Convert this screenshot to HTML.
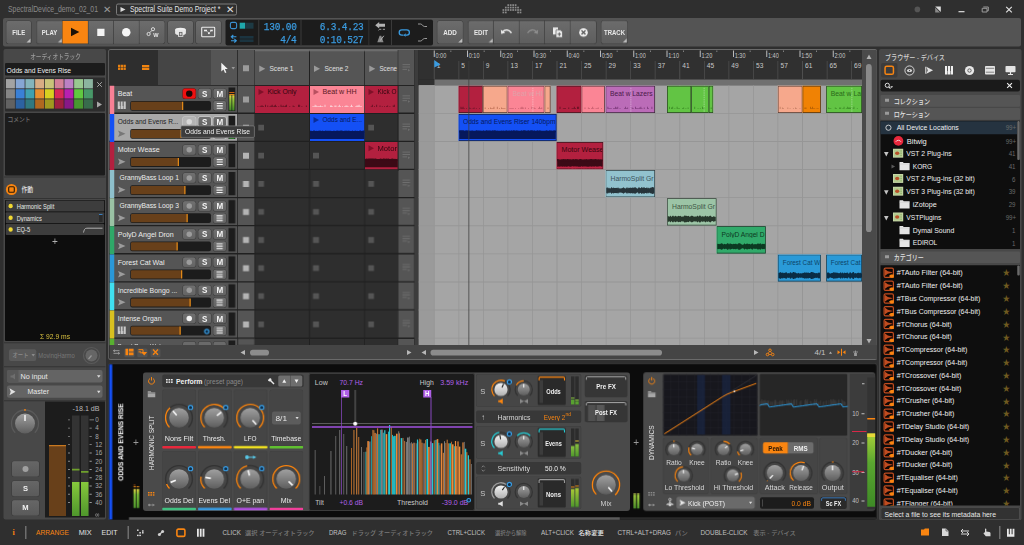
<!DOCTYPE html>
<html lang="ja"><head><meta charset="utf-8"><title>Bitwig Studio</title>
<style>
html,body{margin:0;padding:0;background:#2f2f2f;overflow:hidden;}
body{width:1024px;height:545px;position:relative;overflow:hidden;font-family:"Liberation Sans","Noto Sans CJK JP",sans-serif;}
#r{position:absolute;left:0;top:0;width:4096px;height:2180px;transform:scale(0.25);transform-origin:0 0;overflow:hidden;}
#r div,#r svg,#r span.t{position:absolute;}
span.t{white-space:nowrap;display:block;}
svg{overflow:visible;}
</style></head>
<body>
<div id="r">
<div style="left:0px;top:0px;width:4096px;height:72px;background:#2f2f2f;"></div>
<span class="t" style="top:11.8px;font-size:34px;line-height:50px;color:#8a8a8a;left:32px;transform-origin:0 50%;transform:scaleX(0.807);">SpectralDevice_demo_02_01</span>
<span class="t" style="top:10.2px;font-size:38px;line-height:54px;color:#9a9a9a;left:410px;transform-origin:0 50%;transform:scaleX(1.000);">✕</span>
<div style="left:464px;top:14px;width:484px;height:48px;background:transparent;border-radius:8px;border:4px solid #7c7c7c;box-sizing:border-box;"></div>
<svg style="left:482px;top:28px;width:20px;height:20px;" viewBox="0 0 5 5"><path d="M0 0L5 2.5L0 5Z" fill="#ddd"/></svg>
<span class="t" style="top:11.8px;font-size:34px;line-height:50px;color:#e6e6e6;left:520px;transform-origin:0 50%;transform:scaleX(0.805);">Spectral Suite Demo Project *</span>
<span class="t" style="top:10.2px;font-size:38px;line-height:54px;color:#e0e0e0;left:902px;transform-origin:0 50%;transform:scaleX(1.000);">✕</span>
<svg style="left:2010px;top:17.2px;width:80px;height:40px;" viewBox="0 0 20 10"><rect x="4.90" y="0.00" width="1.7" height="1.7" fill="#8c8c8c"/><rect x="7.35" y="0.00" width="1.7" height="1.7" fill="#8c8c8c"/><rect x="9.80" y="0.00" width="1.7" height="1.7" fill="#8c8c8c"/><rect x="12.25" y="0.00" width="1.7" height="1.7" fill="#8c8c8c"/><rect x="2.45" y="2.45" width="1.7" height="1.7" fill="#8c8c8c"/><rect x="4.90" y="2.45" width="1.7" height="1.7" fill="#8c8c8c"/><rect x="7.35" y="2.45" width="1.7" height="1.7" fill="#8c8c8c"/><rect x="9.80" y="2.45" width="1.7" height="1.7" fill="#8c8c8c"/><rect x="12.25" y="2.45" width="1.7" height="1.7" fill="#8c8c8c"/><rect x="14.70" y="2.45" width="1.7" height="1.7" fill="#8c8c8c"/><rect x="0.00" y="4.90" width="1.7" height="1.7" fill="#8c8c8c"/><rect x="2.45" y="4.90" width="1.7" height="1.7" fill="#8c8c8c"/><rect x="4.90" y="4.90" width="1.7" height="1.7" fill="#8c8c8c"/><rect x="7.35" y="4.90" width="1.7" height="1.7" fill="#8c8c8c"/><rect x="9.80" y="4.90" width="1.7" height="1.7" fill="#8c8c8c"/><rect x="12.25" y="4.90" width="1.7" height="1.7" fill="#8c8c8c"/><rect x="14.70" y="4.90" width="1.7" height="1.7" fill="#8c8c8c"/><rect x="17.15" y="4.90" width="1.7" height="1.7" fill="#8c8c8c"/><rect x="0.00" y="7.35" width="1.7" height="1.7" fill="#8c8c8c"/><rect x="2.45" y="7.35" width="1.7" height="1.7" fill="#8c8c8c"/><rect x="14.70" y="7.35" width="1.7" height="1.7" fill="#8c8c8c"/><rect x="17.15" y="7.35" width="1.7" height="1.7" fill="#8c8c8c"/></svg>
<svg style="left:3648px;top:12px;width:440px;height:48px;" viewBox="0 0 110 12"><circle cx="5.400" cy="6.400" r="2.800" fill="#555"/>
    <path d="M23.200 3.400H28.800V9Z" fill="#dcdcdc"/><path d="M23.200 4.600V9.400H28Z" fill="#8a8a8a"/>
    <rect x="46.500" y="8" width="6" height="1.300" fill="#d0d0d0"/>
    <path d="M71.300 4H76.300V7.800H75M70.200 5.300H75V9H70.200Z" fill="none" stroke="#9a9a9a" stroke-width="1"/>
    <path d="M94.200 3.800L99.800 9.400M99.800 3.800L94.200 9.400" stroke="#e0e0e0" stroke-width="1.200"/></svg>
<div style="left:12px;top:72px;width:4072px;height:114px;background:#545454;border-radius:8px;"></div>
<div style="left:26px;top:84px;width:98px;height:90px;background:linear-gradient(#6c6c6c,#5e5e5e);border-radius:8px;box-shadow:0 0 0 2.4px #3c3c3c;"></div>
<span class="t" style="top:107.2px;font-size:28px;line-height:44px;color:#e8e8e8;font-weight:700;left:-725.2px;width:1600px;text-align:center;transform-origin:50% 50%;transform:scaleX(0.857);">FILE</span>
<svg style="left:106px;top:154px;width:16px;height:16px;" viewBox="0 0 4 4"><path d="M4 0V4H0Z" fill="#bdbdbd"/></svg>
<div style="left:148px;top:84px;width:102px;height:90px;background:linear-gradient(#6c6c6c,#5e5e5e);border-radius:8px 0 0 8px;box-shadow:0 0 0 2.4px #3c3c3c;"></div>
<span class="t" style="top:107.2px;font-size:28px;line-height:44px;color:#e8e8e8;font-weight:700;left:-602px;width:1600px;text-align:center;transform-origin:50% 50%;transform:scaleX(0.860);">PLAY</span>
<svg style="left:232px;top:154px;width:16px;height:16px;" viewBox="0 0 4 4"><path d="M4 0V4H0Z" fill="#bdbdbd"/></svg>
<div style="left:250px;top:84px;width:102px;height:90px;background:#f98511;border-radius:0;box-shadow:0 0 0 2.4px #3c3c3c;"></div>
<svg style="left:282px;top:110px;width:36px;height:36px;" viewBox="0 0 9 9"><path d="M0.5 0.3L8.8 4.5L0.5 8.7Z" fill="#1a1208"/></svg>
<div style="left:354.4px;top:84px;width:98.4px;height:90px;background:linear-gradient(#6c6c6c,#5e5e5e);border-radius:0;box-shadow:0 0 0 2.4px #3c3c3c;"></div>
<div style="left:389.2px;top:114.8px;width:28.8px;height:28.8px;background:#f4f4f4;"></div>
<div style="left:455.2px;top:84px;width:100.8px;height:90px;background:linear-gradient(#6c6c6c,#5e5e5e);border-radius:0;box-shadow:0 0 0 2.4px #3c3c3c;"></div>
<div style="left:488px;top:111.6px;width:34.4px;height:34.4px;background:#f6f6f6;border-radius:20px;"></div>
<div style="left:558.4px;top:84px;width:99.6px;height:90px;background:linear-gradient(#6c6c6c,#5e5e5e);border-radius:0 8px 8px 0;box-shadow:0 0 0 2.4px #3c3c3c;"></div>
<svg style="left:584px;top:104px;width:56px;height:48px;" viewBox="0 0 14 12"><circle cx="2.6" cy="8" r="1.6" fill="none" stroke="#e4e4e4" stroke-width="0.9"/><circle cx="7" cy="3.2" r="1.6" fill="none" stroke="#e4e4e4" stroke-width="0.9"/><path d="M3.7 6.8L5.9 4.4" stroke="#e4e4e4" stroke-width="0.9"/><text x="7.2" y="11.3" font-family="Liberation Sans,sans-serif" font-size="5.6" font-weight="700" fill="#e8e8e8">W</text></svg>
<div style="left:672px;top:84px;width:100px;height:90px;background:linear-gradient(#6c6c6c,#5e5e5e);border-radius:8px;box-shadow:0 0 0 2.4px #3c3c3c;"></div>
<svg style="left:694px;top:106px;width:56px;height:44px;" viewBox="0 0 14 11"><ellipse cx="7" cy="3.2" rx="5.4" ry="2" fill="#f0f0f0"/><path d="M1.6 3.2v3.6c0 1.1 2.4 2 5.4 2s5.4-.9 5.4-2V3.200z" fill="#e6e6e6"/><rect x="5" y="5.2" width="4.4" height="4.6" fill="#5c5c5c" stroke="#f0f0f0" stroke-width="0.8"/><path d="M7.2 6.3v2.4M6 7.500h2.400" stroke="#f0f0f0" stroke-width="0.8"/></svg>
<div style="left:784px;top:84px;width:100px;height:90px;background:linear-gradient(#6c6c6c,#5e5e5e);border-radius:8px;box-shadow:0 0 0 2.4px #3c3c3c;"></div>
<svg style="left:804px;top:106px;width:60px;height:44px;" viewBox="0 0 15 11"><rect x="0.7" y="0.7" width="13" height="9.6" fill="none" stroke="#ececec" stroke-width="1.1" rx="0.8"/><rect x="3" y="3.2" width="3" height="1.6" fill="#ececec"/><rect x="9.2" y="3.2" width="2.6" height="1.6" fill="#ececec"/><rect x="7" y="5.8" width="1.8" height="1.800" fill="#ececec"/><path d="M6 4.8l1.400 1.400M9.800 4.8L8.600 6" stroke="#ececec" stroke-width="0.7"/></svg>
<div style="left:902px;top:78px;width:830px;height:104px;background:#1c1c1c;border-radius:8px;"></div>
<div style="left:1033.2px;top:80px;width:3.6px;height:100px;background:#3a3a3a;"></div>
<div style="left:1202.4px;top:80px;width:3.6px;height:100px;background:#3a3a3a;"></div>
<div style="left:1473.6px;top:80px;width:3.6px;height:100px;background:#3a3a3a;"></div>
<div style="left:1564.4px;top:80px;width:3.6px;height:100px;background:#3a3a3a;"></div>
<svg style="left:920px;top:88px;width:104px;height:88px;" viewBox="0 0 26 22"><rect x="0.400" y="0.400" width="6.200" height="6.200" rx="1.600" fill="none" stroke="#3a8fd0" stroke-width="1.100"/>
    <rect x="9.700" y="0.7" width="5.300" height="6" fill="#1fa8ac"/><rect x="15" y="0.7" width="8.500" height="6" fill="#1d3a44"/>
    <path d="M6.400 14.800H1.500M3.300 13l-2 1.800l2 1.800M1 18.700h4.900M4.300 16.900l2 1.800l-2 1.800" fill="none" stroke="#3a9be0" stroke-width="1.100"/>
    <rect x="9.700" y="14" width="13.800" height="2.600" fill="#1b3440"/><rect x="9.700" y="17.400" width="13.800" height="2.600" fill="#1b3440"/></svg>
<span class="t" style="top:77.2px;font-size:44px;line-height:60px;color:#3a9be0;right:2910px;transform-origin:100% 50%;transform:scaleX(0.860);font-family:'Liberation Mono',monospace;letter-spacing:-1px;-webkit-text-stroke:1px #3a9be0;">130.00</span>
<span class="t" style="top:128.4px;font-size:44px;line-height:60px;color:#3a9be0;right:2910px;transform-origin:100% 50%;transform:scaleX(0.860);font-family:'Liberation Mono',monospace;letter-spacing:-1px;-webkit-text-stroke:1px #3a9be0;">4/4</span>
<span class="t" style="top:77.2px;font-size:44px;line-height:60px;color:#3a9be0;right:2642px;transform-origin:100% 50%;transform:scaleX(0.860);font-family:'Liberation Mono',monospace;letter-spacing:-1px;-webkit-text-stroke:1px #3a9be0;">6.3.4.23</span>
<span class="t" style="top:128.4px;font-size:44px;line-height:60px;color:#3a9be0;right:2642px;transform-origin:100% 50%;transform:scaleX(0.860);font-family:'Liberation Mono',monospace;letter-spacing:-1px;-webkit-text-stroke:1px #3a9be0;">0:10.527</span>
<svg style="left:1492px;top:86px;width:64px;height:88px;" viewBox="0 0 16 22"><path d="M2.200 3.700L6.200 0.500V2.200H12V5.200H6.200V6.900Z" fill="#b4b4b4"/><path d="M6.500 7.800H8.300M9.800 7.800H12M6.500 7.800L5.600 8.900" stroke="#a0a0a0" stroke-width="1" fill="none"/>
    <path d="M4.300 20.700L6.600 14.300H8.200L10.500 20.700Z" fill="#8a8a8a"/><path d="M7.400 19L10.800 14.300" stroke="#bdbdbd" stroke-width="0.9"/></svg>
<svg style="left:1593.6px;top:116.8px;width:46.4px;height:30px;" viewBox="0 0 11.6 7.5"><path d="M5 5.900H3.300A2.600 2.600 0 0 1 3.300 0.700H8.300A2.600 2.600 0 0 1 8.300 5.900H7" fill="none" stroke="#3a9be0" stroke-width="1.300"/><path d="M7.200 4L4.800 5.900L7.200 7.500Z" fill="#3a9be0"/></svg>
<svg style="left:1670.4px;top:86px;width:36px;height:88px;" viewBox="0 0 9 22"><path d="M0.500 2.500H3C5 2.500 5 5 7 5H9.500" fill="none" stroke="#aaa" stroke-width="0.9"/><path d="M0.500 19.500H3C5 19.500 5 17 7 17H9.500" fill="none" stroke="#aaa" stroke-width="0.9"/></svg>
<div style="left:1750px;top:84px;width:101.2px;height:90px;background:linear-gradient(#6c6c6c,#5e5e5e);border-radius:8px;box-shadow:0 0 0 2.4px #3c3c3c;"></div>
<span class="t" style="top:107.2px;font-size:28px;line-height:44px;color:#e8e8e8;font-weight:700;left:1000px;width:1600px;text-align:center;transform-origin:50% 50%;transform:scaleX(0.897);">ADD</span>
<svg style="left:1833.2px;top:154px;width:16px;height:16px;" viewBox="0 0 4 4"><path d="M4 0V4H0Z" fill="#bdbdbd"/></svg>
<div style="left:1873.6px;top:84px;width:100px;height:90px;background:linear-gradient(#6c6c6c,#5e5e5e);border-radius:8px 0 0 8px;box-shadow:0 0 0 2.4px #3c3c3c;"></div>
<span class="t" style="top:107.2px;font-size:28px;line-height:44px;color:#e8e8e8;font-weight:700;left:1124px;width:1600px;text-align:center;transform-origin:50% 50%;transform:scaleX(0.878);">EDIT</span>
<svg style="left:1955.2px;top:154px;width:16px;height:16px;" viewBox="0 0 4 4"><path d="M4 0V4H0Z" fill="#bdbdbd"/></svg>
<div style="left:1975.2px;top:84px;width:101.2px;height:90px;background:linear-gradient(#6c6c6c,#5e5e5e);border-radius:0;box-shadow:0 0 0 2.4px #3c3c3c;"></div>
<svg style="left:2000px;top:110px;width:52px;height:36px;" viewBox="0 0 13 9"><path d="M2.500 4.500C5 1.500 9 1.800 11.500 5.500" fill="none" stroke="#ececec" stroke-width="1.400"/><path d="M0.800 2.200L1.300 6.600L5.300 5.200Z" fill="#ececec"/></svg>
<div style="left:2078px;top:84px;width:100.4px;height:90px;background:linear-gradient(#6c6c6c,#5e5e5e);border-radius:0;box-shadow:0 0 0 2.4px #3c3c3c;"></div>
<svg style="left:2104px;top:110px;width:52px;height:36px;" viewBox="0 0 13 9"><path d="M10.500 4.500C8 1.500 4 1.800 1.500 5.500" fill="none" stroke="#8e8e8e" stroke-width="1.300"/><path d="M12.200 2.200L11.700 6.600L7.700 5.200Z" fill="#8e8e8e"/></svg>
<div style="left:2180px;top:84px;width:100.8px;height:90px;background:linear-gradient(#6c6c6c,#5e5e5e);border-radius:0;box-shadow:0 0 0 2.4px #3c3c3c;"></div>
<svg style="left:2210px;top:108px;width:44px;height:44px;" viewBox="0 0 11 11"><path d="M0.500 0.500H5.500V7.500H0.500Z" fill="#ececec"/><path d="M3.500 3H8L10 5V10.500H3.500Z" fill="#ececec" stroke="#5e5e5e" stroke-width="0.700"/><path d="M6.800 5.500V9M5 7.200H8.600" stroke="#5e5e5e" stroke-width="1"/></svg>
<div style="left:2282.4px;top:84px;width:101.6px;height:90px;background:linear-gradient(#6c6c6c,#5e5e5e);border-radius:0 8px 8px 0;box-shadow:0 0 0 2.4px #3c3c3c;"></div>
<svg style="left:2314px;top:110px;width:40px;height:40px;" viewBox="0 0 10 10"><circle cx="5" cy="5" r="4.300" fill="#f0f0f0"/><path d="M3 3L7 7M7 3L3 7" stroke="#5e5e5e" stroke-width="1.400"/></svg>
<div style="left:2406px;top:84px;width:103.2px;height:90px;background:linear-gradient(#6c6c6c,#5e5e5e);border-radius:8px;box-shadow:0 0 0 2.4px #3c3c3c;"></div>
<span class="t" style="top:107.2px;font-size:28px;line-height:44px;color:#e8e8e8;font-weight:700;left:1657.6px;width:1600px;text-align:center;transform-origin:50% 50%;transform:scaleX(0.857);">TRACK</span>
<svg style="left:2491.2px;top:154px;width:16px;height:16px;" viewBox="0 0 4 4"><path d="M4 0V4H0Z" fill="#bdbdbd"/></svg>
<div style="left:14px;top:196px;width:410px;height:1882px;background:#484848;border-radius:8px;"></div>
<span class="t" style="top:204px;font-size:28px;line-height:44px;color:#9a9a9a;font-weight:500;left:-578px;width:1600px;text-align:center;transform-origin:50% 50%;transform:scaleX(0.810);">オーディオトラック</span>
<div style="left:20px;top:252px;width:400px;height:50px;background:#1c1c1c;border-radius:4px;"></div>
<span class="t" style="top:256.4px;font-size:32px;line-height:48px;color:#efefef;left:26px;transform-origin:0 50%;transform:scaleX(0.834);">Odds and Evens Rise</span>
<div style="left:20px;top:310px;width:400px;height:136px;background:#2c2c2c;border-radius:4px;"></div>
<svg style="left:20px;top:310px;width:400px;height:136px;" viewBox="0 0 100 34"><rect x="0.90" y="1.60" width="9" height="9.3" fill="#a3a3a3"/><rect x="10.65" y="1.60" width="9" height="9.3" fill="#86a6d4"/><rect x="20.40" y="1.60" width="9" height="9.3" fill="#84b4bc"/><rect x="30.15" y="1.60" width="9" height="9.3" fill="#d8ac84"/><rect x="39.90" y="1.60" width="9" height="9.3" fill="#c9c47a"/><rect x="49.65" y="1.60" width="9" height="9.3" fill="#d48098"/><rect x="59.40" y="1.60" width="9" height="9.3" fill="#bc80c4"/><rect x="69.15" y="1.60" width="9" height="9.3" fill="#98c890"/><rect x="78.90" y="1.60" width="9" height="9.3" fill="#8cb4a0"/><rect x="0.90" y="11.70" width="9" height="9.3" fill="#858585"/><rect x="10.65" y="11.70" width="9" height="9.3" fill="#3a80d6"/><rect x="20.40" y="11.70" width="9" height="9.3" fill="#40a0b0"/><rect x="30.15" y="11.70" width="9" height="9.3" fill="#e89030"/><rect x="39.90" y="11.70" width="9" height="9.3" fill="#d8d020"/><rect x="49.65" y="11.70" width="9" height="9.3" fill="#d82858"/><rect x="59.40" y="11.70" width="9" height="9.3" fill="#b820b0"/><rect x="69.15" y="11.70" width="9" height="9.3" fill="#60c840"/><rect x="78.90" y="11.70" width="9" height="9.3" fill="#489868"/><rect x="0.90" y="21.80" width="9" height="9.3" fill="#626262"/><rect x="10.65" y="21.80" width="9" height="9.3" fill="#2c62a2"/><rect x="20.40" y="21.80" width="9" height="9.3" fill="#307880"/><rect x="30.15" y="21.80" width="9" height="9.3" fill="#b06820"/><rect x="39.90" y="21.80" width="9" height="9.3" fill="#a09820"/><rect x="49.65" y="21.80" width="9" height="9.3" fill="#a02040"/><rect x="59.40" y="21.80" width="9" height="9.3" fill="#881888"/><rect x="69.15" y="21.80" width="9" height="9.3" fill="#489830"/><rect x="78.90" y="21.80" width="9" height="9.3" fill="#386c4c"/></svg>
<svg style="left:386px;top:326px;width:24px;height:24px;" viewBox="0 0 6 6"><path d="M0.700 0.700L5.300 5.300M5.300 0.700L0.700 5.300" stroke="#a8a8a8" stroke-width="1"/></svg>
<svg style="left:388px;top:406px;width:20px;height:24px;" viewBox="0 0 5 6"><path d="M0 0L5 3L0 6Z" fill="#a8a8a8"/></svg>
<div style="left:20px;top:452px;width:400px;height:250px;background:#1c1c1c;border-radius:4px;"></div>
<span class="t" style="top:457.8px;font-size:26px;line-height:42px;color:#6e6e6e;font-weight:500;left:30px;transform-origin:0 50%;transform:scaleX(0.885);">コメント</span>
<div style="left:16px;top:706px;width:406px;height:4px;background:#333;"></div>
<svg style="left:22px;top:734px;width:48px;height:48px;" viewBox="0 0 12 12"><circle cx="6" cy="6" r="5.600" fill="#f98511"/><rect x="3.200" y="3.200" width="5.600" height="5.600" rx="1" fill="none" stroke="#2a1a06" stroke-width="1.100"/></svg>
<span class="t" style="top:737.2px;font-size:28px;line-height:44px;color:#e0e0e0;font-weight:500;left:86px;transform-origin:0 50%;transform:scaleX(0.839);">作動</span>
<div style="left:16px;top:792px;width:406px;height:4px;background:#333;"></div>
<div style="left:20px;top:800px;width:400px;height:564px;background:#0d0d0d;border-radius:4px;"></div>
<div style="left:23.2px;top:802px;width:393.6px;height:43.6px;background:#3d3d3d;border-radius:4px;"></div>
<div style="left:33.6px;top:815.2px;width:17.6px;height:17.6px;background:#f0d832;border-radius:8.8px;"></div>
<span class="t" style="top:802.2px;font-size:30px;line-height:46px;color:#e6e6e6;left:67.2px;transform-origin:0 50%;transform:scaleX(0.769);">Harmonic Split</span>
<div style="left:23.2px;top:849px;width:393.6px;height:43.6px;background:#3d3d3d;border-radius:4px;"></div>
<div style="left:33.6px;top:862.2px;width:17.6px;height:17.6px;background:#f0d832;border-radius:8.8px;"></div>
<span class="t" style="top:849.2px;font-size:30px;line-height:46px;color:#e6e6e6;left:67.2px;transform-origin:0 50%;transform:scaleX(0.759);">Dynamics</span>
<div style="left:23.2px;top:896px;width:393.6px;height:43.6px;background:#3d3d3d;border-radius:4px;"></div>
<div style="left:33.6px;top:909.2px;width:17.6px;height:17.6px;background:#f0d832;border-radius:8.8px;"></div>
<span class="t" style="top:896.2px;font-size:30px;line-height:46px;color:#e6e6e6;left:67.2px;transform-origin:0 50%;transform:scaleX(0.771);">EQ-5</span>
<div style="left:396px;top:856px;width:14px;height:32px;background:#2a2a2a;"></div>
<div style="left:396px;top:856px;width:14px;height:4px;background:#3a7fc0;"></div>
<svg style="left:332px;top:908px;width:80px;height:24px;" viewBox="0 0 20 6"><path d="M0.500 5.500C1.500 1.500 2 1.200 5 1.200H19.500" fill="none" stroke="#b0b0b0" stroke-width="1"/></svg>
<span class="t" style="top:937.2px;font-size:40px;line-height:56px;color:#b0b0b0;left:-580px;width:1600px;text-align:center;transform-origin:50% 50%;transform:scaleX(1.000);">+</span>
<span class="t" style="top:1324.2px;font-size:30px;line-height:46px;color:#d8c040;left:-580px;width:1600px;text-align:center;transform-origin:50% 50%;transform:scaleX(0.898);">Σ 92.9 ms</span>
<div style="left:16px;top:1369.2px;width:406px;height:4px;background:#333;"></div>
<div style="left:36px;top:1397.2px;width:109.2px;height:46.8px;background:#5a5a5a;border-radius:8px;"></div>
<span class="t" style="top:1400.8px;font-size:24px;line-height:40px;color:#8a8a8a;font-weight:500;left:50px;transform-origin:0 50%;transform:scaleX(0.889);">オート</span>
<svg style="left:126px;top:1416px;width:14px;height:10px;" viewBox="0 0 3.5 2.5"><path d="M0 0H3.500L1.750 2.500Z" fill="#8a8a8a"/></svg>
<span class="t" style="top:1398.8px;font-size:28px;line-height:44px;color:#777;left:153.2px;transform-origin:0 50%;transform:scaleX(0.838);">MovingHarmo</span>
<svg style="left:330px;top:1386px;width:72px;height:72px;" viewBox="0 0 18 18"><circle cx="9" cy="9" r="8" fill="none" stroke="#5a5a5a" stroke-width="1.200"/><circle cx="9" cy="9" r="6" fill="#666"/><path d="M9 9L6 12.500" stroke="#999" stroke-width="1.200"/></svg>
<div style="left:16px;top:1465.2px;width:406px;height:4px;background:#333;"></div>
<div style="left:28px;top:1480px;width:382px;height:50.4px;background:#646464;border-radius:8px;"></div>
<div style="left:28px;top:1480px;width:46px;height:50.4px;background:#585858;border-radius:8px 0 0 8px;"></div>
<svg style="left:42px;top:1494px;width:20px;height:24px;" viewBox="0 0 5 6"><path d="M0 2H1.800L4.500 0V6L1.800 4H0Z" fill="#6e6e6e"/></svg>
<span class="t" style="top:1482px;font-size:32px;line-height:48px;color:#e8e8e8;left:82px;transform-origin:0 50%;transform:scaleX(0.906);">No input</span>
<svg style="left:388px;top:1501.2px;width:14px;height:10px;" viewBox="0 0 3.5 2.5"><path d="M0 0H3.500L1.750 2.500Z" fill="#ddd"/></svg>
<div style="left:28px;top:1542.4px;width:382px;height:48.8px;background:#646464;border-radius:8px;"></div>
<svg style="left:38px;top:1552.8px;width:24px;height:28px;" viewBox="0 0 6 7"><path d="M0 0L6 3.500L0 7L1.200 3.500Z" fill="#e0e0e0"/></svg>
<span class="t" style="top:1541.6px;font-size:32px;line-height:48px;color:#e8e8e8;left:110px;transform-origin:0 50%;transform:scaleX(0.879);">Master</span>
<svg style="left:388px;top:1563.2px;width:14px;height:10px;" viewBox="0 0 3.5 2.5"><path d="M0 0H3.500L1.750 2.500Z" fill="#ddd"/></svg>
<div style="left:16px;top:1601.2px;width:406px;height:4px;background:#333;"></div>
<div style="left:180px;top:1606px;width:240px;height:464px;background:#1c1c1c;"></div>
<svg style="left:40px;top:1634px;width:120px;height:120px;" viewBox="0 0 30 30"><path d="M5.200 24.300A13.500 13.500 0 1 1 24.800 24.300" fill="none" stroke="#5a5a5a" stroke-width="1.300"/>
    <defs><linearGradient id="kg" x1="0" y1="0" x2="0" y2="1"><stop offset="0" stop-color="#a0a0a0"/><stop offset="1" stop-color="#5e5e5e"/></linearGradient></defs>
    <circle cx="15" cy="15" r="10" fill="url(#kg)"/><path d="M15 12.500V6.500" stroke="#f4f4f4" stroke-width="1.500"/><circle cx="15" cy="1.400" r="0.900" fill="#f98511"/></svg>
<span class="t" style="top:1611px;font-size:30px;line-height:46px;color:#b8b8b8;right:3698px;transform-origin:100% 50%;transform:scaleX(0.952);">-18.1 dB</span>
<div style="left:196px;top:1780px;width:68px;height:284px;background:#68401a;"></div>
<div style="left:196px;top:1780px;width:68px;height:4.8px;background:#c87820;"></div>
<div style="left:288px;top:1662px;width:30px;height:402px;background:#333;"></div>
<div style="left:324px;top:1662px;width:30px;height:402px;background:#333;"></div>
<div style="left:288px;top:1928px;width:30px;height:136px;background:linear-gradient(#86c83c,#4f962c);"></div>
<div style="left:324px;top:1928px;width:30px;height:136px;background:linear-gradient(#86c83c,#4f962c);"></div>
<div style="left:288px;top:1875.2px;width:30px;height:7.2px;background:#6fa02c;"></div>
<div style="left:324px;top:1884px;width:30px;height:7.2px;background:#6fa02c;"></div>
<div style="left:272px;top:1677.6px;width:8px;height:3.6px;background:#888;"></div>
<div style="left:358px;top:1677.6px;width:18px;height:3.6px;background:#999;"></div>
<span class="t" style="top:1657.2px;font-size:28px;line-height:44px;color:#a8a8a8;left:381.2px;transform-origin:0 50%;transform:scaleX(0.900);">0</span>
<div style="left:272px;top:1710.68px;width:8px;height:3.6px;background:#888;"></div>
<div style="left:358px;top:1710.68px;width:9.2px;height:3.6px;background:#999;"></div>
<span class="t" style="top:1690.28px;font-size:28px;line-height:44px;color:#a8a8a8;left:381.2px;transform-origin:0 50%;transform:scaleX(0.900);">4</span>
<div style="left:272px;top:1743.76px;width:8px;height:3.6px;background:#888;"></div>
<div style="left:358px;top:1743.76px;width:9.2px;height:3.6px;background:#999;"></div>
<span class="t" style="top:1723.36px;font-size:28px;line-height:44px;color:#a8a8a8;left:381.2px;transform-origin:0 50%;transform:scaleX(0.900);">8</span>
<div style="left:272px;top:1776.84px;width:8px;height:3.6px;background:#888;"></div>
<div style="left:358px;top:1776.84px;width:9.2px;height:3.6px;background:#999;"></div>
<span class="t" style="top:1756.44px;font-size:28px;line-height:44px;color:#a8a8a8;left:381.2px;transform-origin:0 50%;transform:scaleX(0.900);">12</span>
<div style="left:272px;top:1809.92px;width:8px;height:3.6px;background:#888;"></div>
<div style="left:358px;top:1809.92px;width:9.2px;height:3.6px;background:#999;"></div>
<span class="t" style="top:1789.52px;font-size:28px;line-height:44px;color:#a8a8a8;left:381.2px;transform-origin:0 50%;transform:scaleX(0.900);">16</span>
<div style="left:272px;top:1843px;width:8px;height:3.6px;background:#888;"></div>
<div style="left:358px;top:1843px;width:9.2px;height:3.6px;background:#999;"></div>
<span class="t" style="top:1822.6px;font-size:28px;line-height:44px;color:#a8a8a8;left:381.2px;transform-origin:0 50%;transform:scaleX(0.900);">20</span>
<div style="left:272px;top:1876.08px;width:8px;height:3.6px;background:#888;"></div>
<div style="left:358px;top:1876.08px;width:9.2px;height:3.6px;background:#999;"></div>
<span class="t" style="top:1855.68px;font-size:28px;line-height:44px;color:#a8a8a8;left:381.2px;transform-origin:0 50%;transform:scaleX(0.900);">24</span>
<div style="left:272px;top:1909.16px;width:8px;height:3.6px;background:#888;"></div>
<div style="left:358px;top:1909.16px;width:9.2px;height:3.6px;background:#999;"></div>
<span class="t" style="top:1888.76px;font-size:28px;line-height:44px;color:#a8a8a8;left:381.2px;transform-origin:0 50%;transform:scaleX(0.900);">28</span>
<div style="left:272px;top:1942.24px;width:8px;height:3.6px;background:#888;"></div>
<div style="left:358px;top:1942.24px;width:9.2px;height:3.6px;background:#999;"></div>
<span class="t" style="top:1921.84px;font-size:28px;line-height:44px;color:#a8a8a8;left:381.2px;transform-origin:0 50%;transform:scaleX(0.900);">32</span>
<div style="left:272px;top:1975.32px;width:8px;height:3.6px;background:#888;"></div>
<div style="left:358px;top:1975.32px;width:9.2px;height:3.6px;background:#999;"></div>
<span class="t" style="top:1954.92px;font-size:28px;line-height:44px;color:#a8a8a8;left:381.2px;transform-origin:0 50%;transform:scaleX(0.900);">36</span>
<div style="left:272px;top:2008.4px;width:8px;height:3.6px;background:#888;"></div>
<div style="left:358px;top:2008.4px;width:9.2px;height:3.6px;background:#999;"></div>
<span class="t" style="top:1988px;font-size:28px;line-height:44px;color:#a8a8a8;left:381.2px;transform-origin:0 50%;transform:scaleX(0.900);">40</span>
<span class="t" style="top:2036.4px;font-size:28px;line-height:44px;color:#a8a8a8;left:380px;transform-origin:0 50%;transform:scaleX(0.900);">∞</span>
<div style="left:48px;top:1845.2px;width:108px;height:60.8px;background:linear-gradient(#666,#5a5a5a);border-radius:8px;box-shadow:0 0 0 2.4px #3c3c3c;"></div>
<div style="left:48px;top:1924px;width:108px;height:60.8px;background:linear-gradient(#666,#5a5a5a);border-radius:8px;box-shadow:0 0 0 2.4px #3c3c3c;"></div>
<div style="left:48px;top:2001.2px;width:108px;height:60.8px;background:linear-gradient(#666,#5a5a5a);border-radius:8px;box-shadow:0 0 0 2.4px #3c3c3c;"></div>
<div style="left:90px;top:1864px;width:24px;height:24px;background:#a0a0a0;border-radius:12px;"></div>
<span class="t" style="top:1927.6px;font-size:32px;line-height:48px;color:#f0f0f0;font-weight:700;left:-698px;width:1600px;text-align:center;transform-origin:50% 50%;transform:scaleX(0.950);">S</span>
<span class="t" style="top:2004.4px;font-size:32px;line-height:48px;color:#f0f0f0;font-weight:700;left:-698px;width:1600px;text-align:center;transform-origin:50% 50%;transform:scaleX(0.950);">M</span>
<div style="left:432.8px;top:196px;width:3076px;height:1244px;background:#6a6a6a;border-radius:10px;"></div>
<div style="left:437.2px;top:200px;width:3068px;height:1236px;background:#202020;border-radius:6px;"></div>
<div style="left:438px;top:200px;width:194px;height:140px;background:#2e2e2e;"></div>
<div style="left:632px;top:200px;width:212px;height:140px;background:#454545;"></div>
<div style="left:844px;top:200px;width:105.2px;height:140px;background:#555;"></div>
<div style="left:952px;top:200px;width:66px;height:140px;background:#555;"></div>
<svg style="left:472px;top:259.2px;width:32px;height:20.8px;" viewBox="0 0 8 5.2"><rect x="0.00" y="0.00" width="2.3" height="2.4" fill="#e88010"/><rect x="0.00" y="2.80" width="2.3" height="2.4" fill="#e88010"/><rect x="2.75" y="0.00" width="2.3" height="2.4" fill="#e88010"/><rect x="2.75" y="2.80" width="2.3" height="2.4" fill="#e88010"/><rect x="5.50" y="0.00" width="2.3" height="2.4" fill="#e88010"/><rect x="5.50" y="2.80" width="2.3" height="2.4" fill="#e88010"/></svg>
<div style="left:567.6px;top:260px;width:29.6px;height:8.8px;background:#f08410;"></div>
<div style="left:567.6px;top:271.2px;width:29.6px;height:8.8px;background:#f08410;"></div>
<svg style="left:884px;top:250px;width:32px;height:44px;" viewBox="0 0 8 11"><path d="M0.300 0.300V9L2.500 7L4 10.500L5.400 9.900L3.900 6.500H6.800Z" fill="#f2f2f2"/></svg>
<svg style="left:926px;top:268px;width:14px;height:10px;" viewBox="0 0 3.5 2.5"><path d="M0 0H3.500L1.750 2.500Z" fill="#999"/></svg>
<div style="left:972px;top:260.8px;width:24px;height:24px;background:#9a9a9a;"></div>
<div style="left:438px;top:343.2px;width:511.2px;height:107.2px;background:#555;"></div>
<div style="left:439.2px;top:343.2px;width:18px;height:112.4px;background:#f78095;"></div>
<div style="left:952px;top:343.2px;width:66px;height:107.2px;background:#555;"></div>
<span class="t" style="top:348.8px;font-size:32px;line-height:48px;color:#ececec;left:471.2px;transform-origin:0 50%;transform:scaleX(0.881);">Beat</span>
<div style="left:732px;top:355.2px;width:49.6px;height:38.8px;background:#f01010;border-radius:8px;box-shadow:0 0 0 2.4px #801010;"></div>
<div style="left:744px;top:361.8px;width:25.6px;height:25.6px;background:#1c0606;border-radius:12.8px;"></div>
<div style="left:794px;top:355.2px;width:50px;height:38.8px;background:linear-gradient(#707070,#646464);border-radius:8px;box-shadow:0 0 0 2.4px #3e3e3e;"></div>
<span class="t" style="top:349.4px;font-size:34px;line-height:50px;color:#f4f4f4;font-weight:700;left:19px;width:1600px;text-align:center;transform-origin:50% 50%;transform:scaleX(0.950);">S</span>
<div style="left:853.6px;top:355.2px;width:50px;height:38.8px;background:linear-gradient(#707070,#646464);border-radius:8px;box-shadow:0 0 0 2.4px #3e3e3e;"></div>
<span class="t" style="top:349.4px;font-size:34px;line-height:50px;color:#f4f4f4;font-weight:700;left:78.6px;width:1600px;text-align:center;transform-origin:50% 50%;transform:scaleX(0.950);">M</span>
<div style="left:853.6px;top:404.4px;width:50px;height:37.6px;background:linear-gradient(#707070,#646464);border-radius:8px;box-shadow:0 0 0 2.4px #3e3e3e;"></div>
<div style="left:866px;top:411.6px;width:25.2px;height:4.4px;background:#f4f4f4;"></div>
<div style="left:866px;top:421.2px;width:25.2px;height:4.4px;background:#f4f4f4;"></div>
<div style="left:866px;top:430.8px;width:25.2px;height:4.4px;background:#f4f4f4;"></div>
<div style="left:914px;top:350.4px;width:26.8px;height:93.6px;background:#1c1c1c;"></div>
<div style="left:917.2px;top:381.2px;width:9.2px;height:60.8px;background:linear-gradient(#ecd440,#9cc83c 25%,#3e8a26);"></div>
<div style="left:928.8px;top:381.2px;width:9.2px;height:60.8px;background:linear-gradient(#ecd440,#9cc83c 25%,#3e8a26);"></div>
<div style="left:917.2px;top:368.4px;width:20.8px;height:4px;background:#c86010;"></div>
<div style="left:917.2px;top:376px;width:20.8px;height:4px;background:#e08818;"></div>
<div style="left:521px;top:403.6px;width:323px;height:39.2px;background:#1c1c1c;border-radius:8px;"></div>
<div style="left:524px;top:406.8px;width:208px;height:32.8px;background:#68401a;border-radius:4px;"></div>
<div style="left:728px;top:406.8px;width:4.8px;height:32.8px;background:#e08818;"></div>
<svg style="left:471.2px;top:406.4px;width:32px;height:29.6px;" viewBox="0 0 8 7.4"><path d="M0 0H2.100V4.400H2.300V7.400H0ZM3 0H5V4.400H5.200V7.400H2.800V4.400H3ZM5.900 0H8V7.400H5.700V4.400H5.900Z" fill="#c8c8c8"/><path d="M2.100 0H3V4.400H2.100ZM5 0H5.900V4.400H5Z" fill="#7a7a7a"/></svg>
<div style="left:972px;top:386.4px;width:24px;height:24px;background:#9c9c9c;"></div>
<div style="left:438px;top:455.6px;width:511.2px;height:107.2px;background:#a8a8a8;"></div>
<div style="left:439.2px;top:455.6px;width:18px;height:112.4px;background:#1450f5;"></div>
<div style="left:952px;top:455.6px;width:66px;height:107.2px;background:#555;"></div>
<span class="t" style="top:461.2px;font-size:32px;line-height:48px;color:#222;left:471.2px;transform-origin:0 50%;transform:scaleX(0.822);">Odds and Evens R...</span>
<div style="left:732px;top:467.6px;width:49.6px;height:38.8px;background:#b4b4b4;border-radius:8px;box-shadow:0 0 0 3.2px #c8c8c8;"></div>
<div style="left:746px;top:476px;width:22px;height:22px;background:#d8d8d8;border-radius:12px;"></div>
<div style="left:794px;top:467.6px;width:50px;height:38.8px;background:linear-gradient(#707070,#646464);border-radius:8px;box-shadow:0 0 0 3.2px #c8c8c8;"></div>
<span class="t" style="top:461.8px;font-size:34px;line-height:50px;color:#f4f4f4;font-weight:700;left:19px;width:1600px;text-align:center;transform-origin:50% 50%;transform:scaleX(0.950);">S</span>
<div style="left:853.6px;top:467.6px;width:50px;height:38.8px;background:linear-gradient(#707070,#646464);border-radius:8px;box-shadow:0 0 0 3.2px #c8c8c8;"></div>
<span class="t" style="top:461.8px;font-size:34px;line-height:50px;color:#f4f4f4;font-weight:700;left:78.6px;width:1600px;text-align:center;transform-origin:50% 50%;transform:scaleX(0.950);">M</span>
<div style="left:853.6px;top:516.8px;width:50px;height:37.6px;background:linear-gradient(#707070,#646464);border-radius:8px;box-shadow:0 0 0 3.2px #c8c8c8;"></div>
<div style="left:866px;top:524px;width:25.2px;height:4.4px;background:#f4f4f4;"></div>
<div style="left:866px;top:533.6px;width:25.2px;height:4.4px;background:#f4f4f4;"></div>
<div style="left:866px;top:543.2px;width:25.2px;height:4.4px;background:#f4f4f4;"></div>
<div style="left:914px;top:462.8px;width:26.8px;height:93.6px;background:#1c1c1c;"></div>
<div style="left:917.2px;top:549.6px;width:20.8px;height:6.8px;background:#2c7a2c;"></div>
<div style="left:521px;top:516px;width:323px;height:39.2px;background:#1c1c1c;border-radius:8px;"></div>
<div style="left:524px;top:519.2px;width:202.4px;height:32.8px;background:#68401a;border-radius:4px;"></div>
<div style="left:722.4px;top:519.2px;width:4.8px;height:32.8px;background:#e08818;"></div>
<svg style="left:472px;top:521.6px;width:30px;height:26px;" viewBox="0 0 7.5 6.5"><path d="M0 0L7.500 3.250L0 6.500L1.500 3.250Z" fill="#777" /></svg>
<div style="left:972px;top:498.8px;width:24px;height:24px;background:#b4b4b4;"></div>
<div style="left:438px;top:568px;width:511.2px;height:107.2px;background:#555;"></div>
<div style="left:439.2px;top:568px;width:18px;height:112.4px;background:#b3203f;"></div>
<div style="left:952px;top:568px;width:66px;height:107.2px;background:#555;"></div>
<span class="t" style="top:573.6px;font-size:32px;line-height:48px;color:#ececec;left:471.2px;transform-origin:0 50%;transform:scaleX(0.886);">Motor Wease</span>
<div style="left:732px;top:580px;width:49.6px;height:38.8px;background:linear-gradient(#707070,#646464);border-radius:8px;box-shadow:0 0 0 2.4px #3e3e3e;"></div>
<div style="left:746px;top:588.4px;width:22px;height:22px;background:#9c9c9c;border-radius:12px;"></div>
<div style="left:794px;top:580px;width:50px;height:38.8px;background:linear-gradient(#707070,#646464);border-radius:8px;box-shadow:0 0 0 2.4px #3e3e3e;"></div>
<span class="t" style="top:574.2px;font-size:34px;line-height:50px;color:#f4f4f4;font-weight:700;left:19px;width:1600px;text-align:center;transform-origin:50% 50%;transform:scaleX(0.950);">S</span>
<div style="left:853.6px;top:580px;width:50px;height:38.8px;background:linear-gradient(#707070,#646464);border-radius:8px;box-shadow:0 0 0 2.4px #3e3e3e;"></div>
<span class="t" style="top:574.2px;font-size:34px;line-height:50px;color:#f4f4f4;font-weight:700;left:78.6px;width:1600px;text-align:center;transform-origin:50% 50%;transform:scaleX(0.950);">M</span>
<div style="left:853.6px;top:629.2px;width:50px;height:37.6px;background:linear-gradient(#707070,#646464);border-radius:8px;box-shadow:0 0 0 2.4px #3e3e3e;"></div>
<div style="left:866px;top:636.4px;width:25.2px;height:4.4px;background:#f4f4f4;"></div>
<div style="left:866px;top:646px;width:25.2px;height:4.4px;background:#f4f4f4;"></div>
<div style="left:866px;top:655.6px;width:25.2px;height:4.4px;background:#f4f4f4;"></div>
<div style="left:914px;top:575.2px;width:26.8px;height:93.6px;background:#1c1c1c;"></div>
<div style="left:521px;top:628.4px;width:323px;height:39.2px;background:#1c1c1c;border-radius:8px;"></div>
<div style="left:524px;top:631.6px;width:190.8px;height:32.8px;background:#68401a;border-radius:4px;"></div>
<div style="left:710.8px;top:631.6px;width:4.8px;height:32.8px;background:#e08818;"></div>
<svg style="left:472px;top:634px;width:30px;height:26px;" viewBox="0 0 7.5 6.5"><path d="M0 0L7.500 3.250L0 6.500L1.500 3.250Z" fill="#9c9c9c" /></svg>
<div style="left:972px;top:611.2px;width:24px;height:24px;background:#b4b4b4;"></div>
<div style="left:438px;top:680.4px;width:511.2px;height:107.2px;background:#555;"></div>
<div style="left:439.2px;top:680.4px;width:18px;height:112.4px;background:#8ec0cc;"></div>
<div style="left:952px;top:680.4px;width:66px;height:107.2px;background:#555;"></div>
<span class="t" style="top:686px;font-size:32px;line-height:48px;color:#ececec;left:478.4px;transform-origin:0 50%;transform:scaleX(0.840);">GrannyBass Loop 1</span>
<div style="left:732px;top:692.4px;width:49.6px;height:38.8px;background:linear-gradient(#707070,#646464);border-radius:8px;box-shadow:0 0 0 2.4px #3e3e3e;"></div>
<div style="left:746px;top:700.8px;width:22px;height:22px;background:#9c9c9c;border-radius:12px;"></div>
<div style="left:794px;top:692.4px;width:50px;height:38.8px;background:linear-gradient(#707070,#646464);border-radius:8px;box-shadow:0 0 0 2.4px #3e3e3e;"></div>
<span class="t" style="top:686.6px;font-size:34px;line-height:50px;color:#f4f4f4;font-weight:700;left:19px;width:1600px;text-align:center;transform-origin:50% 50%;transform:scaleX(0.950);">S</span>
<div style="left:853.6px;top:692.4px;width:50px;height:38.8px;background:linear-gradient(#707070,#646464);border-radius:8px;box-shadow:0 0 0 2.4px #3e3e3e;"></div>
<span class="t" style="top:686.6px;font-size:34px;line-height:50px;color:#f4f4f4;font-weight:700;left:78.6px;width:1600px;text-align:center;transform-origin:50% 50%;transform:scaleX(0.950);">M</span>
<div style="left:853.6px;top:741.6px;width:50px;height:37.6px;background:linear-gradient(#707070,#646464);border-radius:8px;box-shadow:0 0 0 2.4px #3e3e3e;"></div>
<div style="left:866px;top:748.8px;width:25.2px;height:4.4px;background:#f4f4f4;"></div>
<div style="left:866px;top:758.4px;width:25.2px;height:4.4px;background:#f4f4f4;"></div>
<div style="left:866px;top:768px;width:25.2px;height:4.4px;background:#f4f4f4;"></div>
<div style="left:914px;top:687.6px;width:26.8px;height:93.6px;background:#1c1c1c;"></div>
<div style="left:521px;top:740.8px;width:323px;height:39.2px;background:#1c1c1c;border-radius:8px;"></div>
<div style="left:524px;top:744px;width:217px;height:32.8px;background:#68401a;border-radius:4px;"></div>
<div style="left:737px;top:744px;width:4.8px;height:32.8px;background:#e08818;"></div>
<svg style="left:472px;top:746.4px;width:30px;height:26px;" viewBox="0 0 7.5 6.5"><path d="M0 0L7.500 3.250L0 6.500L1.500 3.250Z" fill="#9c9c9c" /></svg>
<div style="left:972px;top:723.6px;width:24px;height:24px;background:#b4b4b4;"></div>
<div style="left:438px;top:792.8px;width:511.2px;height:107.2px;background:#555;"></div>
<div style="left:439.2px;top:792.8px;width:18px;height:112.4px;background:#9ac2a4;"></div>
<div style="left:952px;top:792.8px;width:66px;height:107.2px;background:#555;"></div>
<span class="t" style="top:798.4px;font-size:32px;line-height:48px;color:#ececec;left:478.4px;transform-origin:0 50%;transform:scaleX(0.840);">GrannyBass Loop 3</span>
<div style="left:732px;top:804.8px;width:49.6px;height:38.8px;background:linear-gradient(#707070,#646464);border-radius:8px;box-shadow:0 0 0 2.4px #3e3e3e;"></div>
<div style="left:746px;top:813.2px;width:22px;height:22px;background:#9c9c9c;border-radius:12px;"></div>
<div style="left:794px;top:804.8px;width:50px;height:38.8px;background:linear-gradient(#707070,#646464);border-radius:8px;box-shadow:0 0 0 2.4px #3e3e3e;"></div>
<span class="t" style="top:799px;font-size:34px;line-height:50px;color:#f4f4f4;font-weight:700;left:19px;width:1600px;text-align:center;transform-origin:50% 50%;transform:scaleX(0.950);">S</span>
<div style="left:853.6px;top:804.8px;width:50px;height:38.8px;background:linear-gradient(#707070,#646464);border-radius:8px;box-shadow:0 0 0 2.4px #3e3e3e;"></div>
<span class="t" style="top:799px;font-size:34px;line-height:50px;color:#f4f4f4;font-weight:700;left:78.6px;width:1600px;text-align:center;transform-origin:50% 50%;transform:scaleX(0.950);">M</span>
<div style="left:853.6px;top:854px;width:50px;height:37.6px;background:linear-gradient(#707070,#646464);border-radius:8px;box-shadow:0 0 0 2.4px #3e3e3e;"></div>
<div style="left:866px;top:861.2px;width:25.2px;height:4.4px;background:#f4f4f4;"></div>
<div style="left:866px;top:870.8px;width:25.2px;height:4.4px;background:#f4f4f4;"></div>
<div style="left:866px;top:880.4px;width:25.2px;height:4.4px;background:#f4f4f4;"></div>
<div style="left:914px;top:800px;width:26.8px;height:93.6px;background:#1c1c1c;"></div>
<div style="left:521px;top:853.2px;width:323px;height:39.2px;background:#1c1c1c;border-radius:8px;"></div>
<div style="left:524px;top:856.4px;width:226px;height:32.8px;background:#68401a;border-radius:4px;"></div>
<div style="left:746px;top:856.4px;width:4.8px;height:32.8px;background:#e08818;"></div>
<svg style="left:472px;top:858.8px;width:30px;height:26px;" viewBox="0 0 7.5 6.5"><path d="M0 0L7.500 3.250L0 6.500L1.500 3.250Z" fill="#9c9c9c" /></svg>
<div style="left:972px;top:836px;width:24px;height:24px;background:#b4b4b4;"></div>
<div style="left:438px;top:905.2px;width:511.2px;height:107.2px;background:#555;"></div>
<div style="left:439.2px;top:905.2px;width:18px;height:112.4px;background:#2fa868;"></div>
<div style="left:952px;top:905.2px;width:66px;height:107.2px;background:#555;"></div>
<span class="t" style="top:910.8px;font-size:32px;line-height:48px;color:#ececec;left:471.2px;transform-origin:0 50%;transform:scaleX(0.887);">PolyD Angel Dron</span>
<div style="left:732px;top:917.2px;width:49.6px;height:38.8px;background:linear-gradient(#707070,#646464);border-radius:8px;box-shadow:0 0 0 2.4px #3e3e3e;"></div>
<div style="left:746px;top:925.6px;width:22px;height:22px;background:#9c9c9c;border-radius:12px;"></div>
<div style="left:794px;top:917.2px;width:50px;height:38.8px;background:linear-gradient(#707070,#646464);border-radius:8px;box-shadow:0 0 0 2.4px #3e3e3e;"></div>
<span class="t" style="top:911.4px;font-size:34px;line-height:50px;color:#f4f4f4;font-weight:700;left:19px;width:1600px;text-align:center;transform-origin:50% 50%;transform:scaleX(0.950);">S</span>
<div style="left:853.6px;top:917.2px;width:50px;height:38.8px;background:linear-gradient(#707070,#646464);border-radius:8px;box-shadow:0 0 0 2.4px #3e3e3e;"></div>
<span class="t" style="top:911.4px;font-size:34px;line-height:50px;color:#f4f4f4;font-weight:700;left:78.6px;width:1600px;text-align:center;transform-origin:50% 50%;transform:scaleX(0.950);">M</span>
<div style="left:853.6px;top:966.4px;width:50px;height:37.6px;background:linear-gradient(#707070,#646464);border-radius:8px;box-shadow:0 0 0 2.4px #3e3e3e;"></div>
<div style="left:866px;top:973.6px;width:25.2px;height:4.4px;background:#f4f4f4;"></div>
<div style="left:866px;top:983.2px;width:25.2px;height:4.4px;background:#f4f4f4;"></div>
<div style="left:866px;top:992.8px;width:25.2px;height:4.4px;background:#f4f4f4;"></div>
<div style="left:914px;top:912.4px;width:26.8px;height:93.6px;background:#1c1c1c;"></div>
<div style="left:521px;top:965.6px;width:323px;height:39.2px;background:#1c1c1c;border-radius:8px;"></div>
<div style="left:524px;top:968.8px;width:186px;height:32.8px;background:#68401a;border-radius:4px;"></div>
<div style="left:706px;top:968.8px;width:4.8px;height:32.8px;background:#e08818;"></div>
<svg style="left:472px;top:971.2px;width:30px;height:26px;" viewBox="0 0 7.5 6.5"><path d="M0 0L7.500 3.250L0 6.500L1.500 3.250Z" fill="#9c9c9c" /></svg>
<div style="left:972px;top:948.4px;width:24px;height:24px;background:#b4b4b4;"></div>
<div style="left:438px;top:1017.6px;width:511.2px;height:107.2px;background:#555;"></div>
<div style="left:439.2px;top:1017.6px;width:18px;height:112.4px;background:#2a98d8;"></div>
<div style="left:952px;top:1017.6px;width:66px;height:107.2px;background:#555;"></div>
<span class="t" style="top:1023.2px;font-size:32px;line-height:48px;color:#ececec;left:471.2px;transform-origin:0 50%;transform:scaleX(0.881);">Forest Cat Wal</span>
<div style="left:732px;top:1029.6px;width:49.6px;height:38.8px;background:linear-gradient(#707070,#646464);border-radius:8px;box-shadow:0 0 0 2.4px #3e3e3e;"></div>
<div style="left:746px;top:1038px;width:22px;height:22px;background:#9c9c9c;border-radius:12px;"></div>
<div style="left:794px;top:1029.6px;width:50px;height:38.8px;background:linear-gradient(#707070,#646464);border-radius:8px;box-shadow:0 0 0 2.4px #3e3e3e;"></div>
<span class="t" style="top:1023.8px;font-size:34px;line-height:50px;color:#f4f4f4;font-weight:700;left:19px;width:1600px;text-align:center;transform-origin:50% 50%;transform:scaleX(0.950);">S</span>
<div style="left:853.6px;top:1029.6px;width:50px;height:38.8px;background:linear-gradient(#707070,#646464);border-radius:8px;box-shadow:0 0 0 2.4px #3e3e3e;"></div>
<span class="t" style="top:1023.8px;font-size:34px;line-height:50px;color:#f4f4f4;font-weight:700;left:78.6px;width:1600px;text-align:center;transform-origin:50% 50%;transform:scaleX(0.950);">M</span>
<div style="left:853.6px;top:1078.8px;width:50px;height:37.6px;background:linear-gradient(#707070,#646464);border-radius:8px;box-shadow:0 0 0 2.4px #3e3e3e;"></div>
<div style="left:866px;top:1086px;width:25.2px;height:4.4px;background:#f4f4f4;"></div>
<div style="left:866px;top:1095.6px;width:25.2px;height:4.4px;background:#f4f4f4;"></div>
<div style="left:866px;top:1105.2px;width:25.2px;height:4.4px;background:#f4f4f4;"></div>
<div style="left:914px;top:1024.8px;width:26.8px;height:93.6px;background:#1c1c1c;"></div>
<div style="left:521px;top:1078px;width:323px;height:39.2px;background:#1c1c1c;border-radius:8px;"></div>
<div style="left:524px;top:1081.2px;width:204px;height:32.8px;background:#68401a;border-radius:4px;"></div>
<div style="left:724px;top:1081.2px;width:4.8px;height:32.8px;background:#e08818;"></div>
<svg style="left:472px;top:1083.6px;width:30px;height:26px;" viewBox="0 0 7.5 6.5"><path d="M0 0L7.500 3.250L0 6.500L1.500 3.250Z" fill="#9c9c9c" /></svg>
<div style="left:972px;top:1060.8px;width:24px;height:24px;background:#b4b4b4;"></div>
<div style="left:438px;top:1130px;width:511.2px;height:107.2px;background:#555;"></div>
<div style="left:439.2px;top:1130px;width:18px;height:112.4px;background:#40e0f0;"></div>
<div style="left:952px;top:1130px;width:66px;height:107.2px;background:#555;"></div>
<span class="t" style="top:1135.6px;font-size:32px;line-height:48px;color:#ececec;left:471.2px;transform-origin:0 50%;transform:scaleX(0.863);">Incredible Bongo ...</span>
<div style="left:732px;top:1142px;width:49.6px;height:38.8px;background:linear-gradient(#707070,#646464);border-radius:8px;box-shadow:0 0 0 2.4px #3e3e3e;"></div>
<div style="left:746px;top:1150.4px;width:22px;height:22px;background:#9c9c9c;border-radius:12px;"></div>
<div style="left:794px;top:1142px;width:50px;height:38.8px;background:linear-gradient(#707070,#646464);border-radius:8px;box-shadow:0 0 0 2.4px #3e3e3e;"></div>
<span class="t" style="top:1136.2px;font-size:34px;line-height:50px;color:#f4f4f4;font-weight:700;left:19px;width:1600px;text-align:center;transform-origin:50% 50%;transform:scaleX(0.950);">S</span>
<div style="left:853.6px;top:1142px;width:50px;height:38.8px;background:linear-gradient(#707070,#646464);border-radius:8px;box-shadow:0 0 0 2.4px #3e3e3e;"></div>
<span class="t" style="top:1136.2px;font-size:34px;line-height:50px;color:#f4f4f4;font-weight:700;left:78.6px;width:1600px;text-align:center;transform-origin:50% 50%;transform:scaleX(0.950);">M</span>
<div style="left:853.6px;top:1191.2px;width:50px;height:37.6px;background:linear-gradient(#707070,#646464);border-radius:8px;box-shadow:0 0 0 2.4px #3e3e3e;"></div>
<div style="left:866px;top:1198.4px;width:25.2px;height:4.4px;background:#f4f4f4;"></div>
<div style="left:866px;top:1208px;width:25.2px;height:4.4px;background:#f4f4f4;"></div>
<div style="left:866px;top:1217.6px;width:25.2px;height:4.4px;background:#f4f4f4;"></div>
<div style="left:914px;top:1137.2px;width:26.8px;height:93.6px;background:#1c1c1c;"></div>
<div style="left:521px;top:1190.4px;width:323px;height:39.2px;background:#1c1c1c;border-radius:8px;"></div>
<div style="left:524px;top:1193.6px;width:238px;height:32.8px;background:#68401a;border-radius:4px;"></div>
<div style="left:758px;top:1193.6px;width:4.8px;height:32.8px;background:#e08818;"></div>
<svg style="left:472px;top:1196px;width:30px;height:26px;" viewBox="0 0 7.5 6.5"><path d="M0 0L7.500 3.250L0 6.500L1.500 3.250Z" fill="#9c9c9c" /></svg>
<div style="left:972px;top:1173.2px;width:24px;height:24px;background:#b4b4b4;"></div>
<div style="left:438px;top:1242.4px;width:511.2px;height:107.2px;background:#555;"></div>
<div style="left:439.2px;top:1242.4px;width:18px;height:112.4px;background:#d8c020;"></div>
<div style="left:952px;top:1242.4px;width:66px;height:107.2px;background:#555;"></div>
<span class="t" style="top:1248px;font-size:32px;line-height:48px;color:#ececec;left:471.2px;transform-origin:0 50%;transform:scaleX(0.863);">Intense Organ</span>
<div style="left:732px;top:1254.4px;width:49.6px;height:38.8px;background:linear-gradient(#707070,#646464);border-radius:8px;box-shadow:0 0 0 2.4px #3e3e3e;"></div>
<div style="left:746px;top:1262.8px;width:22px;height:22px;background:#f4f4f4;border-radius:12px;"></div>
<div style="left:794px;top:1254.4px;width:50px;height:38.8px;background:linear-gradient(#707070,#646464);border-radius:8px;box-shadow:0 0 0 2.4px #3e3e3e;"></div>
<span class="t" style="top:1248.6px;font-size:34px;line-height:50px;color:#f4f4f4;font-weight:700;left:19px;width:1600px;text-align:center;transform-origin:50% 50%;transform:scaleX(0.950);">S</span>
<div style="left:853.6px;top:1254.4px;width:50px;height:38.8px;background:linear-gradient(#707070,#646464);border-radius:8px;box-shadow:0 0 0 2.4px #3e3e3e;"></div>
<span class="t" style="top:1248.6px;font-size:34px;line-height:50px;color:#f4f4f4;font-weight:700;left:78.6px;width:1600px;text-align:center;transform-origin:50% 50%;transform:scaleX(0.950);">M</span>
<div style="left:853.6px;top:1303.6px;width:50px;height:37.6px;background:linear-gradient(#707070,#646464);border-radius:8px;box-shadow:0 0 0 2.4px #3e3e3e;"></div>
<div style="left:866px;top:1310.8px;width:25.2px;height:4.4px;background:#f4f4f4;"></div>
<div style="left:866px;top:1320.4px;width:25.2px;height:4.4px;background:#f4f4f4;"></div>
<div style="left:866px;top:1330px;width:25.2px;height:4.4px;background:#f4f4f4;"></div>
<div style="left:914px;top:1249.6px;width:26.8px;height:93.6px;background:#1c1c1c;"></div>
<div style="left:521px;top:1302.8px;width:323px;height:39.2px;background:#1c1c1c;border-radius:8px;"></div>
<div style="left:524px;top:1306px;width:198px;height:32.8px;background:#68401a;border-radius:4px;"></div>
<div style="left:718px;top:1306px;width:4.8px;height:32.8px;background:#e08818;"></div>
<svg style="left:471.2px;top:1305.6px;width:32px;height:29.6px;" viewBox="0 0 8 7.4"><path d="M0 0H2.100V4.400H2.300V7.400H0ZM3 0H5V4.400H5.200V7.400H2.800V4.400H3ZM5.900 0H8V7.400H5.700V4.400H5.900Z" fill="#c8c8c8"/><path d="M2.100 0H3V4.400H2.100ZM5 0H5.900V4.400H5Z" fill="#7a7a7a"/></svg>
<svg style="left:815.2px;top:1314.4px;width:24px;height:24px;" viewBox="0 0 6 6"><circle cx="3" cy="3" r="2.100" fill="#0c2c48" stroke="#3a9be0" stroke-width="1.200"/></svg>
<div style="left:972px;top:1285.6px;width:24px;height:24px;background:#b4b4b4;"></div>
<div style="left:438px;top:1354.8px;width:511.2px;height:26.4px;background:#555;"></div>
<div style="left:439.2px;top:1354.8px;width:18px;height:26.4px;background:#58b030;"></div>
<div style="left:952px;top:1354.8px;width:66px;height:26.4px;background:#555;"></div>
<div style="left:438px;top:1354.8px;width:512px;height:26.4px;overflow:hidden;">
<span class="t" style="top:5.6px;font-size:32px;line-height:48px;color:#ddd;left:33.2px;transform-origin:0 50%;transform:scaleX(0.789);">Band Pass Wah</span>
<div style="left:294px;top:12px;width:49.6px;height:38.8px;background:#6a6a6a;border-radius:8px;box-shadow:0 0 0 2.4px #3e3e3e;"></div>
<div style="left:356px;top:12px;width:49.6px;height:38.8px;background:#6a6a6a;border-radius:8px;box-shadow:0 0 0 2.4px #3e3e3e;"></div>
<div style="left:415.6px;top:12px;width:49.6px;height:38.8px;background:#6a6a6a;border-radius:8px;box-shadow:0 0 0 2.4px #3e3e3e;"></div>
<div style="left:476px;top:7.2px;width:26.8px;height:93.6px;background:#1c1c1c;"></div>
</div>
<div style="left:438px;top:1381.2px;width:3068px;height:54.8px;background:#454545;"></div>
<div style="left:497.2px;top:1394.4px;width:40.8px;height:34.4px;background:#525252;border-radius:6px;"></div>
<div style="left:549.2px;top:1394.4px;width:40.8px;height:34.4px;background:#525252;border-radius:6px;"></div>
<div style="left:601.6px;top:1394.4px;width:40.8px;height:34.4px;background:#525252;border-radius:6px;"></div>
<svg style="left:454px;top:1396px;width:24px;height:24px;" viewBox="0 0 6 6"><path d="M0 1.700H6M0 4.300H6" stroke="#b0b0b0" stroke-width="0.800"/><path d="M1.300 0.700L0 1.700L1.300 2.700M4.700 3.300L6 4.300L4.700 5.300" stroke="#b0b0b0" stroke-width="0.800" fill="none"/></svg>
<svg style="left:502px;top:1395.2px;width:32px;height:26px;" viewBox="0 0 8 6.5"><rect x="0" y="0" width="2.600" height="6.500" fill="#f98511"/><rect x="3.400" y="0" width="4.600" height="2.800" fill="#f98511"/><rect x="3.400" y="3.700" width="4.600" height="2.800" fill="#f98511"/></svg>
<svg style="left:554px;top:1394.4px;width:32px;height:28px;" viewBox="0 0 8 7"><path d="M0 1.200H4.500V5M0 3.400H2.500V5" stroke="#f98511" stroke-width="1" fill="none"/><path d="M4.500 7L7.500 3.600H1.500Z" fill="#f98511" transform="translate(1.2,0)"/></svg>
<svg style="left:610px;top:1396px;width:24px;height:24.8px;" viewBox="0 0 6 6.2"><path d="M0.500 0.500L5.500 5.700M5.500 0.500L0.500 5.700" stroke="#f98511" stroke-width="1.300"/></svg>
<div style="left:722px;top:502.4px;width:297.2px;height:48.8px;background:#3c3c3c;border-radius:6px;border:3.2px solid #7c7c7c;box-sizing:border-box;z-index:20;"></div>
<span class="t" style="top:500px;font-size:32px;line-height:48px;color:#f0f0f0;left:740px;transform-origin:0 50%;transform:scaleX(0.840);z-index:21;">Odds and Evens Rise</span>
<div style="left:1020px;top:200px;width:216.4px;height:140px;background:#555;"></div>
<svg style="left:1036.8px;top:261.6px;width:24px;height:26.4px;" viewBox="0 0 6 6.6"><path d="M0 0L6 3.300L0 6.600Z" fill="#9a9a9a"/></svg>
<span class="t" style="top:252.2px;font-size:30px;line-height:46px;color:#e0e0e0;left:1078px;transform-origin:0 50%;transform:scaleX(0.872);">Scene 1</span>
<div style="left:1239.6px;top:200px;width:217.2px;height:140px;background:#555;"></div>
<svg style="left:1256.4px;top:261.6px;width:24px;height:26.4px;" viewBox="0 0 6 6.6"><path d="M0 0L6 3.300L0 6.600Z" fill="#9a9a9a"/></svg>
<span class="t" style="top:252.2px;font-size:30px;line-height:46px;color:#e0e0e0;left:1297.6px;transform-origin:0 50%;transform:scaleX(0.872);">Scene 2</span>
<div style="left:1460px;top:200px;width:130.8px;height:140px;background:#555;"></div>
<svg style="left:1476.8px;top:261.6px;width:24px;height:26.4px;" viewBox="0 0 6 6.6"><path d="M0 0L6 3.300L0 6.600Z" fill="#9a9a9a"/></svg>
<span class="t" style="top:252.2px;font-size:30px;line-height:46px;color:#e0e0e0;left:1518px;transform-origin:0 50%;transform:scaleX(0.823);">Scene</span>
<div style="left:1593px;top:200px;width:64px;height:140px;background:#555;"></div>
<div style="left:1020px;top:200.8px;width:570px;height:4.4px;background:#767676;"></div>
<svg style="left:1610px;top:256px;width:32px;height:32px;" viewBox="0 0 8 8"><path d="M0 0.600H7.500M0 3H7.500M0 5.400H4.500" stroke="#6e6e6e" stroke-width="1"/><path d="M5.500 5L7.700 6.300L5.500 7.600Z" fill="#6e6e6e"/></svg>
<div style="left:1658px;top:200px;width:16px;height:1181.2px;background:#3c3c3c;"></div>
<div style="left:1020px;top:343.2px;width:216.4px;height:107.2px;background:#2e2e2e;"></div>
<div style="left:1032.8px;top:386.4px;width:23.2px;height:23.2px;background:#555;"></div>
<div style="left:1239.6px;top:343.2px;width:217.2px;height:107.2px;background:#2e2e2e;"></div>
<div style="left:1252.4px;top:386.4px;width:23.2px;height:23.2px;background:#555;"></div>
<div style="left:1460px;top:343.2px;width:130.8px;height:107.2px;background:#2e2e2e;"></div>
<div style="left:1472.8px;top:386.4px;width:23.2px;height:23.2px;background:#555;"></div>
<div style="left:1593px;top:343.2px;width:64px;height:107.2px;background:#555;"></div>
<svg style="left:1610px;top:381.2px;width:32px;height:32px;" viewBox="0 0 8 8"><path d="M0 0.600H7.500M0 3H7.500M0 5.400H4.500" stroke="#6e6e6e" stroke-width="1"/><path d="M5.500 5L7.700 6.300L5.500 7.600Z" fill="#6e6e6e"/></svg>
<div style="left:1020px;top:455.6px;width:216.4px;height:107.2px;background:#2e2e2e;"></div>
<div style="left:1032.8px;top:498.8px;width:23.2px;height:23.2px;background:#555;"></div>
<div style="left:1239.6px;top:455.6px;width:217.2px;height:107.2px;background:#2e2e2e;"></div>
<div style="left:1252.4px;top:498.8px;width:23.2px;height:23.2px;background:#555;"></div>
<div style="left:1460px;top:455.6px;width:130.8px;height:107.2px;background:#2e2e2e;"></div>
<div style="left:1472.8px;top:498.8px;width:23.2px;height:23.2px;background:#555;"></div>
<div style="left:1593px;top:455.6px;width:64px;height:107.2px;background:#555;"></div>
<svg style="left:1610px;top:493.6px;width:32px;height:32px;" viewBox="0 0 8 8"><path d="M0 0.600H7.500M0 3H7.500M0 5.400H4.500" stroke="#6e6e6e" stroke-width="1"/><path d="M5.500 5L7.700 6.300L5.500 7.600Z" fill="#6e6e6e"/></svg>
<div style="left:1020px;top:568px;width:216.4px;height:107.2px;background:#2e2e2e;"></div>
<div style="left:1032.8px;top:611.2px;width:23.2px;height:23.2px;background:#555;"></div>
<div style="left:1239.6px;top:568px;width:217.2px;height:107.2px;background:#2e2e2e;"></div>
<div style="left:1252.4px;top:611.2px;width:23.2px;height:23.2px;background:#555;"></div>
<div style="left:1460px;top:568px;width:130.8px;height:107.2px;background:#2e2e2e;"></div>
<div style="left:1472.8px;top:611.2px;width:23.2px;height:23.2px;background:#555;"></div>
<div style="left:1593px;top:568px;width:64px;height:107.2px;background:#555;"></div>
<svg style="left:1610px;top:606px;width:32px;height:32px;" viewBox="0 0 8 8"><path d="M0 0.600H7.500M0 3H7.500M0 5.400H4.500" stroke="#6e6e6e" stroke-width="1"/><path d="M5.500 5L7.700 6.300L5.500 7.600Z" fill="#6e6e6e"/></svg>
<div style="left:1020px;top:680.4px;width:216.4px;height:107.2px;background:#2e2e2e;"></div>
<div style="left:1032.8px;top:723.6px;width:23.2px;height:23.2px;background:#555;"></div>
<div style="left:1239.6px;top:680.4px;width:217.2px;height:107.2px;background:#2e2e2e;"></div>
<div style="left:1252.4px;top:723.6px;width:23.2px;height:23.2px;background:#555;"></div>
<div style="left:1460px;top:680.4px;width:130.8px;height:107.2px;background:#2e2e2e;"></div>
<div style="left:1472.8px;top:723.6px;width:23.2px;height:23.2px;background:#555;"></div>
<div style="left:1593px;top:680.4px;width:64px;height:107.2px;background:#555;"></div>
<svg style="left:1610px;top:718.4px;width:32px;height:32px;" viewBox="0 0 8 8"><path d="M0 0.600H7.500M0 3H7.500M0 5.400H4.500" stroke="#6e6e6e" stroke-width="1"/><path d="M5.500 5L7.700 6.300L5.500 7.600Z" fill="#6e6e6e"/></svg>
<div style="left:1020px;top:792.8px;width:216.4px;height:107.2px;background:#2e2e2e;"></div>
<div style="left:1032.8px;top:836px;width:23.2px;height:23.2px;background:#555;"></div>
<div style="left:1239.6px;top:792.8px;width:217.2px;height:107.2px;background:#2e2e2e;"></div>
<div style="left:1252.4px;top:836px;width:23.2px;height:23.2px;background:#555;"></div>
<div style="left:1460px;top:792.8px;width:130.8px;height:107.2px;background:#2e2e2e;"></div>
<div style="left:1472.8px;top:836px;width:23.2px;height:23.2px;background:#555;"></div>
<div style="left:1593px;top:792.8px;width:64px;height:107.2px;background:#555;"></div>
<svg style="left:1610px;top:830.8px;width:32px;height:32px;" viewBox="0 0 8 8"><path d="M0 0.600H7.500M0 3H7.500M0 5.400H4.500" stroke="#6e6e6e" stroke-width="1"/><path d="M5.500 5L7.700 6.300L5.500 7.600Z" fill="#6e6e6e"/></svg>
<div style="left:1020px;top:905.2px;width:216.4px;height:107.2px;background:#2e2e2e;"></div>
<div style="left:1032.8px;top:948.4px;width:23.2px;height:23.2px;background:#555;"></div>
<div style="left:1239.6px;top:905.2px;width:217.2px;height:107.2px;background:#2e2e2e;"></div>
<div style="left:1252.4px;top:948.4px;width:23.2px;height:23.2px;background:#555;"></div>
<div style="left:1460px;top:905.2px;width:130.8px;height:107.2px;background:#2e2e2e;"></div>
<div style="left:1472.8px;top:948.4px;width:23.2px;height:23.2px;background:#555;"></div>
<div style="left:1593px;top:905.2px;width:64px;height:107.2px;background:#555;"></div>
<svg style="left:1610px;top:943.2px;width:32px;height:32px;" viewBox="0 0 8 8"><path d="M0 0.600H7.500M0 3H7.500M0 5.400H4.500" stroke="#6e6e6e" stroke-width="1"/><path d="M5.500 5L7.700 6.300L5.500 7.600Z" fill="#6e6e6e"/></svg>
<div style="left:1020px;top:1017.6px;width:216.4px;height:107.2px;background:#2e2e2e;"></div>
<div style="left:1032.8px;top:1060.8px;width:23.2px;height:23.2px;background:#555;"></div>
<div style="left:1239.6px;top:1017.6px;width:217.2px;height:107.2px;background:#2e2e2e;"></div>
<div style="left:1252.4px;top:1060.8px;width:23.2px;height:23.2px;background:#555;"></div>
<div style="left:1460px;top:1017.6px;width:130.8px;height:107.2px;background:#2e2e2e;"></div>
<div style="left:1472.8px;top:1060.8px;width:23.2px;height:23.2px;background:#555;"></div>
<div style="left:1593px;top:1017.6px;width:64px;height:107.2px;background:#555;"></div>
<svg style="left:1610px;top:1055.6px;width:32px;height:32px;" viewBox="0 0 8 8"><path d="M0 0.600H7.500M0 3H7.500M0 5.400H4.500" stroke="#6e6e6e" stroke-width="1"/><path d="M5.500 5L7.700 6.300L5.500 7.600Z" fill="#6e6e6e"/></svg>
<div style="left:1020px;top:1130px;width:216.4px;height:107.2px;background:#2e2e2e;"></div>
<div style="left:1032.8px;top:1173.2px;width:23.2px;height:23.2px;background:#555;"></div>
<div style="left:1239.6px;top:1130px;width:217.2px;height:107.2px;background:#2e2e2e;"></div>
<div style="left:1252.4px;top:1173.2px;width:23.2px;height:23.2px;background:#555;"></div>
<div style="left:1460px;top:1130px;width:130.8px;height:107.2px;background:#2e2e2e;"></div>
<div style="left:1472.8px;top:1173.2px;width:23.2px;height:23.2px;background:#555;"></div>
<div style="left:1593px;top:1130px;width:64px;height:107.2px;background:#555;"></div>
<svg style="left:1610px;top:1168px;width:32px;height:32px;" viewBox="0 0 8 8"><path d="M0 0.600H7.500M0 3H7.500M0 5.400H4.500" stroke="#6e6e6e" stroke-width="1"/><path d="M5.500 5L7.700 6.300L5.500 7.600Z" fill="#6e6e6e"/></svg>
<div style="left:1020px;top:1242.4px;width:216.4px;height:107.2px;background:#2e2e2e;"></div>
<div style="left:1032.8px;top:1285.6px;width:23.2px;height:23.2px;background:#555;"></div>
<div style="left:1239.6px;top:1242.4px;width:217.2px;height:107.2px;background:#2e2e2e;"></div>
<div style="left:1252.4px;top:1285.6px;width:23.2px;height:23.2px;background:#555;"></div>
<div style="left:1460px;top:1242.4px;width:130.8px;height:107.2px;background:#2e2e2e;"></div>
<div style="left:1472.8px;top:1285.6px;width:23.2px;height:23.2px;background:#555;"></div>
<div style="left:1593px;top:1242.4px;width:64px;height:107.2px;background:#555;"></div>
<svg style="left:1610px;top:1280.4px;width:32px;height:32px;" viewBox="0 0 8 8"><path d="M0 0.600H7.500M0 3H7.500M0 5.400H4.500" stroke="#6e6e6e" stroke-width="1"/><path d="M5.500 5L7.700 6.300L5.500 7.600Z" fill="#6e6e6e"/></svg>
<div style="left:1020px;top:1354.8px;width:216.4px;height:26.4px;background:#2e2e2e;"></div>
<div style="left:1239.6px;top:1354.8px;width:217.2px;height:26.4px;background:#2e2e2e;"></div>
<div style="left:1460px;top:1354.8px;width:130.8px;height:26.4px;background:#2e2e2e;"></div>
<div style="left:1593px;top:1354.8px;width:64px;height:26.4px;background:#555;"></div>
<div style="left:1020px;top:343.2px;width:216.4px;height:108.8px;background:#b3203f;"></div>
<svg style="left:1034px;top:356px;width:22px;height:24px;" viewBox="0 0 5.5 6"><path d="M0 0L5.500 3L0 6Z" fill="#801028"/></svg>
<span class="t" style="top:343.8px;font-size:30px;line-height:46px;color:#30060e;left:1070px;transform-origin:0 50%;transform:scaleX(0.916);">Kick Only</span>
<svg style="left:1028px;top:416.4px;width:200.4px;height:12px;" viewBox="0 0 50.1 3"><path d="M0.5 2.2v0.8h0.8v-0.8zM2.7 2.2v0.8h0.8v-0.8zM3.8 1.5v1.5h0.8v-1.5zM4.9 1.5v1.5h0.8v-1.5zM6.0 2.2v0.8h0.8v-0.8zM8.2 0.8v2.2h0.8v-2.2zM10.4 1.5v1.5h0.8v-1.5zM12.6 2.2v0.8h0.8v-0.8zM13.7 1.5v1.5h0.8v-1.5zM14.8 0.8v2.2h0.8v-2.2zM15.9 2.2v0.8h0.8v-0.8zM17.0 1.5v1.5h0.8v-1.5zM18.1 0.8v2.2h0.8v-2.2zM19.2 2.2v0.8h0.8v-0.8zM21.4 2.2v0.8h0.8v-0.8zM23.6 0.8v2.2h0.8v-2.2zM24.7 2.2v0.8h0.8v-0.8zM25.8 1.5v1.5h0.8v-1.5zM26.9 2.2v0.8h0.8v-0.8zM28.0 1.5v1.5h0.8v-1.5zM29.1 0.8v2.2h0.8v-2.2zM32.4 2.2v0.8h0.8v-0.8zM35.7 1.5v1.5h0.8v-1.5zM36.8 2.2v0.8h0.8v-0.8zM41.2 0.8v2.2h0.8v-2.2zM42.3 0.8v2.2h0.8v-2.2zM44.5 2.2v0.8h0.8v-0.8zM48.9 1.5v1.5h0.8v-1.5z" fill="#5c1020"/></svg>
<div style="left:1239.6px;top:343.2px;width:217.2px;height:108.8px;background:#fb8595;"></div>
<svg style="left:1253.6px;top:356px;width:22px;height:24px;" viewBox="0 0 5.5 6"><path d="M0 0L5.500 3L0 6Z" fill="#b85060"/></svg>
<span class="t" style="top:343.8px;font-size:30px;line-height:46px;color:#5a1a24;left:1289.6px;transform-origin:0 50%;transform:scaleX(0.949);">Beat w HH</span>
<svg style="left:1247.6px;top:416.4px;width:201.2px;height:12px;" viewBox="0 0 50.3 3"><path d="M0.5 2.2v0.8h0.8v-0.8zM1.6 2.2v0.8h0.8v-0.8zM2.7 0.8v2.2h0.8v-2.2zM3.8 1.5v1.5h0.8v-1.5zM4.9 2.2v0.8h0.8v-0.8zM6.0 2.2v0.8h0.8v-0.8zM7.1 2.2v0.8h0.8v-0.8zM8.2 1.5v1.5h0.8v-1.5zM9.3 2.2v0.8h0.8v-0.8zM10.4 2.2v0.8h0.8v-0.8zM12.6 0.8v2.2h0.8v-2.2zM18.1 1.5v1.5h0.8v-1.5zM19.2 1.5v1.5h0.8v-1.5zM20.3 2.2v0.8h0.8v-0.8zM22.5 1.5v1.5h0.8v-1.5zM23.6 1.5v1.5h0.8v-1.5zM25.8 2.2v0.8h0.8v-0.8zM26.9 0.8v2.2h0.8v-2.2zM28.0 2.2v0.8h0.8v-0.8zM30.2 2.2v0.8h0.8v-0.8zM32.4 2.2v0.8h0.8v-0.8zM33.5 1.5v1.5h0.8v-1.5zM34.6 1.5v1.5h0.8v-1.5zM35.7 2.2v0.8h0.8v-0.8zM37.9 2.2v0.8h0.8v-0.8zM39.0 0.8v2.2h0.8v-2.2zM40.1 2.2v0.8h0.8v-0.8zM43.4 2.2v0.8h0.8v-0.8zM44.5 1.5v1.5h0.8v-1.5zM45.6 1.5v1.5h0.8v-1.5zM46.7 0.8v2.2h0.8v-2.2zM47.8 2.2v0.8h0.8v-0.8zM48.9 2.2v0.8h0.8v-0.8z" fill="#fde0e4"/></svg>
<div style="left:1460px;top:343.2px;width:130.8px;height:108.8px;background:#b3203f;"></div>
<svg style="left:1474px;top:356px;width:22px;height:24px;" viewBox="0 0 5.5 6"><path d="M0 0L5.500 3L0 6Z" fill="#801028"/></svg>
<span class="t" style="top:343.8px;font-size:30px;line-height:46px;color:#30060e;left:1510px;transform-origin:0 50%;transform:scaleX(0.860);">Kick O</span>
<svg style="left:1468px;top:416.4px;width:114.8px;height:12px;" viewBox="0 0 28.700000000000003 3"><path d="M3.8 2.2v0.8h0.8v-0.8zM4.9 0.8v2.2h0.8v-2.2zM7.1 2.2v0.8h0.8v-0.8zM9.3 0.8v2.2h0.8v-2.2zM12.6 1.5v1.5h0.8v-1.5zM14.8 2.2v0.8h0.8v-0.8zM17.0 2.2v0.8h0.8v-0.8zM19.2 2.2v0.8h0.8v-0.8zM20.3 1.5v1.5h0.8v-1.5zM22.5 2.2v0.8h0.8v-0.8zM25.8 1.5v1.5h0.8v-1.5zM26.9 0.8v2.2h0.8v-2.2z" fill="#5c1020"/></svg>
<div style="left:1239.6px;top:455.6px;width:217.2px;height:108.8px;background:#1450f5;"></div>
<svg style="left:1253.6px;top:468.4px;width:22px;height:24px;" viewBox="0 0 5.5 6"><path d="M0 0L5.500 3L0 6Z" fill="#0a2c98"/></svg>
<span class="t" style="top:456.2px;font-size:30px;line-height:46px;color:#061a60;left:1289.6px;transform-origin:0 50%;transform:scaleX(0.861);">Odds and E...</span>
<div style="left:1239.6px;top:526.4px;width:217.2px;height:30px;background:#06185c;"></div>
<svg style="left:1239.6px;top:521.6px;width:217.2px;height:10px;" viewBox="0 0 54.3 2.5"><path d="M0.0 0.5 L0.9 0.0 L1.8 0.6 L2.7 0.4 L3.6 0.1 L4.5 0.1 L5.4 0.4 L6.3 0.3 L7.2 0.6 L8.1 0.3 L9.1 0.3 L10.0 0.0 L10.9 0.2 L11.8 0.4 L12.7 0.1 L13.6 0.5 L14.5 0.4 L15.4 0.0 L16.3 0.3 L17.2 0.2 L18.1 0.2 L19.0 0.3 L19.9 0.3 L20.8 0.2 L21.7 0.5 L22.6 0.5 L23.5 0.2 L24.4 0.3 L25.3 0.4 L26.2 0.3 L27.1 0.1 L28.1 0.3 L29.0 0.2 L29.9 0.2 L30.8 0.1 L31.7 0.1 L32.6 0.3 L33.5 0.4 L34.4 0.3 L35.3 0.3 L36.2 0.1 L37.1 0.4 L38.0 0.1 L38.9 0.2 L39.8 0.2 L40.7 0.5 L41.6 0.5 L42.5 0.1 L43.4 0.5 L44.3 0.4 L45.2 0.0 L46.2 0.5 L47.1 0.3 L48.0 0.5 L48.9 0.4 L49.8 0.1 L50.7 0.1 L51.6 0.5 L52.5 0.3 L53.4 0.1 L54.3 0.1 L54.3 2.4 L53.4 2.4 L52.5 2.2 L51.6 2.0 L50.7 2.4 L49.8 2.4 L48.9 2.1 L48.0 2.0 L47.1 2.2 L46.2 2.0 L45.2 2.5 L44.3 2.1 L43.4 2.0 L42.5 2.4 L41.6 2.0 L40.7 2.0 L39.8 2.3 L38.9 2.3 L38.0 2.4 L37.1 2.1 L36.2 2.4 L35.3 2.2 L34.4 2.2 L33.5 2.1 L32.6 2.2 L31.7 2.4 L30.8 2.4 L29.9 2.3 L29.0 2.3 L28.1 2.2 L27.1 2.4 L26.2 2.2 L25.3 2.1 L24.4 2.2 L23.5 2.3 L22.6 2.0 L21.7 2.0 L20.8 2.3 L19.9 2.2 L19.0 2.2 L18.1 2.3 L17.2 2.3 L16.3 2.2 L15.4 2.5 L14.5 2.1 L13.6 2.0 L12.7 2.4 L11.8 2.1 L10.9 2.3 L10.0 2.5 L9.1 2.2 L8.1 2.2 L7.2 1.9 L6.3 2.2 L5.4 2.1 L4.5 2.4 L3.6 2.4 L2.7 2.1 L1.8 1.9 L0.9 2.5 L0.0 2.0Z" fill="#06185c"/></svg>
<div style="left:1460px;top:568px;width:130.8px;height:108.8px;background:#b3203f;"></div>
<svg style="left:1474px;top:580.8px;width:22px;height:24px;" viewBox="0 0 5.5 6"><path d="M0 0L5.500 3L0 6Z" fill="#801028"/></svg>
<span class="t" style="top:568.6px;font-size:30px;line-height:46px;color:#30060e;left:1510px;transform-origin:0 50%;transform:scaleX(1.017);">Motor</span>
<div style="left:1460px;top:638.8px;width:130.8px;height:30px;background:#3c0a16;"></div>
<svg style="left:1460px;top:634px;width:130.8px;height:10px;" viewBox="0 0 32.7 2.5"><path d="M0.0 0.5 L0.9 0.3 L1.8 0.1 L2.7 0.2 L3.6 0.0 L4.5 0.0 L5.5 0.1 L6.4 0.0 L7.3 0.0 L8.2 0.1 L9.1 0.3 L10.0 0.1 L10.9 0.0 L11.8 0.5 L12.7 0.5 L13.6 0.5 L14.5 0.4 L15.4 0.0 L16.4 0.2 L17.3 0.4 L18.2 0.1 L19.1 0.1 L20.0 0.2 L20.9 0.2 L21.8 0.1 L22.7 0.3 L23.6 0.0 L24.5 0.4 L25.4 0.4 L26.3 0.2 L27.3 0.1 L28.2 0.2 L29.1 0.4 L30.0 0.2 L30.9 0.5 L31.8 0.5 L32.7 0.3 L32.7 2.2 L31.8 2.0 L30.9 2.0 L30.0 2.3 L29.1 2.1 L28.2 2.3 L27.3 2.4 L26.3 2.3 L25.4 2.1 L24.5 2.1 L23.6 2.5 L22.7 2.2 L21.8 2.4 L20.9 2.3 L20.0 2.3 L19.1 2.4 L18.2 2.4 L17.3 2.1 L16.4 2.3 L15.4 2.5 L14.5 2.1 L13.6 2.0 L12.7 2.0 L11.8 2.0 L10.9 2.5 L10.0 2.4 L9.1 2.2 L8.2 2.4 L7.3 2.5 L6.4 2.5 L5.5 2.4 L4.5 2.5 L3.6 2.5 L2.7 2.3 L1.8 2.4 L0.9 2.2 L0.0 2.0Z" fill="#3c0a16"/></svg>
<div style="left:1591px;top:340px;width:3.2px;height:344px;background:#222;"></div>
<svg style="left:962px;top:1400px;width:18px;height:20px;" viewBox="0 0 4.5 5"><path d="M4.500 0V5L0 2.500Z" fill="#b8b8b8"/></svg>
<div style="left:1000px;top:1399.2px;width:76px;height:22.4px;background:#8c8c8c;border-radius:11.2px;"></div>
<svg style="left:1628px;top:1400px;width:18px;height:20px;" viewBox="0 0 4.5 5"><path d="M0 0V5L4.500 2.500Z" fill="#b8b8b8"/></svg>
<div style="left:1675px;top:200px;width:1773px;height:116px;background:#303030;"></div>
<div style="left:1735.4px;top:202px;width:3.2px;height:26px;background:#bbb;"></div>
<span class="t" style="top:202.6px;font-size:26px;line-height:42px;color:#c8c8c8;left:1741.8px;transform-origin:0 50%;transform:scaleX(0.850);">0:00</span>
<div style="left:1802.2px;top:202px;width:2.4px;height:6px;background:#999;"></div>
<div style="left:1868.4px;top:202px;width:3.2px;height:26px;background:#bbb;"></div>
<span class="t" style="top:202.6px;font-size:26px;line-height:42px;color:#c8c8c8;left:1874.8px;transform-origin:0 50%;transform:scaleX(0.850);">0:10</span>
<div style="left:1935.2px;top:202px;width:2.4px;height:6px;background:#999;"></div>
<div style="left:2001.4px;top:202px;width:3.2px;height:26px;background:#bbb;"></div>
<span class="t" style="top:202.6px;font-size:26px;line-height:42px;color:#c8c8c8;left:2007.8px;transform-origin:0 50%;transform:scaleX(0.850);">0:20</span>
<div style="left:2068.2px;top:202px;width:2.4px;height:6px;background:#999;"></div>
<div style="left:2134.4px;top:202px;width:3.2px;height:26px;background:#bbb;"></div>
<span class="t" style="top:202.6px;font-size:26px;line-height:42px;color:#c8c8c8;left:2140.8px;transform-origin:0 50%;transform:scaleX(0.850);">0:30</span>
<div style="left:2201.2px;top:202px;width:2.4px;height:6px;background:#999;"></div>
<div style="left:2267.4px;top:202px;width:3.2px;height:26px;background:#bbb;"></div>
<span class="t" style="top:202.6px;font-size:26px;line-height:42px;color:#c8c8c8;left:2273.8px;transform-origin:0 50%;transform:scaleX(0.850);">0:40</span>
<div style="left:2334.2px;top:202px;width:2.4px;height:6px;background:#999;"></div>
<div style="left:2400.4px;top:202px;width:3.2px;height:26px;background:#bbb;"></div>
<span class="t" style="top:202.6px;font-size:26px;line-height:42px;color:#c8c8c8;left:2406.8px;transform-origin:0 50%;transform:scaleX(0.850);">0:50</span>
<div style="left:2467.2px;top:202px;width:2.4px;height:6px;background:#999;"></div>
<div style="left:2533.4px;top:202px;width:3.2px;height:26px;background:#bbb;"></div>
<span class="t" style="top:202.6px;font-size:26px;line-height:42px;color:#c8c8c8;left:2539.8px;transform-origin:0 50%;transform:scaleX(0.850);">1:00</span>
<div style="left:2600.2px;top:202px;width:2.4px;height:6px;background:#999;"></div>
<div style="left:2666.4px;top:202px;width:3.2px;height:26px;background:#bbb;"></div>
<span class="t" style="top:202.6px;font-size:26px;line-height:42px;color:#c8c8c8;left:2672.8px;transform-origin:0 50%;transform:scaleX(0.850);">1:10</span>
<div style="left:2733.2px;top:202px;width:2.4px;height:6px;background:#999;"></div>
<div style="left:2799.4px;top:202px;width:3.2px;height:26px;background:#bbb;"></div>
<span class="t" style="top:202.6px;font-size:26px;line-height:42px;color:#c8c8c8;left:2805.8px;transform-origin:0 50%;transform:scaleX(0.850);">1:20</span>
<div style="left:2866.2px;top:202px;width:2.4px;height:6px;background:#999;"></div>
<div style="left:2932.4px;top:202px;width:3.2px;height:26px;background:#bbb;"></div>
<span class="t" style="top:202.6px;font-size:26px;line-height:42px;color:#c8c8c8;left:2938.8px;transform-origin:0 50%;transform:scaleX(0.850);">1:30</span>
<div style="left:2999.2px;top:202px;width:2.4px;height:6px;background:#999;"></div>
<div style="left:3065.4px;top:202px;width:3.2px;height:26px;background:#bbb;"></div>
<span class="t" style="top:202.6px;font-size:26px;line-height:42px;color:#c8c8c8;left:3071.8px;transform-origin:0 50%;transform:scaleX(0.850);">1:40</span>
<div style="left:3132.2px;top:202px;width:2.4px;height:6px;background:#999;"></div>
<div style="left:3198.4px;top:202px;width:3.2px;height:26px;background:#bbb;"></div>
<span class="t" style="top:202.6px;font-size:26px;line-height:42px;color:#c8c8c8;left:3204.8px;transform-origin:0 50%;transform:scaleX(0.850);">1:50</span>
<div style="left:3265.2px;top:202px;width:2.4px;height:6px;background:#999;"></div>
<div style="left:3331.4px;top:202px;width:3.2px;height:26px;background:#bbb;"></div>
<span class="t" style="top:202.6px;font-size:26px;line-height:42px;color:#c8c8c8;left:3337.8px;transform-origin:0 50%;transform:scaleX(0.850);">2:00</span>
<div style="left:3398.2px;top:202px;width:2.4px;height:6px;background:#999;"></div>
<div style="left:1735.4px;top:244px;width:3.2px;height:72px;background:#4e4e4e;"></div>
<span class="t" style="top:240.2px;font-size:30px;line-height:46px;color:#c8c8c8;left:1747px;transform-origin:0 50%;transform:scaleX(0.880);">1</span>
<div style="left:1833.6px;top:244px;width:3.2px;height:72px;background:#4e4e4e;"></div>
<span class="t" style="top:240.2px;font-size:30px;line-height:46px;color:#c8c8c8;left:1845.2px;transform-origin:0 50%;transform:scaleX(0.880);">5</span>
<div style="left:1931.8px;top:244px;width:3.2px;height:72px;background:#4e4e4e;"></div>
<span class="t" style="top:240.2px;font-size:30px;line-height:46px;color:#c8c8c8;left:1943.4px;transform-origin:0 50%;transform:scaleX(0.880);">9</span>
<div style="left:2030px;top:244px;width:3.2px;height:72px;background:#4e4e4e;"></div>
<span class="t" style="top:240.2px;font-size:30px;line-height:46px;color:#c8c8c8;left:2041.6px;transform-origin:0 50%;transform:scaleX(0.880);">13</span>
<div style="left:2128.2px;top:244px;width:3.2px;height:72px;background:#4e4e4e;"></div>
<span class="t" style="top:240.2px;font-size:30px;line-height:46px;color:#c8c8c8;left:2139.8px;transform-origin:0 50%;transform:scaleX(0.880);">17</span>
<div style="left:2226.4px;top:244px;width:3.2px;height:72px;background:#4e4e4e;"></div>
<span class="t" style="top:240.2px;font-size:30px;line-height:46px;color:#c8c8c8;left:2238px;transform-origin:0 50%;transform:scaleX(0.880);">21</span>
<div style="left:2324.6px;top:244px;width:3.2px;height:72px;background:#4e4e4e;"></div>
<span class="t" style="top:240.2px;font-size:30px;line-height:46px;color:#c8c8c8;left:2336.2px;transform-origin:0 50%;transform:scaleX(0.880);">25</span>
<div style="left:2422.8px;top:244px;width:3.2px;height:72px;background:#4e4e4e;"></div>
<span class="t" style="top:240.2px;font-size:30px;line-height:46px;color:#c8c8c8;left:2434.4px;transform-origin:0 50%;transform:scaleX(0.880);">29</span>
<div style="left:2521px;top:244px;width:3.2px;height:72px;background:#4e4e4e;"></div>
<span class="t" style="top:240.2px;font-size:30px;line-height:46px;color:#c8c8c8;left:2532.6px;transform-origin:0 50%;transform:scaleX(0.880);">33</span>
<div style="left:2619.2px;top:244px;width:3.2px;height:72px;background:#4e4e4e;"></div>
<span class="t" style="top:240.2px;font-size:30px;line-height:46px;color:#c8c8c8;left:2630.8px;transform-origin:0 50%;transform:scaleX(0.880);">37</span>
<div style="left:2717.4px;top:244px;width:3.2px;height:72px;background:#4e4e4e;"></div>
<span class="t" style="top:240.2px;font-size:30px;line-height:46px;color:#c8c8c8;left:2729px;transform-origin:0 50%;transform:scaleX(0.880);">41</span>
<div style="left:2815.6px;top:244px;width:3.2px;height:72px;background:#4e4e4e;"></div>
<span class="t" style="top:240.2px;font-size:30px;line-height:46px;color:#c8c8c8;left:2827.2px;transform-origin:0 50%;transform:scaleX(0.880);">45</span>
<div style="left:2913.8px;top:244px;width:3.2px;height:72px;background:#4e4e4e;"></div>
<span class="t" style="top:240.2px;font-size:30px;line-height:46px;color:#c8c8c8;left:2925.4px;transform-origin:0 50%;transform:scaleX(0.880);">49</span>
<div style="left:3012px;top:244px;width:3.2px;height:72px;background:#4e4e4e;"></div>
<span class="t" style="top:240.2px;font-size:30px;line-height:46px;color:#c8c8c8;left:3023.6px;transform-origin:0 50%;transform:scaleX(0.880);">53</span>
<div style="left:3110.2px;top:244px;width:3.2px;height:72px;background:#4e4e4e;"></div>
<span class="t" style="top:240.2px;font-size:30px;line-height:46px;color:#c8c8c8;left:3121.8px;transform-origin:0 50%;transform:scaleX(0.880);">57</span>
<div style="left:3208.4px;top:244px;width:3.2px;height:72px;background:#4e4e4e;"></div>
<span class="t" style="top:240.2px;font-size:30px;line-height:46px;color:#c8c8c8;left:3220px;transform-origin:0 50%;transform:scaleX(0.880);">61</span>
<div style="left:3306.6px;top:244px;width:3.2px;height:72px;background:#4e4e4e;"></div>
<span class="t" style="top:240.2px;font-size:30px;line-height:46px;color:#c8c8c8;left:3318.2px;transform-origin:0 50%;transform:scaleX(0.880);">65</span>
<div style="left:3404.8px;top:244px;width:3.2px;height:72px;background:#4e4e4e;"></div>
<span class="t" style="top:240.2px;font-size:30px;line-height:46px;color:#c8c8c8;left:3416.4px;transform-origin:0 50%;transform:scaleX(0.880);">69</span>
<svg style="left:1737px;top:240px;width:24.8px;height:29.6px;" viewBox="0 0 6.2 7.4"><path d="M0 0L6.200 4.400L0 7.400Z" fill="#3a9be0"/></svg>
<div style="left:1737px;top:317.2px;width:1711px;height:22.4px;background:#707070;"></div>
<div style="left:1737px;top:317.2px;width:1711px;height:3.2px;background:#4a4a4a;"></div>
<div style="left:1675px;top:317.2px;width:62px;height:22.4px;background:#303030;"></div>
<div style="left:1675px;top:340.8px;width:1773px;height:1040.4px;background:#a5a5a5;"></div>
<div style="left:1675px;top:340.8px;width:62px;height:1040.4px;background:#9a9a9a;"></div>
<div style="left:1735.4px;top:340.8px;width:3.2px;height:1040.4px;background:#969696;"></div>
<div style="left:1833.6px;top:340.8px;width:3.2px;height:1040.4px;background:#969696;"></div>
<div style="left:1931.8px;top:340.8px;width:3.2px;height:1040.4px;background:#969696;"></div>
<div style="left:2030px;top:340.8px;width:3.2px;height:1040.4px;background:#969696;"></div>
<div style="left:2128.2px;top:340.8px;width:3.2px;height:1040.4px;background:#969696;"></div>
<div style="left:2226.4px;top:340.8px;width:3.2px;height:1040.4px;background:#969696;"></div>
<div style="left:2324.6px;top:340.8px;width:3.2px;height:1040.4px;background:#969696;"></div>
<div style="left:2422.8px;top:340.8px;width:3.2px;height:1040.4px;background:#969696;"></div>
<div style="left:2521px;top:340.8px;width:3.2px;height:1040.4px;background:#969696;"></div>
<div style="left:2619.2px;top:340.8px;width:3.2px;height:1040.4px;background:#969696;"></div>
<div style="left:2717.4px;top:340.8px;width:3.2px;height:1040.4px;background:#969696;"></div>
<div style="left:2815.6px;top:340.8px;width:3.2px;height:1040.4px;background:#969696;"></div>
<div style="left:2913.8px;top:340.8px;width:3.2px;height:1040.4px;background:#969696;"></div>
<div style="left:3012px;top:340.8px;width:3.2px;height:1040.4px;background:#969696;"></div>
<div style="left:3110.2px;top:340.8px;width:3.2px;height:1040.4px;background:#969696;"></div>
<div style="left:3208.4px;top:340.8px;width:3.2px;height:1040.4px;background:#969696;"></div>
<div style="left:3306.6px;top:340.8px;width:3.2px;height:1040.4px;background:#969696;"></div>
<div style="left:3404.8px;top:340.8px;width:3.2px;height:1040.4px;background:#969696;"></div>
<div style="left:1675px;top:451.6px;width:1773px;height:3.6px;background:#969696;"></div>
<div style="left:1675px;top:564px;width:1773px;height:3.6px;background:#969696;"></div>
<div style="left:1675px;top:676.4px;width:1773px;height:3.6px;background:#969696;"></div>
<div style="left:1675px;top:788.8px;width:1773px;height:3.6px;background:#969696;"></div>
<div style="left:1675px;top:901.2px;width:1773px;height:3.6px;background:#969696;"></div>
<div style="left:1675px;top:1013.6px;width:1773px;height:3.6px;background:#969696;"></div>
<div style="left:1675px;top:1126px;width:1773px;height:3.6px;background:#969696;"></div>
<div style="left:1675px;top:1238.4px;width:1773px;height:3.6px;background:#969696;"></div>
<div style="left:1675px;top:1350.8px;width:1773px;height:3.6px;background:#969696;"></div>
<div style="left:1834px;top:343.2px;width:97px;height:108.8px;background:#b3203f;box-shadow:inset 0 0 0 2.8px rgba(20,20,20,0.75);overflow:hidden;"></div>
<svg style="left:1840px;top:423.6px;width:85px;height:12px;" viewBox="0 0 21.25 3"><path d="M0.5 0.8v2.2h0.8v-2.2zM1.6 1.5v1.5h0.8v-1.5zM2.7 0.8v2.2h0.8v-2.2zM3.8 2.2v0.8h0.8v-0.8zM6.0 2.2v0.8h0.8v-0.8zM9.3 1.5v1.5h0.8v-1.5zM10.4 2.2v0.8h0.8v-0.8zM12.6 2.2v0.8h0.8v-0.8zM13.7 1.5v1.5h0.8v-1.5zM15.9 2.2v0.8h0.8v-0.8zM19.2 2.2v0.8h0.8v-0.8z" fill="#6c1428"/></svg>
<div style="left:1931px;top:343.2px;width:99px;height:108.8px;background:#f6a88c;box-shadow:inset 0 0 0 2.8px rgba(20,20,20,0.75);overflow:hidden;"></div>
<svg style="left:1937px;top:423.6px;width:87px;height:12px;" viewBox="0 0 21.75 3"><path d="M0.5 1.5v1.5h0.8v-1.5zM3.8 2.2v0.8h0.8v-0.8zM6.0 1.5v1.5h0.8v-1.5zM7.1 2.2v0.8h0.8v-0.8zM8.2 2.2v0.8h0.8v-0.8zM9.3 0.8v2.2h0.8v-2.2zM12.6 0.8v2.2h0.8v-2.2zM14.8 2.2v0.8h0.8v-0.8zM17.0 1.5v1.5h0.8v-1.5zM18.1 2.2v0.8h0.8v-0.8zM19.2 2.2v0.8h0.8v-0.8zM20.3 2.2v0.8h0.8v-0.8z" fill="#b86a50"/></svg>
<div style="left:2030px;top:343.2px;width:148px;height:108.8px;background:#fb8595;box-shadow:inset 0 0 0 2.8px rgba(20,20,20,0.75);overflow:hidden;"></div>
<svg style="left:2036px;top:423.6px;width:136px;height:12px;" viewBox="0 0 34.0 3"><path d="M0.5 2.2v0.8h0.8v-0.8zM1.6 2.2v0.8h0.8v-0.8zM2.7 2.2v0.8h0.8v-0.8zM3.8 2.2v0.8h0.8v-0.8zM6.0 2.2v0.8h0.8v-0.8zM9.3 2.2v0.8h0.8v-0.8zM11.5 1.5v1.5h0.8v-1.5zM12.6 0.8v2.2h0.8v-2.2zM13.7 1.5v1.5h0.8v-1.5zM15.9 1.5v1.5h0.8v-1.5zM19.2 2.2v0.8h0.8v-0.8zM22.5 0.8v2.2h0.8v-2.2zM24.7 1.5v1.5h0.8v-1.5zM25.8 2.2v0.8h0.8v-0.8zM29.1 2.2v0.8h0.8v-0.8zM30.2 0.8v2.2h0.8v-2.2zM31.3 2.2v0.8h0.8v-0.8zM32.4 1.5v1.5h0.8v-1.5z" fill="#c05868"/></svg>
<div style="left:2030px;top:343.2px;width:144px;height:56px;overflow:hidden;">
<span class="t" style="top:8.2px;font-size:30px;line-height:46px;color:#e0a0a8;left:20px;transform-origin:0 50%;transform:scaleX(0.923);">Beat w HI</span>
</div>
<div style="left:2178px;top:343.2px;width:24px;height:108.8px;background:#f6a88c;box-shadow:inset 0 0 0 2.8px rgba(20,20,20,0.75);overflow:hidden;"></div>
<svg style="left:2184px;top:423.6px;width:12px;height:12px;" viewBox="0 0 3.0 3"><path d="M1.6 1.5v1.5h0.8v-1.5z" fill="#b86a50"/></svg>
<div style="left:2226px;top:343.2px;width:100px;height:108.8px;background:#b3203f;box-shadow:inset 0 0 0 2.8px rgba(20,20,20,0.75);overflow:hidden;"></div>
<svg style="left:2232px;top:423.6px;width:88px;height:12px;" viewBox="0 0 22.0 3"><path d="M1.6 0.8v2.2h0.8v-2.2zM4.9 2.2v0.8h0.8v-0.8zM6.0 2.2v0.8h0.8v-0.8zM7.1 2.2v0.8h0.8v-0.8zM10.4 1.5v1.5h0.8v-1.5zM13.7 2.2v0.8h0.8v-0.8zM14.8 2.2v0.8h0.8v-0.8zM15.9 0.8v2.2h0.8v-2.2zM17.0 2.2v0.8h0.8v-0.8zM19.2 0.8v2.2h0.8v-2.2zM20.3 0.8v2.2h0.8v-2.2z" fill="#5c1020"/></svg>
<div style="left:2326px;top:343.2px;width:92.8px;height:108.8px;background:#fb8595;box-shadow:inset 0 0 0 2.8px rgba(20,20,20,0.75);overflow:hidden;"></div>
<svg style="left:2332px;top:423.6px;width:80.8px;height:12px;" viewBox="0 0 20.200000000000045 3"><path d="M1.6 1.5v1.5h0.8v-1.5zM4.9 1.5v1.5h0.8v-1.5zM6.0 2.2v0.8h0.8v-0.8zM8.2 2.2v0.8h0.8v-0.8zM9.3 0.8v2.2h0.8v-2.2zM10.4 2.2v0.8h0.8v-0.8zM12.6 2.2v0.8h0.8v-0.8zM13.7 2.2v0.8h0.8v-0.8zM14.8 1.5v1.5h0.8v-1.5zM18.1 2.2v0.8h0.8v-0.8z" fill="#c05868"/></svg>
<div style="left:2422px;top:343.2px;width:198px;height:108.8px;background:#bb6cb8;box-shadow:inset 0 0 0 2.8px rgba(20,20,20,0.75);overflow:hidden;"></div>
<svg style="left:2428px;top:423.6px;width:186px;height:12px;" viewBox="0 0 46.5 3"><path d="M0.5 0.8v2.2h0.8v-2.2zM1.6 2.2v0.8h0.8v-0.8zM2.7 2.2v0.8h0.8v-0.8zM3.8 2.2v0.8h0.8v-0.8zM6.0 2.2v0.8h0.8v-0.8zM7.1 2.2v0.8h0.8v-0.8zM8.2 0.8v2.2h0.8v-2.2zM9.3 1.5v1.5h0.8v-1.5zM10.4 0.8v2.2h0.8v-2.2zM12.6 2.2v0.8h0.8v-0.8zM17.0 2.2v0.8h0.8v-0.8zM18.1 0.8v2.2h0.8v-2.2zM19.2 2.2v0.8h0.8v-0.8zM20.3 1.5v1.5h0.8v-1.5zM24.7 1.5v1.5h0.8v-1.5zM25.8 2.2v0.8h0.8v-0.8zM28.0 0.8v2.2h0.8v-2.2zM29.1 2.2v0.8h0.8v-0.8zM30.2 2.2v0.8h0.8v-0.8zM31.3 2.2v0.8h0.8v-0.8zM32.4 1.5v1.5h0.8v-1.5zM33.5 0.8v2.2h0.8v-2.2zM34.6 2.2v0.8h0.8v-0.8zM36.8 1.5v1.5h0.8v-1.5zM40.1 0.8v2.2h0.8v-2.2zM41.2 2.2v0.8h0.8v-0.8zM44.5 0.8v2.2h0.8v-2.2z" fill="#7a3878"/></svg>
<div style="left:2422px;top:343.2px;width:194px;height:56px;overflow:hidden;">
<span class="t" style="top:8.2px;font-size:30px;line-height:46px;color:#4a1a4a;left:18px;transform-origin:0 50%;transform:scaleX(0.894);">Beat w Lazers</span>
</div>
<div style="left:2668px;top:343.2px;width:97px;height:108.8px;background:#62c444;box-shadow:inset 0 0 0 2.8px rgba(20,20,20,0.75);overflow:hidden;"></div>
<svg style="left:2674px;top:423.6px;width:85px;height:12px;" viewBox="0 0 21.25 3"><path d="M0.5 0.8v2.2h0.8v-2.2zM2.7 1.5v1.5h0.8v-1.5zM3.8 0.8v2.2h0.8v-2.2zM6.0 2.2v0.8h0.8v-0.8zM8.2 0.8v2.2h0.8v-2.2zM9.3 2.2v0.8h0.8v-0.8zM10.4 2.2v0.8h0.8v-0.8zM13.7 2.2v0.8h0.8v-0.8zM14.8 1.5v1.5h0.8v-1.5zM17.0 2.2v0.8h0.8v-0.8zM19.2 1.5v1.5h0.8v-1.5z" fill="#3a8a24"/></svg>
<div style="left:2765px;top:343.2px;width:70px;height:108.8px;background:#62c444;box-shadow:inset 0 0 0 2.8px rgba(20,20,20,0.75);overflow:hidden;"></div>
<svg style="left:2771px;top:423.6px;width:58px;height:12px;" viewBox="0 0 14.5 3"><path d="M1.6 0.8v2.2h0.8v-2.2zM4.9 2.2v0.8h0.8v-0.8zM7.1 2.2v0.8h0.8v-0.8zM9.3 0.8v2.2h0.8v-2.2zM10.4 2.2v0.8h0.8v-0.8zM11.5 2.2v0.8h0.8v-0.8z" fill="#3a8a24"/></svg>
<div style="left:2835px;top:343.2px;width:18.2px;height:108.8px;background:#62c444;box-shadow:inset 0 0 0 2.8px rgba(20,20,20,0.75);overflow:hidden;"></div>
<svg style="left:2841px;top:423.6px;width:6.2px;height:12px;" viewBox="0 0 1.5499999999999545 3"><path d="M0.5 1.5v1.5h0.8v-1.5z" fill="#3a8a24"/></svg>
<div style="left:3111px;top:343.2px;width:99px;height:108.8px;background:#f6a88c;box-shadow:inset 0 0 0 2.8px rgba(20,20,20,0.75);overflow:hidden;"></div>
<svg style="left:3117px;top:423.6px;width:87px;height:12px;" viewBox="0 0 21.75 3"><path d="M0.5 0.8v2.2h0.8v-2.2zM2.7 1.5v1.5h0.8v-1.5zM3.8 2.2v0.8h0.8v-0.8zM8.2 1.5v1.5h0.8v-1.5zM10.4 2.2v0.8h0.8v-0.8zM13.7 2.2v0.8h0.8v-0.8zM15.9 1.5v1.5h0.8v-1.5zM17.0 2.2v0.8h0.8v-0.8zM20.3 2.2v0.8h0.8v-0.8z" fill="#c07a60"/></svg>
<div style="left:3210px;top:343.2px;width:73px;height:108.8px;background:#f08204;box-shadow:inset 0 0 0 2.8px rgba(20,20,20,0.75);overflow:hidden;"></div>
<svg style="left:3216px;top:423.6px;width:61px;height:12px;" viewBox="0 0 15.25 3"><path d="M0.5 1.5v1.5h0.8v-1.5zM1.6 1.5v1.5h0.8v-1.5zM6.0 0.8v2.2h0.8v-2.2zM7.1 2.2v0.8h0.8v-0.8zM8.2 0.8v2.2h0.8v-2.2zM9.3 2.2v0.8h0.8v-0.8zM10.4 2.2v0.8h0.8v-0.8zM12.6 2.2v0.8h0.8v-0.8zM13.7 2.2v0.8h0.8v-0.8z" fill="#b05c04"/></svg>
<div style="left:3305px;top:343.2px;width:143px;height:108.8px;background:#62c444;box-shadow:inset 0 0 0 2.8px rgba(20,20,20,0.75);overflow:hidden;"></div>
<svg style="left:3311px;top:423.6px;width:131px;height:12px;" viewBox="0 0 32.75 3"><path d="M0.5 1.5v1.5h0.8v-1.5zM1.6 2.2v0.8h0.8v-0.8zM2.7 2.2v0.8h0.8v-0.8zM7.1 1.5v1.5h0.8v-1.5zM8.2 2.2v0.8h0.8v-0.8zM11.5 1.5v1.5h0.8v-1.5zM12.6 1.5v1.5h0.8v-1.5zM14.8 2.2v0.8h0.8v-0.8zM15.9 0.8v2.2h0.8v-2.2zM18.1 2.2v0.8h0.8v-0.8zM19.2 0.8v2.2h0.8v-2.2zM20.3 1.5v1.5h0.8v-1.5zM21.4 1.5v1.5h0.8v-1.5zM22.5 1.5v1.5h0.8v-1.5zM24.7 2.2v0.8h0.8v-0.8zM25.8 0.8v2.2h0.8v-2.2zM29.1 2.2v0.8h0.8v-0.8z" fill="#3a8a24"/></svg>
<div style="left:3305px;top:343.2px;width:139px;height:56px;overflow:hidden;">
<span class="t" style="top:8.2px;font-size:30px;line-height:46px;color:#2a6a1a;left:18px;transform-origin:0 50%;transform:scaleX(0.905);">Beat w Lazers</span>
</div>
<div style="left:1834px;top:455.6px;width:392px;height:108.8px;background:#1450f5;box-shadow:inset 0 0 0 2.8px rgba(20,20,20,0.75);overflow:hidden;"></div>
<div style="left:1836.8px;top:525.6px;width:386.4px;height:30px;background:#06185c;"></div>
<div style="left:1834px;top:455.6px;width:388px;height:56px;overflow:hidden;">
<span class="t" style="top:8.2px;font-size:30px;line-height:46px;color:#061a60;left:18px;transform-origin:0 50%;transform:scaleX(0.887);">Odds and Evens Riser 140bpm</span>
</div>
<svg style="left:1836px;top:520.8px;width:388px;height:9.6px;" viewBox="0 0 97 2.4"><path d="M0.0 0.2 L0.9 0.1 L1.8 0.1 L2.7 0.0 L3.6 0.1 L4.5 0.0 L5.4 0.5 L6.3 0.3 L7.3 0.0 L8.2 0.2 L9.1 0.1 L10.0 0.5 L10.9 0.3 L11.8 0.4 L12.7 0.2 L13.6 0.2 L14.5 0.5 L15.4 0.4 L16.3 0.4 L17.2 0.0 L18.1 0.1 L19.0 0.5 L19.9 0.1 L20.9 0.5 L21.8 0.2 L22.7 0.5 L23.6 0.5 L24.5 0.1 L25.4 0.4 L26.3 0.4 L27.2 0.0 L28.1 0.1 L29.0 0.4 L29.9 0.0 L30.8 0.2 L31.7 0.2 L32.6 0.4 L33.5 0.0 L34.4 0.2 L35.4 0.0 L36.3 0.1 L37.2 0.4 L38.1 0.3 L39.0 0.5 L39.9 0.5 L40.8 0.5 L41.7 0.4 L42.6 0.2 L43.5 0.5 L44.4 0.2 L45.3 0.4 L46.2 0.4 L47.1 0.1 L48.0 0.3 L49.0 0.4 L49.9 0.3 L50.8 0.2 L51.7 0.5 L52.6 0.0 L53.5 0.5 L54.4 0.1 L55.3 0.1 L56.2 0.5 L57.1 0.1 L58.0 0.3 L58.9 0.2 L59.8 0.5 L60.7 0.5 L61.6 0.4 L62.6 0.0 L63.5 0.4 L64.4 0.1 L65.3 0.0 L66.2 0.0 L67.1 0.4 L68.0 0.3 L68.9 0.3 L69.8 0.1 L70.7 0.5 L71.6 0.1 L72.5 0.1 L73.4 0.1 L74.3 0.5 L75.2 0.0 L76.1 0.5 L77.1 0.4 L78.0 0.2 L78.9 0.0 L79.8 0.4 L80.7 0.0 L81.6 0.2 L82.5 0.4 L83.4 0.4 L84.3 0.4 L85.2 0.5 L86.1 0.5 L87.0 0.2 L87.9 0.0 L88.8 0.5 L89.7 0.5 L90.7 0.0 L91.6 0.3 L92.5 0.3 L93.4 0.4 L94.3 0.2 L95.2 0.1 L96.1 0.3 L97.0 0.3 L97.0 2.1 L96.1 2.1 L95.2 2.3 L94.3 2.2 L93.4 2.0 L92.5 2.1 L91.6 2.1 L90.7 2.4 L89.7 1.9 L88.8 1.9 L87.9 2.4 L87.0 2.2 L86.1 1.9 L85.2 1.9 L84.3 2.0 L83.4 2.0 L82.5 2.0 L81.6 2.2 L80.7 2.4 L79.8 2.0 L78.9 2.4 L78.0 2.2 L77.1 2.0 L76.1 1.9 L75.2 2.4 L74.3 1.9 L73.4 2.3 L72.5 2.3 L71.6 2.3 L70.7 1.9 L69.8 2.3 L68.9 2.1 L68.0 2.1 L67.1 2.0 L66.2 2.4 L65.3 2.4 L64.4 2.3 L63.5 2.0 L62.6 2.4 L61.6 2.0 L60.7 1.9 L59.8 1.9 L58.9 2.2 L58.0 2.1 L57.1 2.3 L56.2 1.9 L55.3 2.3 L54.4 2.3 L53.5 1.9 L52.6 2.4 L51.7 1.9 L50.8 2.2 L49.9 2.1 L49.0 2.0 L48.0 2.1 L47.1 2.3 L46.2 2.0 L45.3 2.0 L44.4 2.2 L43.5 1.9 L42.6 2.2 L41.7 2.0 L40.8 1.9 L39.9 1.9 L39.0 1.9 L38.1 2.1 L37.2 2.0 L36.3 2.3 L35.4 2.4 L34.4 2.2 L33.5 2.4 L32.6 2.0 L31.7 2.2 L30.8 2.2 L29.9 2.4 L29.0 2.0 L28.1 2.3 L27.2 2.4 L26.3 2.0 L25.4 2.0 L24.5 2.3 L23.6 1.9 L22.7 1.9 L21.8 2.2 L20.9 1.9 L19.9 2.3 L19.0 1.9 L18.1 2.3 L17.2 2.4 L16.3 2.0 L15.4 2.0 L14.5 1.9 L13.6 2.2 L12.7 2.2 L11.8 2.0 L10.9 2.1 L10.0 1.9 L9.1 2.3 L8.2 2.2 L7.3 2.4 L6.3 2.1 L5.4 1.9 L4.5 2.4 L3.6 2.3 L2.7 2.4 L1.8 2.3 L0.9 2.3 L0.0 2.2Z" fill="#06185c"/></svg>
<div style="left:2226px;top:568px;width:187px;height:108.8px;background:#b3203f;box-shadow:inset 0 0 0 2.8px rgba(20,20,20,0.75);overflow:hidden;"></div>
<div style="left:2228.8px;top:640px;width:181.4px;height:30px;background:#3c0a16;"></div>
<div style="left:2226px;top:568px;width:183px;height:56px;overflow:hidden;">
<span class="t" style="top:8.2px;font-size:30px;line-height:46px;color:#38060e;left:20px;transform-origin:0 50%;transform:scaleX(0.945);">Motor Wease</span>
</div>
<svg style="left:2228px;top:636px;width:182px;height:9.6px;" viewBox="0 0 45.5 2.4"><path d="M0.0 0.1 L0.9 0.1 L1.8 0.3 L2.7 0.4 L3.6 0.5 L4.5 0.2 L5.5 0.3 L6.4 0.1 L7.3 0.3 L8.2 0.1 L9.1 0.4 L10.0 0.1 L10.9 0.1 L11.8 0.3 L12.7 0.2 L13.7 0.2 L14.6 0.4 L15.5 0.2 L16.4 0.1 L17.3 0.4 L18.2 0.1 L19.1 0.2 L20.0 0.1 L20.9 0.4 L21.8 0.5 L22.8 0.1 L23.7 0.1 L24.6 0.3 L25.5 0.5 L26.4 0.4 L27.3 0.2 L28.2 0.4 L29.1 0.0 L30.0 0.2 L30.9 0.4 L31.9 0.2 L32.8 0.3 L33.7 0.0 L34.6 0.0 L35.5 0.3 L36.4 0.2 L37.3 0.2 L38.2 0.1 L39.1 0.0 L40.0 0.5 L41.0 0.3 L41.9 0.2 L42.8 0.4 L43.7 0.2 L44.6 0.5 L45.5 0.1 L45.5 2.3 L44.6 1.9 L43.7 2.2 L42.8 2.0 L41.9 2.2 L41.0 2.1 L40.0 1.9 L39.1 2.4 L38.2 2.3 L37.3 2.2 L36.4 2.2 L35.5 2.1 L34.6 2.4 L33.7 2.4 L32.8 2.1 L31.9 2.2 L30.9 2.0 L30.0 2.2 L29.1 2.4 L28.2 2.0 L27.3 2.2 L26.4 2.0 L25.5 1.9 L24.6 2.1 L23.7 2.3 L22.8 2.3 L21.8 1.9 L20.9 2.0 L20.0 2.3 L19.1 2.2 L18.2 2.3 L17.3 2.0 L16.4 2.3 L15.5 2.2 L14.6 2.0 L13.7 2.2 L12.7 2.2 L11.8 2.1 L10.9 2.3 L10.0 2.3 L9.1 2.0 L8.2 2.3 L7.3 2.1 L6.4 2.3 L5.5 2.1 L4.5 2.2 L3.6 1.9 L2.7 2.0 L1.8 2.1 L0.9 2.3 L0.0 2.3Z" fill="#3c0a16"/></svg>
<svg style="left:2228px;top:665.2px;width:182px;height:9.6px;" viewBox="0 0 45.5 2.4"><path d="M0.0 0.4 L0.9 0.5 L1.8 0.2 L2.7 0.5 L3.6 0.3 L4.5 0.3 L5.5 0.5 L6.4 0.3 L7.3 0.5 L8.2 0.3 L9.1 0.5 L10.0 0.5 L10.9 0.3 L11.8 0.1 L12.7 0.5 L13.7 0.4 L14.6 0.2 L15.5 0.0 L16.4 0.2 L17.3 0.3 L18.2 0.0 L19.1 0.5 L20.0 0.1 L20.9 0.4 L21.8 0.5 L22.8 0.5 L23.7 0.4 L24.6 0.1 L25.5 0.4 L26.4 0.2 L27.3 0.2 L28.2 0.3 L29.1 0.2 L30.0 0.5 L30.9 0.5 L31.9 0.4 L32.8 0.2 L33.7 0.3 L34.6 0.4 L35.5 0.2 L36.4 0.3 L37.3 0.4 L38.2 0.1 L39.1 0.2 L40.0 0.4 L41.0 0.2 L41.9 0.3 L42.8 0.1 L43.7 0.1 L44.6 0.4 L45.5 0.0 L45.5 2.4 L44.6 2.0 L43.7 2.3 L42.8 2.3 L41.9 2.1 L41.0 2.2 L40.0 2.0 L39.1 2.2 L38.2 2.3 L37.3 2.0 L36.4 2.1 L35.5 2.2 L34.6 2.0 L33.7 2.1 L32.8 2.2 L31.9 2.0 L30.9 1.9 L30.0 1.9 L29.1 2.2 L28.2 2.1 L27.3 2.2 L26.4 2.2 L25.5 2.0 L24.6 2.3 L23.7 2.0 L22.8 1.9 L21.8 1.9 L20.9 2.0 L20.0 2.3 L19.1 1.9 L18.2 2.4 L17.3 2.1 L16.4 2.2 L15.5 2.4 L14.6 2.2 L13.7 2.0 L12.7 1.9 L11.8 2.3 L10.9 2.1 L10.0 1.9 L9.1 1.9 L8.2 2.1 L7.3 1.9 L6.4 2.1 L5.5 1.9 L4.5 2.1 L3.6 2.1 L2.7 1.9 L1.8 2.2 L0.9 1.9 L0.0 2.0Z" fill="#c02444"/></svg>
<div style="left:2422px;top:680.4px;width:198px;height:108.8px;background:#92c2ce;box-shadow:inset 0 0 0 2.8px rgba(20,20,20,0.75);overflow:hidden;"></div>
<div style="left:2422px;top:680.4px;width:194px;height:56px;overflow:hidden;">
<span class="t" style="top:8.2px;font-size:30px;line-height:46px;color:#3c545c;left:20px;transform-origin:0 50%;transform:scaleX(0.905);">HarmoSplit Gr</span>
</div>
<svg style="left:2424.8px;top:748.4px;width:192px;height:28px;" viewBox="0 0 48 7"><path d="M0.0 1.2 L0.9 0.1 L1.8 1.4 L2.7 0.5 L3.6 1.4 L4.5 1.2 L5.4 0.0 L6.3 1.2 L7.2 0.6 L8.2 0.9 L9.1 0.9 L10.0 0.8 L10.9 1.3 L11.8 0.3 L12.7 1.4 L13.6 1.2 L14.5 1.5 L15.4 1.2 L16.3 0.9 L17.2 0.2 L18.1 1.0 L19.0 1.4 L19.9 1.2 L20.8 0.0 L21.7 1.5 L22.6 0.6 L23.5 1.0 L24.5 0.5 L25.4 1.0 L26.3 0.5 L27.2 0.8 L28.1 0.6 L29.0 0.2 L29.9 0.7 L30.8 1.4 L31.7 1.5 L32.6 0.1 L33.5 0.8 L34.4 1.3 L35.3 0.1 L36.2 0.7 L37.1 0.4 L38.0 0.2 L38.9 1.1 L39.8 1.0 L40.8 0.2 L41.7 1.4 L42.6 0.4 L43.5 1.4 L44.4 0.5 L45.3 0.5 L46.2 0.1 L47.1 0.2 L48.0 0.8 L48.0 6.2 L47.1 6.8 L46.2 6.9 L45.3 6.5 L44.4 6.5 L43.5 5.6 L42.6 6.6 L41.7 5.6 L40.8 6.8 L39.8 6.0 L38.9 5.9 L38.0 6.8 L37.1 6.6 L36.2 6.3 L35.3 6.9 L34.4 5.7 L33.5 6.2 L32.6 6.9 L31.7 5.5 L30.8 5.6 L29.9 6.3 L29.0 6.8 L28.1 6.4 L27.2 6.2 L26.3 6.5 L25.4 6.0 L24.5 6.5 L23.5 6.0 L22.6 6.4 L21.7 5.5 L20.8 7.0 L19.9 5.8 L19.0 5.6 L18.1 6.0 L17.2 6.8 L16.3 6.1 L15.4 5.8 L14.5 5.5 L13.6 5.8 L12.7 5.6 L11.8 6.7 L10.9 5.7 L10.0 6.2 L9.1 6.1 L8.2 6.1 L7.2 6.4 L6.3 5.8 L5.4 7.0 L4.5 5.8 L3.6 5.6 L2.7 6.5 L1.8 5.6 L0.9 6.9 L0.0 5.8Z" fill="#26343a"/></svg>
<div style="left:2668px;top:792.8px;width:198px;height:108.8px;background:#9cc4a6;box-shadow:inset 0 0 0 2.8px rgba(20,20,20,0.75);overflow:hidden;"></div>
<div style="left:2668px;top:792.8px;width:194px;height:56px;overflow:hidden;">
<span class="t" style="top:8.2px;font-size:30px;line-height:46px;color:#3e5444;left:20px;transform-origin:0 50%;transform:scaleX(0.905);">HarmoSplit Gr</span>
</div>
<svg style="left:2670.8px;top:860.8px;width:192px;height:30px;" viewBox="0 0 48 7.5"><path d="M0.0 0.9 L0.9 1.1 L1.8 1.5 L2.7 0.2 L3.6 1.7 L4.5 0.8 L5.4 0.2 L6.3 1.6 L7.2 0.8 L8.2 0.6 L9.1 1.6 L10.0 1.0 L10.9 0.5 L11.8 0.9 L12.7 0.5 L13.6 1.4 L14.5 1.3 L15.4 1.5 L16.3 0.8 L17.2 0.1 L18.1 0.7 L19.0 0.4 L19.9 1.0 L20.8 0.4 L21.7 1.5 L22.6 1.2 L23.5 0.5 L24.5 0.5 L25.4 1.0 L26.3 1.5 L27.2 1.2 L28.1 1.3 L29.0 1.2 L29.9 0.3 L30.8 1.4 L31.7 0.2 L32.6 0.2 L33.5 1.6 L34.4 1.0 L35.3 0.9 L36.2 1.6 L37.1 1.0 L38.0 0.2 L38.9 1.5 L39.8 0.7 L40.8 1.5 L41.7 0.7 L42.6 0.2 L43.5 1.3 L44.4 1.7 L45.3 1.5 L46.2 0.8 L47.1 1.7 L48.0 1.5 L48.0 6.0 L47.1 5.8 L46.2 6.7 L45.3 6.0 L44.4 5.8 L43.5 6.2 L42.6 7.3 L41.7 6.8 L40.8 6.0 L39.8 6.8 L38.9 6.0 L38.0 7.3 L37.1 6.5 L36.2 5.9 L35.3 6.6 L34.4 6.5 L33.5 5.9 L32.6 7.3 L31.7 7.3 L30.8 6.1 L29.9 7.2 L29.0 6.3 L28.1 6.2 L27.2 6.3 L26.3 6.0 L25.4 6.5 L24.5 7.0 L23.5 7.0 L22.6 6.3 L21.7 6.0 L20.8 7.1 L19.9 6.5 L19.0 7.1 L18.1 6.8 L17.2 7.4 L16.3 6.7 L15.4 6.0 L14.5 6.2 L13.6 6.1 L12.7 7.0 L11.8 6.6 L10.9 7.0 L10.0 6.5 L9.1 5.9 L8.2 6.9 L7.2 6.7 L6.3 5.9 L5.4 7.3 L4.5 6.7 L3.6 5.8 L2.7 7.3 L1.8 6.0 L0.9 6.4 L0.0 6.6Z" fill="#27382c"/></svg>
<div style="left:2866px;top:905.2px;width:197px;height:108.8px;background:#30aa6a;box-shadow:inset 0 0 0 2.8px rgba(20,20,20,0.75);overflow:hidden;"></div>
<div style="left:2866px;top:905.2px;width:193px;height:56px;overflow:hidden;">
<span class="t" style="top:8.2px;font-size:30px;line-height:46px;color:#0e3a22;left:20px;transform-origin:0 50%;transform:scaleX(0.889);">PolyD Angel D</span>
</div>
<svg style="left:2868.8px;top:971.2px;width:192px;height:30px;" viewBox="0 0 48 7.5"><path d="M0.0 1.0 L0.9 1.2 L1.8 1.0 L2.7 1.6 L3.6 0.7 L4.5 0.6 L5.4 0.9 L6.3 1.7 L7.2 1.1 L8.2 1.4 L9.1 1.5 L10.0 0.4 L10.9 0.4 L11.8 1.8 L12.7 0.6 L13.6 1.0 L14.5 1.3 L15.4 1.5 L16.3 0.9 L17.2 1.2 L18.1 0.9 L19.0 0.9 L19.9 1.7 L20.8 0.7 L21.7 0.4 L22.6 0.4 L23.5 1.0 L24.5 1.8 L25.4 1.9 L26.3 1.7 L27.2 0.5 L28.1 1.4 L29.0 1.3 L29.9 0.5 L30.8 1.4 L31.7 1.1 L32.6 1.2 L33.5 1.8 L34.4 1.0 L35.3 0.6 L36.2 1.7 L37.1 1.6 L38.0 1.3 L38.9 1.8 L39.8 1.1 L40.8 0.7 L41.7 0.9 L42.6 1.1 L43.5 0.6 L44.4 1.7 L45.3 1.0 L46.2 1.3 L47.1 1.0 L48.0 1.7 L48.0 5.8 L47.1 6.5 L46.2 6.2 L45.3 6.5 L44.4 5.8 L43.5 6.9 L42.6 6.4 L41.7 6.6 L40.8 6.8 L39.8 6.4 L38.9 5.7 L38.0 6.2 L37.1 5.9 L36.2 5.8 L35.3 6.9 L34.4 6.5 L33.5 5.7 L32.6 6.3 L31.7 6.4 L30.8 6.1 L29.9 7.0 L29.0 6.2 L28.1 6.1 L27.2 7.0 L26.3 5.8 L25.4 5.6 L24.5 5.7 L23.5 6.5 L22.6 7.1 L21.7 7.1 L20.8 6.8 L19.9 5.8 L19.0 6.6 L18.1 6.6 L17.2 6.3 L16.3 6.6 L15.4 6.0 L14.5 6.2 L13.6 6.5 L12.7 6.9 L11.8 5.7 L10.9 7.1 L10.0 7.1 L9.1 6.0 L8.2 6.1 L7.2 6.4 L6.3 5.8 L5.4 6.6 L4.5 6.9 L3.6 6.8 L2.7 5.9 L1.8 6.5 L0.9 6.3 L0.0 6.5Z" fill="#0c3a22"/></svg>
<div style="left:3111px;top:1017.6px;width:172px;height:108.8px;background:#2a9ad8;box-shadow:inset 0 0 0 2.8px rgba(20,20,20,0.75);overflow:hidden;"></div>
<div style="left:3111px;top:1017.6px;width:168px;height:56px;overflow:hidden;">
<span class="t" style="top:8.2px;font-size:30px;line-height:46px;color:#0c4468;left:20px;transform-origin:0 50%;transform:scaleX(0.849);">Forest Cat W</span>
</div>
<svg style="left:3114px;top:1087.6px;width:166px;height:28px;" viewBox="0 0 41.5 7"><path d="M0.0 0.9 L0.9 0.7 L1.8 0.1 L2.7 0.8 L3.6 0.8 L4.5 0.6 L5.4 1.3 L6.3 0.8 L7.2 0.6 L8.1 0.3 L9.0 1.4 L9.9 1.1 L10.8 1.4 L11.7 0.3 L12.6 0.5 L13.5 1.5 L14.4 0.0 L15.3 0.1 L16.2 0.5 L17.1 0.6 L18.0 1.3 L18.9 1.6 L19.8 0.7 L20.8 1.5 L21.7 1.3 L22.6 1.2 L23.5 1.5 L24.4 0.8 L25.3 0.9 L26.2 0.2 L27.1 0.8 L28.0 0.6 L28.9 0.8 L29.8 0.5 L30.7 0.9 L31.6 1.1 L32.5 0.0 L33.4 0.0 L34.3 0.3 L35.2 0.5 L36.1 1.1 L37.0 1.2 L37.9 1.1 L38.8 1.5 L39.7 0.4 L40.6 0.9 L41.5 0.2 L41.5 6.8 L40.6 6.1 L39.7 6.6 L38.8 5.5 L37.9 5.9 L37.0 5.8 L36.1 5.9 L35.2 6.5 L34.3 6.7 L33.4 7.0 L32.5 7.0 L31.6 5.9 L30.7 6.1 L29.8 6.5 L28.9 6.2 L28.0 6.4 L27.1 6.2 L26.2 6.8 L25.3 6.1 L24.4 6.2 L23.5 5.5 L22.6 5.8 L21.7 5.7 L20.8 5.5 L19.8 6.3 L18.9 5.4 L18.0 5.7 L17.1 6.4 L16.2 6.5 L15.3 6.9 L14.4 7.0 L13.5 5.5 L12.6 6.5 L11.7 6.7 L10.8 5.6 L9.9 5.9 L9.0 5.6 L8.1 6.7 L7.2 6.4 L6.3 6.2 L5.4 5.7 L4.5 6.4 L3.6 6.2 L2.7 6.2 L1.8 6.9 L0.9 6.3 L0.0 6.1Z" fill="#0a2c44"/></svg>
<div style="left:3305px;top:1017.6px;width:143px;height:108.8px;background:#2a9ad8;box-shadow:inset 0 0 0 2.8px rgba(20,20,20,0.75);overflow:hidden;"></div>
<div style="left:3305px;top:1017.6px;width:139px;height:56px;overflow:hidden;">
<span class="t" style="top:8.2px;font-size:30px;line-height:46px;color:#0c4468;left:18px;transform-origin:0 50%;transform:scaleX(0.849);">Forest Cat W</span>
</div>
<svg style="left:3308px;top:1087.6px;width:140px;height:28px;" viewBox="0 0 35 7"><path d="M0.0 0.8 L0.9 0.5 L1.8 0.5 L2.8 1.4 L3.7 1.6 L4.6 1.0 L5.5 1.1 L6.4 0.3 L7.4 0.5 L8.3 0.6 L9.2 0.7 L10.1 0.5 L11.1 1.3 L12.0 0.9 L12.9 1.3 L13.8 0.1 L14.7 1.5 L15.7 0.3 L16.6 1.5 L17.5 0.5 L18.4 1.0 L19.3 0.9 L20.3 0.2 L21.2 1.5 L22.1 1.5 L23.0 0.1 L23.9 0.8 L24.9 1.4 L25.8 0.0 L26.7 0.1 L27.6 1.4 L28.6 0.9 L29.5 1.4 L30.4 1.1 L31.3 0.6 L32.2 1.3 L33.2 0.5 L34.1 1.5 L35.0 1.3 L35.0 5.7 L34.1 5.5 L33.2 6.5 L32.2 5.7 L31.3 6.4 L30.4 5.9 L29.5 5.6 L28.6 6.1 L27.6 5.6 L26.7 6.9 L25.8 7.0 L24.9 5.6 L23.9 6.2 L23.0 6.9 L22.1 5.5 L21.2 5.5 L20.3 6.8 L19.3 6.1 L18.4 6.0 L17.5 6.5 L16.6 5.5 L15.7 6.7 L14.7 5.5 L13.8 6.9 L12.9 5.7 L12.0 6.1 L11.1 5.7 L10.1 6.5 L9.2 6.3 L8.3 6.4 L7.4 6.5 L6.4 6.7 L5.5 5.9 L4.6 6.0 L3.7 5.4 L2.8 5.6 L1.8 6.5 L0.9 6.5 L0.0 6.2Z" fill="#0a2c44"/></svg>
<div style="left:2130px;top:351.2px;width:0;height:96px;border-left:3.2px dashed rgba(255,255,255,0.45);"></div>
<div style="left:2522px;top:351.2px;width:0;height:96px;border-left:3.2px dashed rgba(255,255,255,0.45);"></div>
<div style="left:2815px;top:351.2px;width:0;height:96px;border-left:3.2px dashed rgba(255,255,255,0.45);"></div>
<div style="left:3406.4px;top:351.2px;width:0;height:96px;border-left:3.2px dashed rgba(255,255,255,0.45);"></div>
<div style="left:1873.6px;top:244px;width:3.6px;height:1137.2px;background:#3c3c3c;"></div>
<div style="left:3448px;top:200px;width:58px;height:1181.2px;background:#4a4a4a;"></div>
<svg style="left:3466px;top:218px;width:20px;height:18px;" viewBox="0 0 5 4.5"><path d="M0 4.500H5L2.500 0Z" fill="#b0b0b0"/></svg>
<div style="left:3464px;top:256px;width:23.2px;height:672px;background:#8a8a8a;border-radius:11.6px;"></div>
<svg style="left:3466px;top:1356px;width:20px;height:18px;" viewBox="0 0 5 4.5"><path d="M0 0H5L2.500 4.500Z" fill="#b0b0b0"/></svg>
<svg style="left:1686px;top:1400px;width:18px;height:20px;" viewBox="0 0 4.5 5"><path d="M4.500 0V5L0 2.500Z" fill="#b8b8b8"/></svg>
<div style="left:1722px;top:1399.2px;width:926px;height:22.4px;background:#8c8c8c;border-radius:11.2px;"></div>
<svg style="left:3016px;top:1400px;width:18px;height:20px;" viewBox="0 0 4.5 5"><path d="M0 0V5L4.500 2.500Z" fill="#b8b8b8"/></svg>
<svg style="left:3062px;top:1394px;width:36px;height:32px;" viewBox="0 0 9 8"><circle cx="2" cy="6" r="1.300" fill="none" stroke="#f98511" stroke-width="0.900"/><circle cx="4.500" cy="1.800" r="1.300" fill="none" stroke="#f98511" stroke-width="0.900"/><circle cx="7.200" cy="6" r="1.300" fill="none" stroke="#f98511" stroke-width="0.900"/><path d="M2.500 5L4 3M5 3L6.600 5M3.300 6H5.900" stroke="#f98511" stroke-width="0.800"/></svg>
<span class="t" style="top:1387.4px;font-size:30px;line-height:46px;color:#c4c4c4;left:3258px;transform-origin:0 50%;transform:scaleX(1.055);">4/1</span>
<svg style="left:3316px;top:1406px;width:12px;height:8.8px;" viewBox="0 0 3 2.2"><path d="M0 2.200H3L1.500 0Z" fill="#b0b0b0"/></svg>
<svg style="left:3350px;top:1395.2px;width:32px;height:28px;" viewBox="0 0 8 7"><path d="M4 0V7" stroke="#f98511" stroke-width="1"/><path d="M0 1.500L2.800 3.500L0 5.500ZM8 1.500L5.200 3.500L8 5.500Z" fill="#f98511"/></svg>
<svg style="left:3410px;top:1396px;width:24px;height:28px;" viewBox="0 0 6 7"><path d="M3 1.500V7M0.500 3H5.500" stroke="#9a9a9a" stroke-width="0.9"/><rect x="1.600" y="4" width="2.800" height="3" fill="#9a9a9a"/></svg>
<div style="left:3516px;top:196px;width:570px;height:1886px;background:#484848;border-radius:8px;"></div>
<span class="t" style="top:207.2px;font-size:28px;line-height:44px;color:#d0d0d0;font-weight:500;left:3540px;transform-origin:0 50%;transform:scaleX(0.867);">ブラウザー - デバイス</span>
<div style="left:3524px;top:252px;width:66px;height:58px;background:#3c3c3c;border-radius:8px;"></div>
<svg style="left:3537.2px;top:262px;width:40px;height:38.4px;" viewBox="0 0 10 9.6"><rect x="0.800" y="0.800" width="8.400" height="8" rx="1.600" fill="none" stroke="#f98511" stroke-width="1.500"/></svg>
<svg style="left:3616px;top:260px;width:44px;height:44px;" viewBox="0 0 11 11"><circle cx="5.500" cy="5.500" r="4.600" fill="none" stroke="#e0e0e0" stroke-width="0.9"/><ellipse cx="5.500" cy="5.500" rx="2.600" ry="1.600" fill="#e0e0e0"/><circle cx="5.500" cy="5.500" r="0.700" fill="#484848"/></svg>
<svg style="left:3701.2px;top:265.2px;width:31.2px;height:32px;" viewBox="0 0 7.8 8"><path d="M0 0.400H1.100V7.600H0Z" fill="#e0e0e0"/><path d="M1.100 0.600L7.800 4L1.100 7.400L2.500 4Z" fill="#e0e0e0"/></svg>
<svg style="left:3780px;top:264px;width:32px;height:34px;" viewBox="0 0 8 8.5"><path d="M0 0H2.100V5H2.300V8.500H0ZM3 0H5V5H5.200V8.500H2.800V5H3ZM5.900 0H8V8.500H5.700V5H5.900Z" fill="#f0f0f0"/></svg>
<svg style="left:3858px;top:262px;width:40px;height:40px;" viewBox="0 0 10 10"><circle cx="5" cy="5" r="4.600" fill="#e8e8e8"/><circle cx="5" cy="5" r="1.700" fill="none" stroke="#484848" stroke-width="0.800"/></svg>
<svg style="left:3940px;top:264px;width:40px;height:34px;" viewBox="0 0 10 8.5"><rect x="0" y="0" width="10" height="8.500" rx="0.800" fill="#e4e4e4"/><path d="M0.800 2.300H9.200M0.800 6.200H9.200" stroke="#6a6a6a" stroke-width="0.800"/></svg>
<svg style="left:4022px;top:264px;width:40px;height:36px;" viewBox="0 0 10 9"><rect x="0" y="0" width="10" height="6.300" rx="0.800" fill="#e4e4e4"/><path d="M2.500 8.500H7.500M5 6V8.500" stroke="#e4e4e4" stroke-width="1.200"/></svg>
<div style="left:3522px;top:319.2px;width:558px;height:46.8px;background:#1a1a1a;border-radius:8px;"></div>
<svg style="left:3538px;top:330px;width:36px;height:28px;" viewBox="0 0 9 7"><circle cx="2.800" cy="2.800" r="2.100" fill="none" stroke="#e0e0e0" stroke-width="1"/><path d="M4.300 4.300L6 6" stroke="#e0e0e0" stroke-width="1.200"/><path d="M5.800 3.800H8.600L7.200 5.600Z" fill="#e0e0e0"/></svg>
<svg style="left:4027.2px;top:331.2px;width:22.4px;height:22.4px;" viewBox="0 0 5.6 5.6"><path d="M0.400 0.400L5.200 5.200M5.200 0.400L0.400 5.200" stroke="#f0f0f0" stroke-width="1.100"/></svg>
<div style="left:3522px;top:380px;width:558px;height:46.8px;background:#555;border-radius:4px;"></div>
<div style="left:3540px;top:394.8px;width:16px;height:12px;background:#9a9a9a;"></div>
<span class="t" style="top:382.6px;font-size:28px;line-height:44px;color:#e0e0e0;font-weight:500;left:3574.8px;transform-origin:0 50%;transform:scaleX(0.862);">コレクション</span>
<div style="left:3522px;top:432px;width:558px;height:46.8px;background:#555;border-radius:4px;"></div>
<div style="left:3540px;top:446.8px;width:16px;height:12px;background:#9a9a9a;"></div>
<span class="t" style="top:434.6px;font-size:28px;line-height:44px;color:#e0e0e0;font-weight:500;left:3574.8px;transform-origin:0 50%;transform:scaleX(0.862);">ロケーション</span>
<div style="left:3522px;top:482.8px;width:558px;height:513.2px;background:#0e0e0e;"></div>
<div style="left:3522px;top:484.8px;width:546px;height:52px;background:#253340;"></div>
<div style="left:4068.8px;top:484px;width:10px;height:156px;background:#6a6a6a;border-radius:4px;"></div>
<svg style="left:3540.8px;top:498.4px;width:25.6px;height:25.6px;" viewBox="0 0 6.4 6.4"><circle cx="3.200" cy="3.200" r="2.600" fill="none" stroke="#d8d8d8" stroke-width="0.9"/></svg>
<span class="t" style="top:485.6px;font-size:32px;line-height:48px;color:#f0f0f0;left:3587.2px;transform-origin:0 50%;transform:scaleX(0.861);">All Device Locations</span>
<span class="t" style="top:490px;font-size:28px;line-height:44px;color:#6a6a6a;right:32px;transform-origin:100% 50%;transform:scaleX(0.880);">99+</span>
<svg style="left:3574.4px;top:543.6px;width:39.2px;height:39.2px;" viewBox="0 0 9.8 9.8"><circle cx="4.900" cy="4.900" r="4.900" fill="#e8283c"/><path d="M2.300 5.800C3 3.800 6.800 3.800 7.500 5.800" stroke="#f8c8cc" stroke-width="1" fill="none"/></svg>
<span class="t" style="top:539.2px;font-size:32px;line-height:48px;color:#f0f0f0;left:3627.2px;transform-origin:0 50%;transform:scaleX(0.937);">Bitwig</span>
<span class="t" style="top:543.6px;font-size:28px;line-height:44px;color:#6a6a6a;right:32px;transform-origin:100% 50%;transform:scaleX(0.880);">99+</span>
<svg style="left:3571.6px;top:594.8px;width:40.8px;height:35.6px;" viewBox="0 0 10.2 8.9"><rect x="0" y="0" width="10.200" height="8.900" fill="#c8d8a8"/><rect x="0.900" y="0.900" width="8.400" height="7.100" fill="#b2ca8e"/><ellipse cx="4.200" cy="4.500" rx="2.100" ry="1.700" fill="#b85028"/><path d="M7.300 2.200H8.900M7.300 4.500H8.900M7.300 6.800H8.900" stroke="#88a868" stroke-width="0.800"/></svg>
<span class="t" style="top:589.2px;font-size:32px;line-height:48px;color:#f0f0f0;left:3625.2px;transform-origin:0 50%;transform:scaleX(0.855);">VST 2 Plug-ins</span>
<span class="t" style="top:593.6px;font-size:28px;line-height:44px;color:#6a6a6a;right:34px;transform-origin:100% 50%;transform:scaleX(0.880);">41</span>
<svg style="left:3598.4px;top:647.6px;width:40.4px;height:32.8px;" viewBox="0 0 10.1 8.2"><path d="M0 0H3.400L4.200 1.100H10.100V8.200H0Z" fill="#e4e4e4"/><path d="M0 2H10.100" stroke="#c4c4c4" stroke-width="0.500"/></svg>
<span class="t" style="top:639.2px;font-size:32px;line-height:48px;color:#f0f0f0;left:3651.2px;transform-origin:0 50%;transform:scaleX(0.828);">KORG</span>
<span class="t" style="top:643.6px;font-size:28px;line-height:44px;color:#6a6a6a;right:34px;transform-origin:100% 50%;transform:scaleX(0.880);">41</span>
<svg style="left:3571.6px;top:696px;width:40.8px;height:35.6px;" viewBox="0 0 10.2 8.9"><rect x="0" y="0" width="10.200" height="8.900" fill="#c8d8a8"/><rect x="0.900" y="0.900" width="8.400" height="7.100" fill="#b2ca8e"/><ellipse cx="4.200" cy="4.500" rx="2.100" ry="1.700" fill="#b85028"/><path d="M7.300 2.200H8.900M7.300 4.500H8.900M7.300 6.800H8.900" stroke="#88a868" stroke-width="0.800"/></svg>
<span class="t" style="top:690.4px;font-size:32px;line-height:48px;color:#f0f0f0;left:3625.2px;transform-origin:0 50%;transform:scaleX(0.853);">VST 2 Plug-ins (32 bit)</span>
<span class="t" style="top:694.8px;font-size:28px;line-height:44px;color:#6a6a6a;right:34px;transform-origin:100% 50%;transform:scaleX(0.880);">6</span>
<svg style="left:3571.6px;top:747.2px;width:40.8px;height:35.6px;" viewBox="0 0 10.2 8.9"><rect x="0" y="0" width="10.200" height="8.900" fill="#c8d8a8"/><rect x="0.900" y="0.900" width="8.400" height="7.100" fill="#b2ca8e"/><ellipse cx="4.200" cy="4.500" rx="2.100" ry="1.700" fill="#b85028"/><path d="M7.300 2.200H8.900M7.300 4.500H8.900M7.300 6.800H8.900" stroke="#88a868" stroke-width="0.800"/></svg>
<span class="t" style="top:741.6px;font-size:32px;line-height:48px;color:#f0f0f0;left:3625.2px;transform-origin:0 50%;transform:scaleX(0.853);">VST 3 Plug-ins (32 bit)</span>
<span class="t" style="top:746px;font-size:28px;line-height:44px;color:#6a6a6a;right:34px;transform-origin:100% 50%;transform:scaleX(0.880);">39</span>
<svg style="left:3598.4px;top:800.8px;width:40.4px;height:32.8px;" viewBox="0 0 10.1 8.2"><path d="M0 0H3.400L4.200 1.100H10.100V8.200H0Z" fill="#e4e4e4"/><path d="M0 2H10.100" stroke="#c4c4c4" stroke-width="0.500"/></svg>
<span class="t" style="top:792.4px;font-size:32px;line-height:48px;color:#f0f0f0;left:3651.2px;transform-origin:0 50%;transform:scaleX(0.899);">iZotope</span>
<span class="t" style="top:796.8px;font-size:28px;line-height:44px;color:#6a6a6a;right:34px;transform-origin:100% 50%;transform:scaleX(0.880);">29</span>
<svg style="left:3571.6px;top:850px;width:40.8px;height:35.6px;" viewBox="0 0 10.2 8.9"><rect x="0" y="0" width="10.200" height="8.900" fill="#c8d8a8"/><rect x="0.900" y="0.900" width="8.400" height="7.100" fill="#b2ca8e"/><ellipse cx="4.200" cy="4.500" rx="2.100" ry="1.700" fill="#b85028"/><path d="M7.300 2.200H8.900M7.300 4.500H8.900M7.300 6.800H8.900" stroke="#88a868" stroke-width="0.800"/></svg>
<span class="t" style="top:844.4px;font-size:32px;line-height:48px;color:#f0f0f0;left:3625.2px;transform-origin:0 50%;transform:scaleX(0.837);">VSTPlugins</span>
<span class="t" style="top:848.8px;font-size:28px;line-height:44px;color:#6a6a6a;right:32px;transform-origin:100% 50%;transform:scaleX(0.880);">99+</span>
<svg style="left:3598.4px;top:903.6px;width:40.4px;height:32.8px;" viewBox="0 0 10.1 8.2"><path d="M0 0H3.400L4.200 1.100H10.100V8.200H0Z" fill="#e4e4e4"/><path d="M0 2H10.100" stroke="#c4c4c4" stroke-width="0.500"/></svg>
<span class="t" style="top:895.2px;font-size:32px;line-height:48px;color:#f0f0f0;left:3651.2px;transform-origin:0 50%;transform:scaleX(0.864);">Dymai Sound</span>
<span class="t" style="top:899.6px;font-size:28px;line-height:44px;color:#6a6a6a;right:34px;transform-origin:100% 50%;transform:scaleX(0.880);">1</span>
<svg style="left:3598.4px;top:954.8px;width:40.4px;height:32.8px;" viewBox="0 0 10.1 8.2"><path d="M0 0H3.400L4.200 1.100H10.100V8.200H0Z" fill="#e4e4e4"/><path d="M0 2H10.100" stroke="#c4c4c4" stroke-width="0.500"/></svg>
<span class="t" style="top:946.4px;font-size:32px;line-height:48px;color:#f0f0f0;left:3651.2px;transform-origin:0 50%;transform:scaleX(0.823);">EDIROL</span>
<span class="t" style="top:950.8px;font-size:28px;line-height:44px;color:#6a6a6a;right:34px;transform-origin:100% 50%;transform:scaleX(0.880);">1</span>
<svg style="left:3535.6px;top:608.4px;width:18.4px;height:17.6px;" viewBox="0 0 4.6 4.4"><path d="M0 0H4.600L2.300 4.400Z" fill="#c4c4c4"/></svg>
<svg style="left:3535.6px;top:760.8px;width:18.4px;height:17.6px;" viewBox="0 0 4.6 4.4"><path d="M0 0H4.600L2.300 4.400Z" fill="#c4c4c4"/></svg>
<svg style="left:3535.6px;top:863.6px;width:18.4px;height:17.6px;" viewBox="0 0 4.6 4.4"><path d="M0 0H4.600L2.300 4.400Z" fill="#c4c4c4"/></svg>
<svg style="left:3566px;top:658px;width:14.4px;height:16px;" viewBox="0 0 3.6 4"><path d="M0 0V4L3.600 2Z" fill="#5a5a5a"/></svg>
<div style="left:3522px;top:1006px;width:558px;height:46.4px;background:#555;border-radius:4px;"></div>
<div style="left:3540px;top:1020.8px;width:16px;height:12px;background:#9a9a9a;"></div>
<span class="t" style="top:1008.4px;font-size:28px;line-height:44px;color:#e0e0e0;font-weight:500;left:3574.8px;transform-origin:0 50%;transform:scaleX(0.857);">カテゴリー</span>
<div style="left:3522px;top:1061.2px;width:558px;height:960.8px;background:#0e0e0e;"></div>
<div style="left:4068.8px;top:1062px;width:10px;height:40px;background:#6a6a6a;border-radius:4px;"></div>
<div style="left:3522px;top:1061.2px;width:558px;height:960.8px;overflow:hidden;">
<svg style="left:12.4px;top:9.2px;width:42px;height:42px;" viewBox="0 0 10.5 10.5"><rect x="0.600" y="0.600" width="9.300" height="9.300" rx="1.400" fill="#120704" stroke="#c04c20" stroke-width="1.200"/><path d="M1.200 1.600V8.600L4.300 6.300L8.700 5.300V4.700L4.300 3.800Z" fill="#c04c20"/><path d="M5.400 8.600L7.400 7H10.300V10.200H7.400Z" fill="#f98511"/></svg>
<span class="t" style="top:4.4px;font-size:32px;line-height:48px;color:#f0f0f0;left:65.2px;transform-origin:0 50%;transform:scaleX(0.907);">#TAuto Filter (64-bit)</span>
<span class="t" style="top:5.2px;font-size:32px;line-height:48px;color:#6e5a20;left:-296.8px;width:1600px;text-align:center;transform-origin:50% 50%;transform:scaleX(0.950);">★</span>
<svg style="left:12.4px;top:60.44px;width:42px;height:42px;" viewBox="0 0 10.5 10.5"><rect x="0.600" y="0.600" width="9.300" height="9.300" rx="1.400" fill="#120704" stroke="#c04c20" stroke-width="1.200"/><path d="M1.200 1.600V8.600L4.300 6.300L8.700 5.300V4.700L4.300 3.800Z" fill="#c04c20"/><path d="M5.400 8.600L7.400 7H10.300V10.200H7.400Z" fill="#f98511"/></svg>
<span class="t" style="top:55.64px;font-size:32px;line-height:48px;color:#f0f0f0;left:65.2px;transform-origin:0 50%;transform:scaleX(0.907);">#TAuto Filter (64-bit)</span>
<span class="t" style="top:56.44px;font-size:32px;line-height:48px;color:#6e5a20;left:-296.8px;width:1600px;text-align:center;transform-origin:50% 50%;transform:scaleX(0.950);">★</span>
<svg style="left:12.4px;top:111.68px;width:42px;height:42px;" viewBox="0 0 10.5 10.5"><rect x="0.600" y="0.600" width="9.300" height="9.300" rx="1.400" fill="#120704" stroke="#c04c20" stroke-width="1.200"/><path d="M1.200 1.600V8.600L4.300 6.300L8.700 5.300V4.700L4.300 3.800Z" fill="#c04c20"/><path d="M5.400 8.600L7.400 7H10.300V10.200H7.400Z" fill="#f98511"/></svg>
<span class="t" style="top:106.88px;font-size:32px;line-height:48px;color:#f0f0f0;left:65.2px;transform-origin:0 50%;transform:scaleX(0.865);">#TBus Compressor (64-bit)</span>
<span class="t" style="top:107.68px;font-size:32px;line-height:48px;color:#6e5a20;left:-296.8px;width:1600px;text-align:center;transform-origin:50% 50%;transform:scaleX(0.950);">★</span>
<svg style="left:12.4px;top:162.92px;width:42px;height:42px;" viewBox="0 0 10.5 10.5"><rect x="0.600" y="0.600" width="9.300" height="9.300" rx="1.400" fill="#120704" stroke="#c04c20" stroke-width="1.200"/><path d="M1.200 1.600V8.600L4.300 6.300L8.700 5.300V4.700L4.300 3.800Z" fill="#c04c20"/><path d="M5.400 8.600L7.400 7H10.300V10.200H7.400Z" fill="#f98511"/></svg>
<span class="t" style="top:158.12px;font-size:32px;line-height:48px;color:#f0f0f0;left:65.2px;transform-origin:0 50%;transform:scaleX(0.865);">#TBus Compressor (64-bit)</span>
<span class="t" style="top:158.92px;font-size:32px;line-height:48px;color:#6e5a20;left:-296.8px;width:1600px;text-align:center;transform-origin:50% 50%;transform:scaleX(0.950);">★</span>
<svg style="left:12.4px;top:214.16px;width:42px;height:42px;" viewBox="0 0 10.5 10.5"><rect x="0.600" y="0.600" width="9.300" height="9.300" rx="1.400" fill="#120704" stroke="#c04c20" stroke-width="1.200"/><path d="M1.200 1.600V8.600L4.300 6.300L8.700 5.300V4.700L4.300 3.800Z" fill="#c04c20"/><path d="M5.400 8.600L7.400 7H10.300V10.200H7.400Z" fill="#f98511"/></svg>
<span class="t" style="top:209.36px;font-size:32px;line-height:48px;color:#f0f0f0;left:65.2px;transform-origin:0 50%;transform:scaleX(0.877);">#TChorus (64-bit)</span>
<span class="t" style="top:210.16px;font-size:32px;line-height:48px;color:#6e5a20;left:-296.8px;width:1600px;text-align:center;transform-origin:50% 50%;transform:scaleX(0.950);">★</span>
<svg style="left:12.4px;top:265.4px;width:42px;height:42px;" viewBox="0 0 10.5 10.5"><rect x="0.600" y="0.600" width="9.300" height="9.300" rx="1.400" fill="#120704" stroke="#c04c20" stroke-width="1.200"/><path d="M1.200 1.600V8.600L4.300 6.300L8.700 5.300V4.700L4.300 3.800Z" fill="#c04c20"/><path d="M5.400 8.600L7.400 7H10.300V10.200H7.400Z" fill="#f98511"/></svg>
<span class="t" style="top:260.6px;font-size:32px;line-height:48px;color:#f0f0f0;left:65.2px;transform-origin:0 50%;transform:scaleX(0.877);">#TChorus (64-bit)</span>
<span class="t" style="top:261.4px;font-size:32px;line-height:48px;color:#6e5a20;left:-296.8px;width:1600px;text-align:center;transform-origin:50% 50%;transform:scaleX(0.950);">★</span>
<svg style="left:12.4px;top:316.64px;width:42px;height:42px;" viewBox="0 0 10.5 10.5"><rect x="0.600" y="0.600" width="9.300" height="9.300" rx="1.400" fill="#120704" stroke="#c04c20" stroke-width="1.200"/><path d="M1.200 1.600V8.600L4.300 6.300L8.700 5.300V4.700L4.300 3.800Z" fill="#c04c20"/><path d="M5.400 8.600L7.400 7H10.300V10.200H7.400Z" fill="#f98511"/></svg>
<span class="t" style="top:311.84px;font-size:32px;line-height:48px;color:#f0f0f0;left:65.2px;transform-origin:0 50%;transform:scaleX(0.876);">#TCompressor (64-bit)</span>
<span class="t" style="top:312.64px;font-size:32px;line-height:48px;color:#6e5a20;left:-296.8px;width:1600px;text-align:center;transform-origin:50% 50%;transform:scaleX(0.950);">★</span>
<svg style="left:12.4px;top:367.88px;width:42px;height:42px;" viewBox="0 0 10.5 10.5"><rect x="0.600" y="0.600" width="9.300" height="9.300" rx="1.400" fill="#120704" stroke="#c04c20" stroke-width="1.200"/><path d="M1.200 1.600V8.600L4.300 6.300L8.700 5.300V4.700L4.300 3.800Z" fill="#c04c20"/><path d="M5.400 8.600L7.400 7H10.300V10.200H7.400Z" fill="#f98511"/></svg>
<span class="t" style="top:363.08px;font-size:32px;line-height:48px;color:#f0f0f0;left:65.2px;transform-origin:0 50%;transform:scaleX(0.876);">#TCompressor (64-bit)</span>
<span class="t" style="top:363.88px;font-size:32px;line-height:48px;color:#6e5a20;left:-296.8px;width:1600px;text-align:center;transform-origin:50% 50%;transform:scaleX(0.950);">★</span>
<svg style="left:12.4px;top:419.12px;width:42px;height:42px;" viewBox="0 0 10.5 10.5"><rect x="0.600" y="0.600" width="9.300" height="9.300" rx="1.400" fill="#120704" stroke="#c04c20" stroke-width="1.200"/><path d="M1.200 1.600V8.600L4.300 6.300L8.700 5.300V4.700L4.300 3.800Z" fill="#c04c20"/><path d="M5.400 8.600L7.400 7H10.300V10.200H7.400Z" fill="#f98511"/></svg>
<span class="t" style="top:414.32px;font-size:32px;line-height:48px;color:#f0f0f0;left:65.2px;transform-origin:0 50%;transform:scaleX(0.879);">#TCrossover (64-bit)</span>
<span class="t" style="top:415.12px;font-size:32px;line-height:48px;color:#6e5a20;left:-296.8px;width:1600px;text-align:center;transform-origin:50% 50%;transform:scaleX(0.950);">★</span>
<svg style="left:12.4px;top:470.36px;width:42px;height:42px;" viewBox="0 0 10.5 10.5"><rect x="0.600" y="0.600" width="9.300" height="9.300" rx="1.400" fill="#120704" stroke="#c04c20" stroke-width="1.200"/><path d="M1.200 1.600V8.600L4.300 6.300L8.700 5.300V4.700L4.300 3.800Z" fill="#c04c20"/><path d="M5.400 8.600L7.400 7H10.300V10.200H7.400Z" fill="#f98511"/></svg>
<span class="t" style="top:465.56px;font-size:32px;line-height:48px;color:#f0f0f0;left:65.2px;transform-origin:0 50%;transform:scaleX(0.879);">#TCrossover (64-bit)</span>
<span class="t" style="top:466.36px;font-size:32px;line-height:48px;color:#6e5a20;left:-296.8px;width:1600px;text-align:center;transform-origin:50% 50%;transform:scaleX(0.950);">★</span>
<svg style="left:12.4px;top:521.6px;width:42px;height:42px;" viewBox="0 0 10.5 10.5"><rect x="0.600" y="0.600" width="9.300" height="9.300" rx="1.400" fill="#120704" stroke="#c04c20" stroke-width="1.200"/><path d="M1.200 1.600V8.600L4.300 6.300L8.700 5.300V4.700L4.300 3.800Z" fill="#c04c20"/><path d="M5.400 8.600L7.400 7H10.300V10.200H7.400Z" fill="#f98511"/></svg>
<span class="t" style="top:516.8px;font-size:32px;line-height:48px;color:#f0f0f0;left:65.2px;transform-origin:0 50%;transform:scaleX(0.880);">#TCrusher (64-bit)</span>
<span class="t" style="top:517.6px;font-size:32px;line-height:48px;color:#6e5a20;left:-296.8px;width:1600px;text-align:center;transform-origin:50% 50%;transform:scaleX(0.950);">★</span>
<svg style="left:12.4px;top:572.84px;width:42px;height:42px;" viewBox="0 0 10.5 10.5"><rect x="0.600" y="0.600" width="9.300" height="9.300" rx="1.400" fill="#120704" stroke="#c04c20" stroke-width="1.200"/><path d="M1.200 1.600V8.600L4.300 6.300L8.700 5.300V4.700L4.300 3.800Z" fill="#c04c20"/><path d="M5.400 8.600L7.400 7H10.300V10.200H7.400Z" fill="#f98511"/></svg>
<span class="t" style="top:568.04px;font-size:32px;line-height:48px;color:#f0f0f0;left:65.2px;transform-origin:0 50%;transform:scaleX(0.880);">#TCrusher (64-bit)</span>
<span class="t" style="top:568.84px;font-size:32px;line-height:48px;color:#6e5a20;left:-296.8px;width:1600px;text-align:center;transform-origin:50% 50%;transform:scaleX(0.950);">★</span>
<svg style="left:12.4px;top:624.08px;width:42px;height:42px;" viewBox="0 0 10.5 10.5"><rect x="0.600" y="0.600" width="9.300" height="9.300" rx="1.400" fill="#120704" stroke="#c04c20" stroke-width="1.200"/><path d="M1.200 1.600V8.600L4.300 6.300L8.700 5.300V4.700L4.300 3.800Z" fill="#c04c20"/><path d="M5.400 8.600L7.400 7H10.300V10.200H7.400Z" fill="#f98511"/></svg>
<span class="t" style="top:619.28px;font-size:32px;line-height:48px;color:#f0f0f0;left:65.2px;transform-origin:0 50%;transform:scaleX(0.881);">#TDelay Studio (64-bit)</span>
<span class="t" style="top:620.08px;font-size:32px;line-height:48px;color:#6e5a20;left:-296.8px;width:1600px;text-align:center;transform-origin:50% 50%;transform:scaleX(0.950);">★</span>
<svg style="left:12.4px;top:675.32px;width:42px;height:42px;" viewBox="0 0 10.5 10.5"><rect x="0.600" y="0.600" width="9.300" height="9.300" rx="1.400" fill="#120704" stroke="#c04c20" stroke-width="1.200"/><path d="M1.200 1.600V8.600L4.300 6.300L8.700 5.300V4.700L4.300 3.800Z" fill="#c04c20"/><path d="M5.400 8.600L7.400 7H10.300V10.200H7.400Z" fill="#f98511"/></svg>
<span class="t" style="top:670.52px;font-size:32px;line-height:48px;color:#f0f0f0;left:65.2px;transform-origin:0 50%;transform:scaleX(0.881);">#TDelay Studio (64-bit)</span>
<span class="t" style="top:671.32px;font-size:32px;line-height:48px;color:#6e5a20;left:-296.8px;width:1600px;text-align:center;transform-origin:50% 50%;transform:scaleX(0.950);">★</span>
<svg style="left:12.4px;top:726.56px;width:42px;height:42px;" viewBox="0 0 10.5 10.5"><rect x="0.600" y="0.600" width="9.300" height="9.300" rx="1.400" fill="#120704" stroke="#c04c20" stroke-width="1.200"/><path d="M1.200 1.600V8.600L4.300 6.300L8.700 5.300V4.700L4.300 3.800Z" fill="#c04c20"/><path d="M5.400 8.600L7.400 7H10.300V10.200H7.400Z" fill="#f98511"/></svg>
<span class="t" style="top:721.76px;font-size:32px;line-height:48px;color:#f0f0f0;left:65.2px;transform-origin:0 50%;transform:scaleX(0.892);">#TDucker (64-bit)</span>
<span class="t" style="top:722.56px;font-size:32px;line-height:48px;color:#6e5a20;left:-296.8px;width:1600px;text-align:center;transform-origin:50% 50%;transform:scaleX(0.950);">★</span>
<svg style="left:12.4px;top:777.8px;width:42px;height:42px;" viewBox="0 0 10.5 10.5"><rect x="0.600" y="0.600" width="9.300" height="9.300" rx="1.400" fill="#120704" stroke="#c04c20" stroke-width="1.200"/><path d="M1.200 1.600V8.600L4.300 6.300L8.700 5.300V4.700L4.300 3.800Z" fill="#c04c20"/><path d="M5.400 8.600L7.400 7H10.300V10.200H7.400Z" fill="#f98511"/></svg>
<span class="t" style="top:773px;font-size:32px;line-height:48px;color:#f0f0f0;left:65.2px;transform-origin:0 50%;transform:scaleX(0.892);">#TDucker (64-bit)</span>
<span class="t" style="top:773.8px;font-size:32px;line-height:48px;color:#6e5a20;left:-296.8px;width:1600px;text-align:center;transform-origin:50% 50%;transform:scaleX(0.950);">★</span>
<svg style="left:12.4px;top:829.04px;width:42px;height:42px;" viewBox="0 0 10.5 10.5"><rect x="0.600" y="0.600" width="9.300" height="9.300" rx="1.400" fill="#120704" stroke="#c04c20" stroke-width="1.200"/><path d="M1.200 1.600V8.600L4.300 6.300L8.700 5.300V4.700L4.300 3.800Z" fill="#c04c20"/><path d="M5.400 8.600L7.400 7H10.300V10.200H7.400Z" fill="#f98511"/></svg>
<span class="t" style="top:824.24px;font-size:32px;line-height:48px;color:#f0f0f0;left:65.2px;transform-origin:0 50%;transform:scaleX(0.868);">#TEqualiser (64-bit)</span>
<span class="t" style="top:825.04px;font-size:32px;line-height:48px;color:#6e5a20;left:-296.8px;width:1600px;text-align:center;transform-origin:50% 50%;transform:scaleX(0.950);">★</span>
<svg style="left:12.4px;top:880.28px;width:42px;height:42px;" viewBox="0 0 10.5 10.5"><rect x="0.600" y="0.600" width="9.300" height="9.300" rx="1.400" fill="#120704" stroke="#c04c20" stroke-width="1.200"/><path d="M1.200 1.600V8.600L4.300 6.300L8.700 5.300V4.700L4.300 3.800Z" fill="#c04c20"/><path d="M5.400 8.600L7.400 7H10.300V10.200H7.400Z" fill="#f98511"/></svg>
<span class="t" style="top:875.48px;font-size:32px;line-height:48px;color:#f0f0f0;left:65.2px;transform-origin:0 50%;transform:scaleX(0.868);">#TEqualiser (64-bit)</span>
<span class="t" style="top:876.28px;font-size:32px;line-height:48px;color:#6e5a20;left:-296.8px;width:1600px;text-align:center;transform-origin:50% 50%;transform:scaleX(0.950);">★</span>
<svg style="left:12.4px;top:931.52px;width:42px;height:42px;" viewBox="0 0 10.5 10.5"><rect x="0.600" y="0.600" width="9.300" height="9.300" rx="1.400" fill="#120704" stroke="#c04c20" stroke-width="1.200"/><path d="M1.200 1.600V8.600L4.300 6.300L8.700 5.300V4.700L4.300 3.800Z" fill="#c04c20"/><path d="M5.400 8.600L7.400 7H10.300V10.200H7.400Z" fill="#f98511"/></svg>
<span class="t" style="top:926.72px;font-size:32px;line-height:48px;color:#f0f0f0;left:65.2px;transform-origin:0 50%;transform:scaleX(0.875);">#TFlanger (64-bit)</span>
<span class="t" style="top:927.52px;font-size:32px;line-height:48px;color:#6e5a20;left:-296.8px;width:1600px;text-align:center;transform-origin:50% 50%;transform:scaleX(0.950);">★</span>
</div>
<div style="left:3522px;top:2029.2px;width:558px;height:49.6px;background:#323232;border-radius:8px;box-shadow:inset 0 0 0 2.8px #585858;"></div>
<span class="t" style="top:2032.6px;font-size:30px;line-height:46px;color:#e6e6e6;left:3538px;transform-origin:0 50%;transform:scaleX(0.919);">Select a file to see its metadata here</span>
<div style="left:434.4px;top:1456px;width:3072px;height:624px;background:#0c0c0c;border-radius:8px;box-shadow:0 0 0 2.4px #454545;"></div>
<div style="left:436.8px;top:1458px;width:12px;height:620px;background:#1450f5;"></div>
<div style="left:516px;top:2069.2px;width:1964px;height:10.8px;background:#5c5c5c;"></div>
<div style="left:2480px;top:2069.2px;width:1024px;height:10.8px;background:#2a2a2a;"></div>
<span class="t" style="left:-116px;top:1746.2px;width:1200px;text-align:center;font-size:30px;line-height:46px;color:#f4f4f4;font-weight:700;transform:rotate(-90deg) scaleX(0.893);transform-origin:50% 50%;">ODDS AND EVENS RISE</span>
<span class="t" style="top:1741.2px;font-size:40px;line-height:56px;color:#9a9a9a;left:-256px;width:1600px;text-align:center;transform-origin:50% 50%;transform:scaleX(1.000);">+</span>
<div style="left:534px;top:1956px;width:10px;height:76px;background:linear-gradient(#e0d040,#78b838 30%,#4e962c);"></div>
<div style="left:534px;top:1945.2px;width:10px;height:3.6px;background:#e08818;"></div>
<div style="left:546.8px;top:1956px;width:10px;height:76px;background:linear-gradient(#e0d040,#78b838 30%,#4e962c);"></div>
<div style="left:546.8px;top:1945.2px;width:10px;height:3.6px;background:#e08818;"></div>
<div style="left:534px;top:1938.8px;width:8px;height:3.6px;background:#c86010;"></div>
<svg width="0" height="0" style="left:0;top:0"><defs><linearGradient id="kg" x1="0" y1="0" x2="0" y2="1"><stop offset="0" stop-color="#9a9a9a"/><stop offset="1" stop-color="#5a5a5a"/></linearGradient><linearGradient id="kw" x1="0" y1="0" x2="0" y2="1"><stop offset="0" stop-color="#f4f4f4"/><stop offset="1" stop-color="#b0b0b0"/></linearGradient></defs></svg>
<div style="left:572px;top:1489.2px;width:1948px;height:554.8px;background:#4a4a4a;border-radius:12px;"></div>
<svg style="left:592px;top:1508px;width:28px;height:30px;" viewBox="0 0 8 8.500"><path d="M2.200 1.800A3.400 3.400 0 1 0 5.800 1.800" fill="none" stroke="#f98511" stroke-width="1.100"/><path d="M4 0V4" stroke="#f98511" stroke-width="1.100"/></svg>
<svg style="left:590.8px;top:1565.2px;width:30px;height:24px;" viewBox="0 0 7.5 6"><path d="M0 0H3L3.700 1.100H7.500V6H0Z" fill="#a8a8a8"/><path d="M0 1.800H7.500" stroke="#4a4a4a" stroke-width="0.500"/></svg>
<span class="t" style="left:6px;top:1748.8px;width:1200px;text-align:center;font-size:28px;line-height:44px;color:#e6e6e6;transform:rotate(-90deg) scaleX(0.912);transform-origin:50% 50%;">HARMONIC SPLIT</span>
<svg style="left:592px;top:1968px;width:28px;height:16px;" viewBox="0 0 7 4"><rect x="0.0" y="0.0" width="1.600" height="1.400" fill="#f98511"/><rect x="0.0" y="2.3" width="1.600" height="1.400" fill="#f98511"/><rect x="2.4" y="0.0" width="1.600" height="1.400" fill="#f98511"/><rect x="2.4" y="2.3" width="1.600" height="1.400" fill="#f98511"/><rect x="4.8" y="0.0" width="1.600" height="1.400" fill="#f98511"/><rect x="4.8" y="2.3" width="1.600" height="1.400" fill="#f98511"/></svg>
<svg style="left:592px;top:2013.2px;width:28px;height:14px;" viewBox="0 0 7 3.5"><circle cx="1.300" cy="1.750" r="1.200" fill="#8a8a8a"/><path d="M2 1.750H5" stroke="#8a8a8a" stroke-width="0.800"/><path d="M4.500 0.300L7 1.750L4.500 3.200Z" fill="#8a8a8a"/></svg>
<div style="left:649.2px;top:1497.6px;width:566px;height:51.6px;background:#383838;border-radius:8px;"></div>
<svg style="left:664px;top:1516px;width:28px;height:16px;" viewBox="0 0 7 4"><rect x="0.0" y="0.0" width="1.700" height="1.500" fill="#e8e8e8"/><rect x="0.0" y="2.4" width="1.700" height="1.500" fill="#e8e8e8"/><rect x="2.5" y="0.0" width="1.700" height="1.500" fill="#e8e8e8"/><rect x="2.5" y="2.4" width="1.700" height="1.500" fill="#e8e8e8"/><rect x="5.0" y="0.0" width="1.700" height="1.500" fill="#e8e8e8"/><rect x="5.0" y="2.4" width="1.700" height="1.500" fill="#e8e8e8"/></svg>
<span class="t" style="top:1500.8px;font-size:32px;line-height:48px;color:#f0f0f0;font-weight:700;left:704px;transform-origin:0 50%;transform:scaleX(0.864);">Perform</span>
<span class="t" style="top:1500.8px;font-size:32px;line-height:48px;color:#8a8a8a;left:816px;transform-origin:0 50%;transform:scaleX(0.820);">(preset page)</span>
<svg style="left:1070px;top:1510px;width:28px;height:28px;" viewBox="0 0 7 7"><path d="M6.500 6.500L3 3" stroke="#e8e8e8" stroke-width="1.400"/><circle cx="2.200" cy="2.200" r="1.800" fill="#e8e8e8"/><rect x="0" y="0" width="1.800" height="1.800" fill="#383838" transform="rotate(45 1 1)"/></svg>
<div style="left:1113.2px;top:1502px;width:47.6px;height:44px;background:#6e6e6e;border-radius:6px 0 0 6px;"></div>
<svg style="left:1128.8px;top:1516.8px;width:16px;height:14px;" viewBox="0 0 4 3.5"><path d="M0 3.500H4L2 0Z" fill="#f0f0f0"/></svg>
<div style="left:1162px;top:1502px;width:46.8px;height:44px;background:#6e6e6e;border-radius:0 6px 6px 0;"></div>
<svg style="left:1177.6px;top:1517.6px;width:16px;height:14px;" viewBox="0 0 4 3.5"><path d="M0 0H4L2 3.500Z" fill="#f0f0f0"/></svg>
<div style="left:649.2px;top:1557.6px;width:135.2px;height:226.4px;background:#454545;border-radius:8px;box-shadow:inset 0 0 0 2px #404040;"></div>
<div style="left:649.2px;top:1784px;width:135.2px;height:10.4px;background:#e8283c;border-radius:4px;"></div>
<div style="left:649.2px;top:1804px;width:135.2px;height:226.8px;background:#454545;border-radius:8px;box-shadow:inset 0 0 0 2px #404040;"></div>
<div style="left:649.2px;top:2030.8px;width:135.2px;height:10.4px;background:#40c080;border-radius:4px;"></div>
<span class="t" style="top:1728.4px;font-size:32px;line-height:48px;color:#ececec;left:-84px;width:1600px;text-align:center;transform-origin:50% 50%;transform:scaleX(0.903);">Nons Filt</span>
<svg style="left:648px;top:1603.2px;width:136px;height:136px;" viewBox="0 0 34 34"><path d="M7.52 26.48A13.4 13.4 0 1 1 26.48 26.48" fill="none" stroke="#333" stroke-width="1.4"/><path d="M7.52 26.48A13.4 13.4 0 0 1 8.03 7.04" fill="none" stroke="#f98511" stroke-width="1.4"/><circle cx="17" cy="17" r="9.8" fill="url(#kg)"/><path d="M14.70 14.45L10.97 10.30" stroke="#f4f4f4" stroke-width="1.67"/><circle cx="28.52" cy="6.63" r="2.100" fill="#0c2c48" stroke="#3a9be0" stroke-width="1.200"/></svg>
<span class="t" style="top:1976px;font-size:32px;line-height:48px;color:#ececec;left:-84px;width:1600px;text-align:center;transform-origin:50% 50%;transform:scaleX(0.870);">Odds Del</span>
<svg style="left:648px;top:1848px;width:136px;height:136px;" viewBox="0 0 34 34"><path d="M7.52 26.48A13.4 13.4 0 1 1 26.48 26.48" fill="none" stroke="#333" stroke-width="1.4"/><path d="M7.52 26.48A13.4 13.4 0 0 1 4.58 22.02" fill="none" stroke="#f98511" stroke-width="1.4"/><circle cx="17" cy="17" r="9.8" fill="url(#kg)"/><path d="M13.82 18.28L8.64 20.38" stroke="#f4f4f4" stroke-width="1.67"/><circle cx="28.52" cy="6.63" r="2.100" fill="#0c2c48" stroke="#3a9be0" stroke-width="1.200"/></svg>
<div style="left:792px;top:1557.6px;width:135.2px;height:226.4px;background:#454545;border-radius:8px;box-shadow:inset 0 0 0 2px #404040;"></div>
<div style="left:792px;top:1784px;width:135.2px;height:10.4px;background:#f98511;border-radius:4px;"></div>
<div style="left:792px;top:1804px;width:135.2px;height:226.8px;background:#454545;border-radius:8px;box-shadow:inset 0 0 0 2px #404040;"></div>
<div style="left:792px;top:2030.8px;width:135.2px;height:10.4px;background:#3a9be0;border-radius:4px;"></div>
<span class="t" style="top:1728.4px;font-size:32px;line-height:48px;color:#ececec;left:57.2px;width:1600px;text-align:center;transform-origin:50% 50%;transform:scaleX(0.848);">Thresh.</span>
<svg style="left:789.2px;top:1603.2px;width:136px;height:136px;" viewBox="0 0 34 34"><path d="M7.52 26.48A13.4 13.4 0 1 1 26.48 26.48" fill="none" stroke="#333" stroke-width="1.4"/><path d="M7.52 26.48A13.4 13.4 0 1 1 27.56 8.75" fill="none" stroke="#f98511" stroke-width="1.4"/><circle cx="17" cy="17" r="9.8" fill="url(#kg)"/><path d="M19.70 14.89L24.10 11.45" stroke="#f4f4f4" stroke-width="1.67"/><circle cx="28.52" cy="6.63" r="2.100" fill="#0c2c48" stroke="#3a9be0" stroke-width="1.200"/></svg>
<span class="t" style="top:1976px;font-size:32px;line-height:48px;color:#ececec;left:57.2px;width:1600px;text-align:center;transform-origin:50% 50%;transform:scaleX(0.864);">Evens Del</span>
<svg style="left:789.2px;top:1848px;width:136px;height:136px;" viewBox="0 0 34 34"><path d="M7.52 26.48A13.4 13.4 0 1 1 26.48 26.48" fill="none" stroke="#333" stroke-width="1.4"/><path d="M7.52 26.48A13.4 13.4 0 0 1 3.80 14.67" fill="none" stroke="#f98511" stroke-width="1.4"/><circle cx="17" cy="17" r="9.8" fill="url(#kg)"/><path d="M13.62 16.40L8.12 15.43" stroke="#f4f4f4" stroke-width="1.67"/><circle cx="28.52" cy="6.63" r="2.100" fill="#0c2c48" stroke="#3a9be0" stroke-width="1.200"/></svg>
<div style="left:934.8px;top:1557.6px;width:135.2px;height:226.4px;background:#454545;border-radius:8px;box-shadow:inset 0 0 0 2px #404040;"></div>
<div style="left:934.8px;top:1784px;width:135.2px;height:10.4px;background:#f0e020;border-radius:4px;"></div>
<div style="left:934.8px;top:1804px;width:135.2px;height:226.8px;background:#454545;border-radius:8px;box-shadow:inset 0 0 0 2px #404040;"></div>
<div style="left:934.8px;top:2030.8px;width:135.2px;height:10.4px;background:#b050e0;border-radius:4px;"></div>
<span class="t" style="top:1728.4px;font-size:32px;line-height:48px;color:#ececec;left:201.2px;width:1600px;text-align:center;transform-origin:50% 50%;transform:scaleX(0.803);">LFO</span>
<svg style="left:933.2px;top:1603.2px;width:136px;height:136px;" viewBox="0 0 34 34"><path d="M7.52 26.48A13.4 13.4 0 1 1 26.48 26.48" fill="none" stroke="#333" stroke-width="1.4"/><path d="M7.52 26.48A13.4 13.4 0 1 1 25.97 26.96" fill="none" stroke="#f98511" stroke-width="1.4"/><circle cx="17" cy="17" r="9.8" fill="url(#kg)"/><path d="M19.30 19.55L23.03 23.70" stroke="#f4f4f4" stroke-width="1.67"/><circle cx="28.52" cy="6.63" r="2.100" fill="#0c2c48" stroke="#3a9be0" stroke-width="1.200"/></svg>
<span class="t" style="top:1976px;font-size:32px;line-height:48px;color:#ececec;left:201.2px;width:1600px;text-align:center;transform-origin:50% 50%;transform:scaleX(0.865);">O+E pan</span>
<svg style="left:933.2px;top:1848px;width:136px;height:136px;" viewBox="0 0 34 34"><path d="M7.52 26.48A13.4 13.4 0 1 1 26.48 26.48" fill="none" stroke="#333" stroke-width="1.4"/><path d="M7.52 26.48A13.4 13.4 0 0 1 13.99 3.94" fill="none" stroke="#f98511" stroke-width="1.4"/><circle cx="17" cy="17" r="9.8" fill="url(#kg)"/><path d="M16.23 13.66L14.97 8.22" stroke="#f4f4f4" stroke-width="1.67"/><circle cx="28.52" cy="6.63" r="2.100" fill="#0c2c48" stroke="#3a9be0" stroke-width="1.200"/></svg>
<div style="left:1077.6px;top:1557.6px;width:135.2px;height:226.4px;background:#454545;border-radius:8px;box-shadow:inset 0 0 0 2px #404040;"></div>
<div style="left:1077.6px;top:1784px;width:135.2px;height:10.4px;background:#60c030;border-radius:4px;"></div>
<div style="left:1077.6px;top:1804px;width:135.2px;height:226.8px;background:#454545;border-radius:8px;box-shadow:inset 0 0 0 2px #404040;"></div>
<div style="left:1077.6px;top:2030.8px;width:135.2px;height:10.4px;background:#f0409a;border-radius:4px;"></div>
<span class="t" style="top:1728.4px;font-size:32px;line-height:48px;color:#ececec;left:345.2px;width:1600px;text-align:center;transform-origin:50% 50%;transform:scaleX(0.861);">Timebase</span>
<span class="t" style="top:1976px;font-size:32px;line-height:48px;color:#ececec;left:345.2px;width:1600px;text-align:center;transform-origin:50% 50%;transform:scaleX(0.884);">Mix</span>
<svg style="left:1077.2px;top:1848px;width:136px;height:136px;" viewBox="0 0 34 34"><path d="M7.52 26.48A13.4 13.4 0 1 1 26.48 26.48" fill="none" stroke="#333" stroke-width="1.4"/><path d="M7.52 26.48A13.4 13.4 0 1 1 26.48 26.48" fill="none" stroke="#f98511" stroke-width="1.4"/><circle cx="17" cy="17" r="9.8" fill="url(#kg)"/><path d="M19.43 19.43L23.38 23.38" stroke="#f4f4f4" stroke-width="1.67"/></svg>
<div style="left:1088px;top:1645.6px;width:115.2px;height:52.8px;background:#5c5c5c;border-radius:8px;"></div>
<span class="t" style="top:1648.8px;font-size:32px;line-height:48px;color:#e8e8e8;left:1102px;transform-origin:0 50%;transform:scaleX(1.034);">8/1</span>
<svg style="left:1182px;top:1668px;width:12.8px;height:9.2px;" viewBox="0 0 3.2 2.3"><path d="M0 0H3.200L1.600 2.300Z" fill="#ddd"/></svg>
<svg style="left:980px;top:1821.2px;width:46px;height:16px;" viewBox="0 0 11.5 4"><circle cx="2" cy="2" r="1.900" fill="#58c8e8"/><path d="M3 2H9" stroke="#58c8e8" stroke-width="1"/><path d="M8 0.200L11.300 2L8 3.800Z" fill="#58c8e8"/></svg>
<div style="left:1235.2px;top:1492.8px;width:664px;height:550px;background:#1c1c1c;border-radius:8px;box-shadow:inset 0 0 0 2.8px #4c4c4c;"></div>
<span class="t" style="top:1507.4px;font-size:30px;line-height:46px;color:#c8c8c8;left:1258.8px;transform-origin:0 50%;transform:scaleX(0.945);">Low</span>
<span class="t" style="top:1507.4px;font-size:30px;line-height:46px;color:#b060e8;left:1358.4px;transform-origin:0 50%;transform:scaleX(0.909);">70.7 Hz</span>
<span class="t" style="top:1507.4px;font-size:30px;line-height:46px;color:#c8c8c8;left:1679.2px;transform-origin:0 50%;transform:scaleX(0.908);">High</span>
<span class="t" style="top:1507.4px;font-size:30px;line-height:46px;color:#b060e8;left:1761.2px;transform-origin:0 50%;transform:scaleX(0.946);">3.59 kHz</span>
<span class="t" style="top:1987px;font-size:30px;line-height:46px;color:#c8c8c8;left:1261.2px;transform-origin:0 50%;transform:scaleX(0.875);">Tilt</span>
<span class="t" style="top:1987px;font-size:30px;line-height:46px;color:#b060e8;left:1358.4px;transform-origin:0 50%;transform:scaleX(0.902);">+0.6 dB</span>
<span class="t" style="top:1987px;font-size:30px;line-height:46px;color:#c8c8c8;left:1587.6px;transform-origin:0 50%;transform:scaleX(0.929);">Threshold</span>
<span class="t" style="top:1987px;font-size:30px;line-height:46px;color:#b060e8;left:1767.2px;transform-origin:0 50%;transform:scaleX(0.935);">-39.0 dB</span>
<svg style="left:1248px;top:1680px;width:648px;height:304px;" viewBox="0 0 162 76"><rect x="2.7" y="30.0" width="0.9" height="44.5" fill="#666"/><rect x="7.4" y="66.0" width="0.9" height="8.5" fill="#555"/><rect x="12.0" y="56.0" width="0.9" height="18.5" fill="#666"/><rect x="18.5" y="31.0" width="0.9" height="43.5" fill="#777"/><rect x="23.3" y="16.0" width="0.9" height="58.5" fill="#666"/><rect x="27.3" y="10.0" width="0.9" height="64.5" fill="#777"/><rect x="31.3" y="14.0" width="0.9" height="60.5" fill="#666"/><rect x="34.3" y="26.0" width="0.9" height="48.5" fill="#777"/><rect x="39.0" y="28.0" width="0.9" height="46.5" fill="#b86a28"/><rect x="41.5" y="10.0" width="0.9" height="64.5" fill="#e08838"/><rect x="44.3" y="8.0" width="0.9" height="66.5" fill="#e89040"/><rect x="46.3" y="17.0" width="0.9" height="57.5" fill="#d07830"/><rect x="49.0" y="27.0" width="0.9" height="47.5" fill="#777"/><rect x="51.5" y="32.0" width="0.9" height="42.5" fill="#666"/><rect x="53.5" y="31.7" width="0.9" height="42.8" fill="#28c8d0"/><rect x="54.5" y="27.4" width="0.7" height="47.1" fill="#e8903c"/><rect x="55.3" y="21.1" width="1.6" height="53.4" fill="#e8883a"/><rect x="57.2" y="21.5" width="1.2" height="53.0" fill="#8a8a8a"/><rect x="59.1" y="16.2" width="0.7" height="58.3" fill="#28c8d0"/><rect x="60.5" y="9.9" width="0.9" height="64.6" fill="#e8883a"/><rect x="61.5" y="10.3" width="0.9" height="64.2" fill="#c87838"/><rect x="62.5" y="12.9" width="1.2" height="61.6" fill="#e8883a"/><rect x="64.2" y="13.7" width="0.9" height="60.8" fill="#8a8a8a"/><rect x="65.2" y="8.3" width="0.9" height="66.2" fill="#e8883a"/><rect x="66.4" y="14.2" width="1.2" height="60.3" fill="#28c8d0"/><rect x="68.1" y="9.8" width="0.7" height="64.7" fill="#28c8d0"/><rect x="69.1" y="9.6" width="1.6" height="64.9" fill="#8a8a8a"/><rect x="70.8" y="12.7" width="0.9" height="61.8" fill="#28c8d0"/><rect x="72.2" y="10.2" width="1.2" height="64.3" fill="#28c8d0"/><rect x="73.7" y="14.1" width="1.6" height="60.4" fill="#e8903c"/><rect x="76.0" y="11.6" width="0.9" height="62.9" fill="#28c8d0"/><rect x="77.0" y="5.0" width="1.2" height="69.5" fill="#28c8d0"/><rect x="78.9" y="7.1" width="0.7" height="67.4" fill="#e8883a"/><rect x="80.1" y="14.9" width="0.9" height="59.6" fill="#28c8d0"/><rect x="81.1" y="16.3" width="0.9" height="58.2" fill="#28c8d0"/><rect x="82.1" y="15.8" width="1.6" height="58.7" fill="#28c8d0"/><rect x="84.0" y="13.7" width="1.6" height="60.8" fill="#e8883a"/><rect x="86.3" y="11.3" width="0.9" height="63.2" fill="#8a8a8a"/><rect x="87.3" y="13.3" width="0.7" height="61.2" fill="#e8883a"/><rect x="88.7" y="18.1" width="1.6" height="56.4" fill="#28c8d0"/><rect x="90.6" y="17.9" width="0.9" height="56.6" fill="#c87838"/><rect x="92.2" y="20.9" width="0.9" height="53.6" fill="#c87838"/><rect x="93.8" y="21.9" width="1.2" height="52.6" fill="#777"/><rect x="95.1" y="17.5" width="1.6" height="57.0" fill="#8a8a8a"/><rect x="97.0" y="16.6" width="0.7" height="57.9" fill="#8a8a8a"/><rect x="97.8" y="23.2" width="0.7" height="51.3" fill="#8a8a8a"/><rect x="99.0" y="22.2" width="0.9" height="52.3" fill="#777"/><rect x="100.2" y="23.5" width="0.9" height="51.0" fill="#e8883a"/><rect x="101.2" y="22.7" width="1.2" height="51.8" fill="#777"/><rect x="102.5" y="22.8" width="0.7" height="51.7" fill="#e8883a"/><rect x="103.9" y="23.3" width="0.7" height="51.2" fill="#8a8a8a"/><rect x="104.9" y="19.5" width="1.2" height="55.0" fill="#28c8d0"/><rect x="106.6" y="21.5" width="0.7" height="53.0" fill="#777"/><rect x="107.4" y="18.7" width="0.7" height="55.8" fill="#e8883a"/><rect x="108.4" y="19.5" width="0.9" height="55.0" fill="#e8903c"/><rect x="109.4" y="22.7" width="1.2" height="51.8" fill="#c87838"/><rect x="111.3" y="23.3" width="1.6" height="51.2" fill="#777"/><rect x="113.2" y="19.9" width="0.7" height="54.6" fill="#e8883a"/><rect x="114.4" y="19.0" width="1.6" height="55.5" fill="#28c8d0"/><rect x="116.1" y="26.9" width="1.6" height="47.6" fill="#e8883a"/><rect x="118.0" y="21.5" width="1.6" height="53.0" fill="#8a8a8a"/><rect x="119.7" y="23.1" width="1.6" height="51.4" fill="#28c8d0"/><rect x="121.8" y="20.3" width="0.9" height="54.2" fill="#c87838"/><rect x="123.4" y="19.9" width="1.2" height="54.6" fill="#28c8d0"/><rect x="124.7" y="19.1" width="1.6" height="55.4" fill="#e8883a"/><rect x="126.4" y="22.8" width="0.9" height="51.7" fill="#28c8d0"/><rect x="127.4" y="25.3" width="0.9" height="49.2" fill="#777"/><rect x="128.8" y="23.4" width="1.6" height="51.1" fill="#e8883a"/><rect x="130.9" y="32.8" width="0.9" height="41.7" fill="#e8883a"/><rect x="132.1" y="21.2" width="0.9" height="53.3" fill="#8a8a8a"/><rect x="133.5" y="22.9" width="0.7" height="51.6" fill="#e8883a"/><rect x="134.7" y="19.7" width="0.9" height="54.8" fill="#e8883a"/><rect x="136.3" y="23.3" width="0.7" height="51.2" fill="#e8883a"/><rect x="137.3" y="23.3" width="1.6" height="51.2" fill="#28c8d0"/><rect x="139.0" y="21.7" width="0.7" height="52.8" fill="#e8883a"/><rect x="140.0" y="24.3" width="1.6" height="50.2" fill="#e8903c"/><rect x="141.9" y="26.2" width="0.9" height="48.3" fill="#28c8d0"/><rect x="142.9" y="21.0" width="1.2" height="53.5" fill="#e8883a"/><rect x="144.2" y="26.2" width="0.9" height="48.3" fill="#e8883a"/><rect x="145.4" y="21.4" width="1.2" height="53.1" fill="#e8883a"/><rect x="146.7" y="26.6" width="1.6" height="47.9" fill="#e8903c"/><rect x="148.8" y="34.3" width="0.9" height="40.2" fill="#e8883a"/><rect x="150.4" y="22.4" width="1.2" height="52.1" fill="#e8883a"/><rect x="151.9" y="21.9" width="0.7" height="52.6" fill="#8a8a8a"/><rect x="152.7" y="28.7" width="1.6" height="45.8" fill="#28c8d0"/><rect x="154.4" y="32.2" width="0.9" height="42.3" fill="#e8883a"/><rect x="155.8" y="35.3" width="1.2" height="39.2" fill="#28c8d0"/><rect x="157.5" y="39.3" width="0.9" height="35.2" fill="#e8883a"/><rect x="158.9" y="44.0" width="0.9" height="30.5" fill="#777"/></svg>
<div style="left:1248px;top:1693.6px;width:642px;height:2.8px;background:#9a9a9a;"></div>
<div style="left:1248px;top:1705.2px;width:642px;height:6px;background:#a050e0;"></div>
<div style="left:1364.8px;top:1588px;width:3.6px;height:390px;background:#8848c0;"></div>
<div style="left:1364.4px;top:1560px;width:32.8px;height:30.4px;background:#b060e8;"></div>
<span class="t" style="top:1554.6px;font-size:26px;line-height:42px;color:#fff;font-weight:700;left:580.8px;width:1600px;text-align:center;transform-origin:50% 50%;transform:scaleX(0.950);">L</span>
<div style="left:1722px;top:1588px;width:3.6px;height:390px;background:#8848c0;"></div>
<div style="left:1693.2px;top:1560px;width:32px;height:30.4px;background:#b060e8;"></div>
<span class="t" style="top:1554.6px;font-size:26px;line-height:42px;color:#fff;font-weight:700;left:909.2px;width:1600px;text-align:center;transform-origin:50% 50%;transform:scaleX(0.950);">H</span>
<div style="left:1419.6px;top:1560px;width:2.8px;height:136px;background:#b8b8b8;"></div>
<div style="left:1412.8px;top:1686.8px;width:16px;height:16px;background:#fff;border-radius:8px;"></div>
<svg style="left:1865.2px;top:1991.2px;width:20px;height:20px;" viewBox="0 0 5 5"><circle cx="2.500" cy="2.500" r="1.800" fill="#0c2c48" stroke="#3a9be0" stroke-width="1.100"/></svg>
<div style="left:1904.4px;top:1496px;width:420.8px;height:130.8px;background:#464646;border-radius:8px;box-shadow:inset 0 0 0 2px #3c3c3c;"></div>
<span class="t" style="top:1538.8px;font-size:32px;line-height:48px;color:#c8c8c8;left:1130.8px;width:1600px;text-align:center;transform-origin:50% 50%;transform:scaleX(0.950);">S</span>
<svg style="left:1960px;top:1514px;width:88px;height:88px;" viewBox="0 0 22 22"><path d="M4.49 17.51A9.2 9.2 0 1 1 17.51 17.51" fill="none" stroke="#333" stroke-width="1.3"/><path d="M4.49 17.51A9.2 9.2 0 0 1 14.89 2.66" fill="none" stroke="#f98511" stroke-width="1.3"/><circle cx="11" cy="11" r="6.6" fill="url(#kw)"/><path d="M11.98 8.91L13.57 5.50" stroke="#222" stroke-width="1.12"/><circle cx="19.40" cy="3.44" r="2.100" fill="#0c2c48" stroke="#3a9be0" stroke-width="1.200"/></svg>
<svg style="left:2050.8px;top:1514px;width:88px;height:88px;" viewBox="0 0 22 22"><path d="M4.92 17.08A8.6 8.6 0 1 1 17.08 17.08" fill="none" stroke="#333" stroke-width="1.2"/><path d="M3.55 6.70A8.6 8.6 0 0 1 11.00 2.40" fill="none" stroke="#f98511" stroke-width="1.2"/><circle cx="11" cy="11" r="6" fill="url(#kg)"/><path d="M11.00 8.90L11.00 5.48" stroke="#f4f4f4" stroke-width="1.10"/></svg>
<svg style="left:1993.2px;top:1594px;width:20px;height:22px;" viewBox="0 0 5 5.5"><path d="M0 1.700H1.600L4.500 0V5.500L1.600 3.800H0Z" fill="#f98511"/></svg>
<svg style="left:2080px;top:1596px;width:32px;height:18px;" viewBox="0 0 8 4.5"><path d="M0 0L8 4.500V0L0 4.500Z" fill="#8a8a8a"/></svg>
<div style="left:2151.2px;top:1504px;width:112px;height:116px;background:#2a2a2a;border-radius:4px;"></div>
<div style="left:2158px;top:1520px;width:14px;height:92px;background:#3c3c3c;"></div>
<svg style="left:2154px;top:1506px;width:106.4px;height:16px;" viewBox="0 0 26.6 4"><path d="M0.600 4V1.800Q0.600 0.600 1.800 0.600H24.800Q26 0.600 26 1.800V4" fill="none" stroke="#f98511" stroke-width="1.100"/></svg>
<span class="t" style="top:1543px;font-size:30px;line-height:46px;color:#f0f0f0;font-weight:700;left:1414px;width:1600px;text-align:center;transform-origin:50% 50%;transform:scaleX(0.756);">Odds</span>
<div style="left:2284px;top:1506px;width:14px;height:112px;background:#2c2c2c;"></div>
<div style="left:2301.2px;top:1506px;width:14px;height:112px;background:#2c2c2c;"></div>
<div style="left:1904.4px;top:1704px;width:420.8px;height:130.8px;background:#464646;border-radius:8px;box-shadow:inset 0 0 0 2px #3c3c3c;"></div>
<span class="t" style="top:1746.8px;font-size:32px;line-height:48px;color:#c8c8c8;left:1130.8px;width:1600px;text-align:center;transform-origin:50% 50%;transform:scaleX(0.950);">S</span>
<svg style="left:1960px;top:1722px;width:88px;height:88px;" viewBox="0 0 22 22"><path d="M4.49 17.51A9.2 9.2 0 1 1 17.51 17.51" fill="none" stroke="#333" stroke-width="1.3"/><path d="M4.49 17.51A9.2 9.2 0 0 1 9.40 1.94" fill="none" stroke="#28c8d0" stroke-width="1.3"/><circle cx="11" cy="11" r="6.6" fill="url(#kw)"/><path d="M10.60 8.73L9.95 5.02" stroke="#222" stroke-width="1.12"/><circle cx="19.40" cy="3.44" r="2.100" fill="#0c2c48" stroke="#3a9be0" stroke-width="1.200"/></svg>
<svg style="left:2050.8px;top:1722px;width:88px;height:88px;" viewBox="0 0 22 22"><path d="M4.92 17.08A8.6 8.6 0 1 1 17.08 17.08" fill="none" stroke="#333" stroke-width="1.2"/><circle cx="11" cy="11" r="6" fill="url(#kg)"/><path d="M11.00 8.90L11.00 5.48" stroke="#f4f4f4" stroke-width="1.10"/><path d="M4.41 5.47A8.6 8.6 0 0 1 17.59 5.47" fill="none" stroke="#28c8d0" stroke-width="1.2"/></svg>
<svg style="left:1993.2px;top:1802px;width:20px;height:22px;" viewBox="0 0 5 5.5"><path d="M0 1.700H1.600L4.500 0V5.500L1.600 3.800H0Z" fill="#28c8d0"/></svg>
<svg style="left:2080px;top:1804px;width:32px;height:18px;" viewBox="0 0 8 4.5"><path d="M0 0L8 4.500V0L0 4.500Z" fill="#8a8a8a"/></svg>
<div style="left:2151.2px;top:1712px;width:112px;height:116px;background:#2a2a2a;border-radius:4px;"></div>
<div style="left:2158px;top:1728px;width:14px;height:92px;background:#3c3c3c;"></div>
<svg style="left:2154px;top:1714px;width:106.4px;height:16px;" viewBox="0 0 26.6 4"><path d="M0.600 4V1.800Q0.600 0.600 1.800 0.600H24.800Q26 0.600 26 1.800V4" fill="none" stroke="#28c8d0" stroke-width="1.100"/></svg>
<span class="t" style="top:1751px;font-size:30px;line-height:46px;color:#f0f0f0;font-weight:700;left:1414px;width:1600px;text-align:center;transform-origin:50% 50%;transform:scaleX(0.747);">Evens</span>
<div style="left:2284px;top:1714px;width:14px;height:112px;background:#2c2c2c;"></div>
<div style="left:2301.2px;top:1714px;width:14px;height:112px;background:#2c2c2c;"></div>
<div style="left:1904.4px;top:1906.4px;width:420.8px;height:130.8px;background:#464646;border-radius:8px;box-shadow:inset 0 0 0 2px #3c3c3c;"></div>
<span class="t" style="top:1949.2px;font-size:32px;line-height:48px;color:#c8c8c8;left:1130.8px;width:1600px;text-align:center;transform-origin:50% 50%;transform:scaleX(0.950);">S</span>
<svg style="left:1960px;top:1924.4px;width:88px;height:88px;" viewBox="0 0 22 22"><path d="M4.49 17.51A9.2 9.2 0 1 1 17.51 17.51" fill="none" stroke="#333" stroke-width="1.3"/><path d="M4.49 17.51A9.2 9.2 0 0 1 16.28 3.46" fill="none" stroke="#9a9a9a" stroke-width="1.3"/><circle cx="11" cy="11" r="6.6" fill="url(#kw)"/><path d="M12.32 9.11L14.48 6.03" stroke="#222" stroke-width="1.12"/><circle cx="19.40" cy="3.44" r="2.100" fill="#0c2c48" stroke="#3a9be0" stroke-width="1.200"/></svg>
<svg style="left:2050.8px;top:1924.4px;width:88px;height:88px;" viewBox="0 0 22 22"><path d="M4.92 17.08A8.6 8.6 0 1 1 17.08 17.08" fill="none" stroke="#333" stroke-width="1.2"/><circle cx="11" cy="11" r="6" fill="url(#kg)"/><path d="M11.00 8.90L11.00 5.48" stroke="#f4f4f4" stroke-width="1.10"/></svg>
<svg style="left:1993.2px;top:2004.4px;width:20px;height:22px;" viewBox="0 0 5 5.5"><path d="M0 1.700H1.600L4.500 0V5.500L1.600 3.800H0Z" fill="#e0e0e0"/></svg>
<svg style="left:2080px;top:2006.4px;width:32px;height:18px;" viewBox="0 0 8 4.5"><path d="M0 0L8 4.500V0L0 4.500Z" fill="#8a8a8a"/></svg>
<div style="left:2151.2px;top:1914.4px;width:112px;height:116px;background:#2a2a2a;border-radius:4px;"></div>
<div style="left:2158px;top:1930.4px;width:14px;height:92px;background:#3c3c3c;"></div>
<svg style="left:2154px;top:1916.4px;width:106.4px;height:16px;" viewBox="0 0 26.6 4"><path d="M0.600 4V1.800Q0.600 0.600 1.800 0.600H24.800Q26 0.600 26 1.800V4" fill="none" stroke="#9a9a9a" stroke-width="1.100"/></svg>
<span class="t" style="top:1953.4px;font-size:30px;line-height:46px;color:#f0f0f0;font-weight:700;left:1414px;width:1600px;text-align:center;transform-origin:50% 50%;transform:scaleX(0.800);">Nons</span>
<div style="left:2284px;top:1916.4px;width:14px;height:112px;background:#2c2c2c;"></div>
<div style="left:2301.2px;top:1916.4px;width:14px;height:112px;background:#2c2c2c;"></div>
<div style="left:2284px;top:1598px;width:14px;height:20px;background:#58a030;"></div>
<div style="left:2301.2px;top:1604px;width:14px;height:14px;background:#58a030;"></div>
<div style="left:2284px;top:1590px;width:14px;height:3.6px;background:#88c040;"></div>
<div style="left:2301.2px;top:1598px;width:14px;height:3.6px;background:#88c040;"></div>
<div style="left:2284px;top:1784px;width:14px;height:42px;background:linear-gradient(#88c040,#4e962c);"></div>
<div style="left:2301.2px;top:1776px;width:14px;height:50px;background:linear-gradient(#88c040,#4e962c);"></div>
<div style="left:2301.2px;top:1762px;width:14px;height:3.6px;background:#d8c030;"></div>
<div style="left:2284px;top:1956px;width:14px;height:72px;background:linear-gradient(#a8c838,#4e962c);"></div>
<div style="left:2301.2px;top:1952px;width:14px;height:76px;background:linear-gradient(#a8c838,#4e962c);"></div>
<div style="left:2284px;top:1946px;width:14px;height:3.6px;background:#e08818;"></div>
<div style="left:2301.2px;top:1942px;width:14px;height:3.6px;background:#e08818;"></div>
<div style="left:1904.4px;top:1642px;width:420.8px;height:50px;background:#383838;border-radius:8px;"></div>
<span class="t" style="top:1643.6px;font-size:32px;line-height:48px;color:#c8c8c8;left:1132px;width:1600px;text-align:center;transform-origin:50% 50%;transform:scaleX(0.900);">↑</span>
<span class="t" style="top:1644.6px;font-size:30px;line-height:46px;color:#d8d8d8;left:1990.4px;transform-origin:0 50%;transform:scaleX(0.921);">Harmonics</span>
<span class="t" style="top:1644.6px;font-size:30px;line-height:46px;color:#f98511;left:2174.8px;transform-origin:0 50%;transform:scaleX(0.846);">Every 2</span>
<span class="t" style="top:1641.4px;font-size:18px;line-height:34px;color:#f98511;left:2262.4px;transform-origin:0 50%;transform:scaleX(1.099);">nd</span>
<div style="left:1904.4px;top:1847.6px;width:420.8px;height:50.4px;background:#383838;border-radius:8px;"></div>
<svg style="left:1924.8px;top:1860px;width:16px;height:28px;" viewBox="0 0 4 7"><path d="M0.500 2.300L2 0.700L3.500 2.300M0.500 4.700L2 6.300L3.500 4.700" fill="none" stroke="#8a8a8a" stroke-width="0.800"/></svg>
<span class="t" style="top:1849.8px;font-size:30px;line-height:46px;color:#d8d8d8;left:1990.4px;transform-origin:0 50%;transform:scaleX(0.963);">Sensitivity</span>
<span class="t" style="top:1849.8px;font-size:30px;line-height:46px;color:#f0f0f0;left:2180px;transform-origin:0 50%;transform:scaleX(0.887);">50.0 %</span>
<div style="left:2339.2px;top:1501.2px;width:170.4px;height:88px;background:#363636;border-radius:8px;"></div>
<svg style="left:2343.2px;top:1504.8px;width:162.4px;height:14px;" viewBox="0 0 40.6 3.5"><path d="M0.600 3.500V1.800Q0.600 0.600 1.800 0.600H38.800Q40 0.600 40 1.800V3.500" fill="none" stroke="#a8a8a8" stroke-width="1"/></svg>
<span class="t" style="top:1524.4px;font-size:28px;line-height:44px;color:#f0f0f0;font-weight:700;left:1624px;width:1600px;text-align:center;transform-origin:50% 50%;transform:scaleX(0.879);">Pre FX</span>
<div style="left:2339.2px;top:1604px;width:170.4px;height:84.8px;background:#363636;border-radius:8px;"></div>
<svg style="left:2343.2px;top:1607.6px;width:162.4px;height:14px;" viewBox="0 0 40.6 3.5"><path d="M0.600 3.500V1.800Q0.600 0.600 1.800 0.600H38.800Q40 0.600 40 1.800V3.500" fill="none" stroke="#a8a8a8" stroke-width="1"/></svg>
<div style="left:2352px;top:1620px;width:30px;height:64px;background:#505050;"></div>
<div style="left:2386px;top:1620px;width:32px;height:64px;background:#585858;"></div>
<span class="t" style="top:1627.2px;font-size:28px;line-height:44px;color:#f0f0f0;font-weight:700;left:1624px;width:1600px;text-align:center;transform-origin:50% 50%;transform:scaleX(0.844);">Post FX</span>
<svg style="left:2356px;top:1871.2px;width:136px;height:136px;" viewBox="0 0 34 34"><path d="M7.38 26.62A13.6 13.6 0 1 1 26.62 26.62" fill="none" stroke="#333" stroke-width="1.4"/><path d="M7.38 26.62A13.6 13.6 0 1 1 26.10 27.11" fill="none" stroke="#f98511" stroke-width="1.4"/><circle cx="17" cy="17" r="9.8" fill="url(#kg)"/><path d="M19.30 19.55L23.03 23.70" stroke="#f4f4f4" stroke-width="1.67"/></svg>
<span class="t" style="top:1989.2px;font-size:32px;line-height:48px;color:#d0d0d0;left:1624px;width:1600px;text-align:center;transform-origin:50% 50%;transform:scaleX(0.884);">Mix</span>
<span class="t" style="top:1740.8px;font-size:40px;line-height:56px;color:#9a9a9a;left:1744.8px;width:1600px;text-align:center;transform-origin:50% 50%;transform:scaleX(1.000);">+</span>
<div style="left:2533.6px;top:1978px;width:10px;height:56px;background:linear-gradient(#a8d040,#4e962c);"></div>
<div style="left:2547.6px;top:1978px;width:10px;height:56px;background:linear-gradient(#a8d040,#4e962c);"></div>
<div style="left:2533.6px;top:1972.8px;width:10px;height:3.6px;background:#d8e060;"></div>
<div style="left:2547.6px;top:1972.8px;width:10px;height:3.6px;background:#d8e060;"></div>
<div style="left:2573.2px;top:1489.2px;width:928px;height:554.8px;background:#4a4a4a;border-radius:12px;"></div>
<svg style="left:2593.2px;top:1508px;width:28px;height:30px;" viewBox="0 0 8 8.500"><path d="M2.200 1.800A3.400 3.400 0 1 0 5.800 1.800" fill="none" stroke="#f98511" stroke-width="1.100"/><path d="M4 0V4" stroke="#f98511" stroke-width="1.100"/></svg>
<svg style="left:2592px;top:1565.2px;width:30px;height:24px;" viewBox="0 0 7.5 6"><path d="M0 0H3L3.700 1.100H7.500V6H0Z" fill="#a8a8a8"/><path d="M0 1.800H7.500" stroke="#4a4a4a" stroke-width="0.500"/></svg>
<span class="t" style="left:2007.2px;top:1748.8px;width:1200px;text-align:center;font-size:28px;line-height:44px;color:#e6e6e6;transform:rotate(-90deg) scaleX(0.936);transform-origin:50% 50%;">DYNAMICS</span>
<svg style="left:2593.2px;top:1968px;width:28px;height:16px;" viewBox="0 0 7 4"><rect x="0.0" y="0.0" width="1.600" height="1.400" fill="#8a8a8a"/><rect x="0.0" y="2.3" width="1.600" height="1.400" fill="#8a8a8a"/><rect x="2.4" y="0.0" width="1.600" height="1.400" fill="#8a8a8a"/><rect x="2.4" y="2.3" width="1.600" height="1.400" fill="#8a8a8a"/><rect x="4.8" y="0.0" width="1.600" height="1.400" fill="#8a8a8a"/><rect x="4.8" y="2.3" width="1.600" height="1.400" fill="#8a8a8a"/></svg>
<svg style="left:2593.2px;top:2013.2px;width:28px;height:14px;" viewBox="0 0 7 3.5"><circle cx="1.300" cy="1.750" r="1.200" fill="#8a8a8a"/><path d="M2 1.750H5" stroke="#8a8a8a" stroke-width="0.800"/><path d="M4.500 0.300L7 1.750L4.500 3.200Z" fill="#8a8a8a"/></svg>
<div style="left:2651.6px;top:1496.4px;width:379.2px;height:246.4px;background:#17171d;border-radius:4px;box-shadow:inset 0 0 0 2.8px #3a3a3a;"></div>
<svg style="left:2651.6px;top:1496.4px;width:379.2px;height:246.4px;" viewBox="0 0 94.8 61.6"><path d="M7.9 0V61.600" stroke="#24242c" stroke-width="0.500"/><path d="M15.8 0V61.600" stroke="#24242c" stroke-width="0.500"/><path d="M23.7 0V61.600" stroke="#24242c" stroke-width="0.500"/><path d="M31.6 0V61.600" stroke="#24242c" stroke-width="0.500"/><path d="M39.5 0V61.600" stroke="#24242c" stroke-width="0.500"/><path d="M47.4 0V61.600" stroke="#24242c" stroke-width="0.500"/><path d="M55.3 0V61.600" stroke="#24242c" stroke-width="0.500"/><path d="M63.2 0V61.600" stroke="#24242c" stroke-width="0.500"/><path d="M71.1 0V61.600" stroke="#24242c" stroke-width="0.500"/><path d="M79.0 0V61.600" stroke="#24242c" stroke-width="0.500"/><path d="M86.9 0V61.600" stroke="#24242c" stroke-width="0.500"/><path d="M0 7.7H94.800" stroke="#24242c" stroke-width="0.500"/><path d="M0 15.4H94.800" stroke="#24242c" stroke-width="0.500"/><path d="M0 23.1H94.800" stroke="#24242c" stroke-width="0.500"/><path d="M0 30.8H94.800" stroke="#24242c" stroke-width="0.500"/><path d="M0 38.5H94.800" stroke="#24242c" stroke-width="0.500"/><path d="M0 46.2H94.800" stroke="#24242c" stroke-width="0.500"/><path d="M0 53.9H94.800" stroke="#24242c" stroke-width="0.500"/><rect x="34.100" y="1" width="7.900" height="59.600" fill="#1a2744" opacity="0.700"/><rect x="59" y="1" width="8.500" height="59.600" fill="#1a2744" opacity="0.700"/><path d="M1.500 59.800L93.300 1.500" stroke="#3a3a42" stroke-width="0.600"/><path d="M1.500 59.800L60 22.500Q64 20 69 18.300L93.300 9.400" stroke="#f98511" stroke-width="1" fill="none"/><circle cx="71.500" cy="17.300" r="0.900" fill="#fff"/></svg>
<div style="left:3039.2px;top:1496.4px;width:350px;height:246.4px;background:#262626;border-radius:4px;"></div>
<svg style="left:3039.2px;top:1496.4px;width:350px;height:246.4px;" viewBox="0 0 87.5 61.6"><rect x="28.2" y="28.0" width="0.6" height="3.5" fill="#3e3e3e"/><rect x="56.6" y="28.2" width="0.6" height="3.3" fill="#3e3e3e"/><rect x="46.6" y="27.2" width="0.6" height="4.3" fill="#3e3e3e"/><rect x="5.0" y="26.7" width="0.6" height="4.8" fill="#3e3e3e"/><rect x="3.3" y="27.0" width="0.6" height="4.5" fill="#3e3e3e"/><rect x="6.1" y="28.2" width="0.6" height="3.3" fill="#3e3e3e"/><rect x="36.9" y="25.6" width="0.6" height="5.9" fill="#3e3e3e"/><rect x="10.8" y="27.7" width="0.6" height="3.8" fill="#3e3e3e"/><rect x="54.6" y="25.2" width="0.6" height="6.3" fill="#3e3e3e"/><rect x="50.2" y="27.1" width="0.6" height="4.4" fill="#3e3e3e"/><rect x="84.9" y="28.3" width="0.6" height="3.2" fill="#3e3e3e"/><rect x="74.7" y="27.5" width="0.6" height="4.0" fill="#3e3e3e"/><rect x="12.6" y="28.1" width="0.6" height="3.4" fill="#3e3e3e"/><rect x="26.8" y="25.6" width="0.6" height="5.9" fill="#3e3e3e"/><rect x="15.7" y="26.5" width="0.6" height="5.0" fill="#3e3e3e"/><rect x="55.6" y="27.2" width="0.6" height="4.3" fill="#3e3e3e"/><rect x="47.7" y="28.3" width="0.6" height="3.2" fill="#3e3e3e"/><rect x="5.2" y="27.8" width="0.6" height="3.7" fill="#3e3e3e"/><rect x="59.2" y="27.0" width="0.6" height="4.5" fill="#3e3e3e"/><rect x="27.3" y="26.5" width="0.6" height="5.0" fill="#3e3e3e"/><rect x="39.4" y="27.5" width="0.6" height="4.0" fill="#3e3e3e"/><rect x="69.1" y="26.1" width="0.6" height="5.4" fill="#3e3e3e"/><rect x="21.2" y="26.5" width="0.6" height="5.0" fill="#3e3e3e"/><rect x="45.7" y="25.4" width="0.6" height="6.1" fill="#3e3e3e"/><rect x="63.5" y="27.5" width="0.6" height="4.0" fill="#3e3e3e"/><rect x="85.3" y="28.1" width="0.6" height="3.4" fill="#3e3e3e"/><rect x="36.4" y="25.9" width="0.6" height="5.6" fill="#3e3e3e"/><rect x="13.2" y="26.8" width="0.6" height="4.7" fill="#3e3e3e"/><rect x="3.4" y="26.2" width="0.6" height="5.3" fill="#3e3e3e"/><rect x="66.5" y="26.5" width="0.6" height="5.0" fill="#3e3e3e"/><rect x="76.2" y="27.4" width="0.6" height="4.1" fill="#3e3e3e"/><rect x="60.5" y="26.4" width="0.6" height="5.1" fill="#3e3e3e"/><rect x="50.5" y="26.9" width="0.6" height="4.6" fill="#3e3e3e"/><rect x="73.1" y="25.2" width="0.6" height="6.3" fill="#3e3e3e"/><rect x="41.2" y="26.2" width="0.6" height="5.3" fill="#3e3e3e"/><rect x="5.3" y="26.0" width="0.6" height="5.5" fill="#3e3e3e"/><rect x="56.3" y="25.0" width="0.6" height="6.5" fill="#3e3e3e"/><rect x="71.5" y="27.5" width="0.6" height="4.0" fill="#3e3e3e"/><rect x="33.6" y="26.2" width="0.6" height="5.3" fill="#3e3e3e"/><rect x="2.0" y="26.9" width="0.6" height="4.6" fill="#3e3e3e"/><rect x="14.6" y="28.1" width="0.6" height="3.4" fill="#3e3e3e"/><rect x="5.1" y="25.8" width="0.6" height="5.7" fill="#3e3e3e"/><rect x="11.3" y="27.6" width="0.6" height="3.9" fill="#3e3e3e"/><rect x="34.0" y="25.5" width="0.6" height="6.0" fill="#3e3e3e"/><rect x="7.0" y="26.9" width="0.6" height="4.6" fill="#3e3e3e"/><rect x="47.8" y="25.4" width="0.6" height="6.1" fill="#3e3e3e"/><rect x="71.3" y="25.5" width="0.6" height="6.0" fill="#3e3e3e"/><rect x="24.2" y="27.0" width="0.6" height="4.5" fill="#3e3e3e"/><rect x="31.2" y="25.4" width="0.6" height="6.1" fill="#3e3e3e"/><rect x="83.3" y="28.0" width="0.6" height="3.5" fill="#3e3e3e"/><rect x="15.3" y="27.7" width="0.6" height="3.8" fill="#3e3e3e"/><rect x="20.3" y="26.8" width="0.6" height="4.7" fill="#3e3e3e"/><rect x="51.3" y="27.6" width="0.6" height="3.9" fill="#3e3e3e"/><rect x="0.4" y="27.0" width="0.6" height="4.5" fill="#3e3e3e"/><rect x="32.1" y="26.5" width="0.6" height="5.0" fill="#3e3e3e"/><rect x="82.9" y="26.1" width="0.6" height="5.4" fill="#3e3e3e"/><rect x="44.8" y="26.3" width="0.6" height="5.2" fill="#3e3e3e"/><rect x="58.8" y="28.3" width="0.6" height="3.2" fill="#3e3e3e"/><rect x="78.3" y="25.8" width="0.6" height="5.7" fill="#3e3e3e"/><rect x="76.1" y="25.7" width="0.6" height="5.8" fill="#3e3e3e"/><rect x="34.1" y="27.1" width="0.6" height="4.4" fill="#3e3e3e"/><rect x="9.0" y="26.3" width="0.6" height="5.2" fill="#3e3e3e"/><rect x="5.4" y="28.3" width="0.6" height="3.2" fill="#3e3e3e"/><rect x="18.2" y="27.9" width="0.6" height="3.6" fill="#3e3e3e"/><rect x="29.6" y="28.3" width="0.6" height="3.2" fill="#3e3e3e"/><rect x="0.0" y="28.0" width="0.6" height="3.5" fill="#3e3e3e"/><rect x="8.8" y="27.2" width="0.6" height="4.3" fill="#3e3e3e"/><rect x="2.2" y="25.4" width="0.6" height="6.1" fill="#3e3e3e"/><rect x="53.4" y="28.0" width="0.6" height="3.5" fill="#3e3e3e"/><rect x="21.9" y="27.3" width="0.6" height="4.2" fill="#3e3e3e"/><rect x="31.7" y="28.1" width="0.6" height="3.4" fill="#3e3e3e"/><rect x="73.9" y="25.0" width="0.6" height="6.5" fill="#3e3e3e"/><rect x="40.5" y="26.8" width="0.6" height="4.7" fill="#3e3e3e"/><rect x="7.5" y="28.1" width="0.6" height="3.4" fill="#3e3e3e"/><rect x="29.8" y="27.6" width="0.6" height="3.9" fill="#3e3e3e"/><rect x="72.1" y="27.9" width="0.6" height="3.6" fill="#3e3e3e"/><rect x="2.0" y="25.2" width="0.6" height="6.3" fill="#3e3e3e"/><rect x="46.0" y="28.0" width="0.6" height="3.5" fill="#3e3e3e"/><rect x="47.3" y="28.4" width="0.6" height="3.1" fill="#3e3e3e"/><rect x="45.9" y="25.1" width="0.6" height="6.4" fill="#3e3e3e"/><rect x="75.1" y="26.1" width="0.6" height="5.4" fill="#3e3e3e"/><rect x="22.7" y="27.2" width="0.6" height="4.3" fill="#3e3e3e"/><rect x="14.5" y="25.8" width="0.6" height="5.7" fill="#3e3e3e"/><rect x="46.3" y="25.8" width="0.6" height="5.7" fill="#3e3e3e"/><rect x="28.7" y="27.7" width="0.6" height="3.8" fill="#3e3e3e"/><rect x="70.6" y="25.1" width="0.6" height="6.4" fill="#3e3e3e"/><rect x="74.2" y="25.7" width="0.6" height="5.8" fill="#3e3e3e"/><rect x="71.2" y="25.9" width="0.6" height="5.6" fill="#3e3e3e"/><rect x="19.7" y="26.7" width="0.6" height="4.8" fill="#3e3e3e"/><rect x="30.9" y="28.4" width="0.6" height="3.1" fill="#3e3e3e"/><rect x="2.4" y="27.5" width="0.6" height="4.0" fill="#3e3e3e"/><rect x="22.5" y="26.1" width="0.6" height="5.4" fill="#3e3e3e"/><rect x="83.2" y="26.9" width="0.6" height="4.6" fill="#3e3e3e"/><rect x="81.5" y="25.0" width="0.6" height="6.5" fill="#3e3e3e"/><rect x="83.1" y="27.2" width="0.6" height="4.3" fill="#3e3e3e"/><rect x="19.2" y="27.7" width="0.6" height="3.8" fill="#3e3e3e"/><rect x="17.1" y="27.8" width="0.6" height="3.7" fill="#3e3e3e"/><rect x="54.3" y="25.3" width="0.6" height="6.2" fill="#3e3e3e"/><rect x="73.1" y="26.8" width="0.6" height="4.7" fill="#3e3e3e"/><rect x="56.8" y="25.7" width="0.6" height="5.8" fill="#3e3e3e"/><rect x="7.4" y="26.2" width="0.6" height="5.3" fill="#3e3e3e"/><rect x="79.2" y="25.8" width="0.6" height="5.7" fill="#3e3e3e"/><rect x="65.3" y="26.8" width="0.6" height="4.7" fill="#3e3e3e"/><rect x="15.5" y="25.7" width="0.6" height="5.8" fill="#3e3e3e"/><rect x="28.9" y="25.7" width="0.6" height="5.8" fill="#3e3e3e"/><rect x="84.5" y="27.1" width="0.6" height="4.4" fill="#3e3e3e"/><rect x="34.9" y="25.2" width="0.6" height="6.3" fill="#3e3e3e"/><rect x="63.1" y="27.9" width="0.6" height="3.6" fill="#3e3e3e"/><rect x="11.1" y="28.0" width="0.6" height="3.5" fill="#3e3e3e"/><rect x="78.7" y="25.7" width="0.6" height="5.8" fill="#3e3e3e"/><path d="M0 31.500L1.6 30.7L3.2 30.5L4.8 30.2L6.4 30.0L8.0 30.0L9.6 33.1L11.2 32.8L12.8 32.6L14.4 32.4L16.0 32.1L17.6 31.9L19.2 31.7L20.8 31.5L22.4 31.2L24.0 31.0L25.6 30.8L27.2 30.5L28.8 30.3L30.4 30.1L32.0 30.0L33.6 33.1L35.2 32.9L36.8 32.7L38.4 32.4L40.0 32.2L41.6 32.0L43.2 31.8L44.8 31.5L46.4 31.3L48.0 31.1L49.6 30.8L51.2 30.6L52.8 30.4L54.4 30.2L56.0 30.0L57.6 30.0L59.2 33.0L60.8 32.7L62.4 32.5L64.0 32.3L65.6 32.1L67.2 31.8L68.8 31.6L70.4 31.4L72.0 31.1L73.6 30.9L75.2 30.7L76.8 30.5L78.4 30.2L80.0 30.0L81.6 30.0L83.2 33.0L84.8 32.8L86.4 32.6L88.0 32.4" stroke="#2aa0e8" stroke-width="1" fill="none"/></svg>
<div style="left:2651.6px;top:1751.2px;width:183.2px;height:225.2px;background:#454545;border-radius:8px;box-shadow:inset 0 0 0 2px #3c3c3c;"></div>
<div style="left:2842.8px;top:1751.2px;width:188px;height:225.2px;background:#454545;border-radius:8px;box-shadow:inset 0 0 0 2px #3c3c3c;"></div>
<div style="left:3039.2px;top:1751.2px;width:232.8px;height:225.2px;background:#454545;border-radius:8px;box-shadow:inset 0 0 0 2px #3c3c3c;"></div>
<div style="left:3277.6px;top:1751.2px;width:112px;height:225.2px;background:#454545;border-radius:8px;box-shadow:inset 0 0 0 2px #3c3c3c;"></div>
<svg style="left:2652px;top:1754px;width:88px;height:88px;" viewBox="0 0 22 22"><path d="M5.20 16.80A8.2 8.2 0 1 1 16.80 16.80" fill="none" stroke="#333" stroke-width="1.2"/><circle cx="11" cy="11" r="5.8" fill="url(#kg)"/><path d="M10.89 8.97L10.72 5.67" stroke="#f4f4f4" stroke-width="1.10"/></svg>
<svg style="left:2744px;top:1754px;width:88px;height:88px;" viewBox="0 0 22 22"><path d="M5.20 16.80A8.2 8.2 0 1 1 16.80 16.80" fill="none" stroke="#333" stroke-width="1.2"/><path d="M5.20 16.80A8.2 8.2 0 0 1 3.08 8.88" fill="none" stroke="#f98511" stroke-width="1.2"/><circle cx="11" cy="11" r="5.8" fill="url(#kg)"/><path d="M9.04 10.47L5.85 9.62" stroke="#f4f4f4" stroke-width="1.10"/></svg>
<svg style="left:2849.6px;top:1754px;width:88px;height:88px;" viewBox="0 0 22 22"><path d="M5.20 16.80A8.2 8.2 0 1 1 16.80 16.80" fill="none" stroke="#333" stroke-width="1.2"/><path d="M11.00 2.80A8.2 8.2 0 0 1 17.28 5.73" fill="none" stroke="#f98511" stroke-width="1.2"/><circle cx="11" cy="11" r="5.8" fill="url(#kg)"/><path d="M12.56 9.70L15.09 7.57" stroke="#f4f4f4" stroke-width="1.10"/></svg>
<svg style="left:2937.6px;top:1754px;width:88px;height:88px;" viewBox="0 0 22 22"><path d="M5.20 16.80A8.2 8.2 0 1 1 16.80 16.80" fill="none" stroke="#333" stroke-width="1.2"/><path d="M5.20 16.80A8.2 8.2 0 0 1 3.08 13.12" fill="none" stroke="#f98511" stroke-width="1.2"/><circle cx="11" cy="11" r="5.8" fill="url(#kg)"/><path d="M9.04 11.53L5.85 12.38" stroke="#f4f4f4" stroke-width="1.10"/></svg>
<svg style="left:2692px;top:1761.2px;width:8px;height:8px;" viewBox="0 0 2 2"><circle cx="1" cy="1" r="0.800" fill="#f98511"/></svg>
<span class="t" style="top:1825.8px;font-size:30px;line-height:46px;color:#d8d8d8;left:1896px;width:1600px;text-align:center;transform-origin:50% 50%;transform:scaleX(0.885);">Ratio</span>
<span class="t" style="top:1825.8px;font-size:30px;line-height:46px;color:#d8d8d8;left:1988px;width:1600px;text-align:center;transform-origin:50% 50%;transform:scaleX(0.885);">Knee</span>
<span class="t" style="top:1825.8px;font-size:30px;line-height:46px;color:#d8d8d8;left:2093.6px;width:1600px;text-align:center;transform-origin:50% 50%;transform:scaleX(0.885);">Ratio</span>
<span class="t" style="top:1825.8px;font-size:30px;line-height:46px;color:#d8d8d8;left:2181.6px;width:1600px;text-align:center;transform-origin:50% 50%;transform:scaleX(0.885);">Knee</span>
<svg style="left:2690.8px;top:1857.6px;width:88px;height:88px;" viewBox="0 0 22 22"><path d="M4.92 17.08A8.6 8.6 0 1 1 17.08 17.08" fill="none" stroke="#333" stroke-width="1.2"/><path d="M4.92 17.08A8.6 8.6 0 0 1 10.25 2.43" fill="none" stroke="#f98511" stroke-width="1.2"/><circle cx="11" cy="11" r="6" fill="url(#kg)"/><path d="M10.82 8.91L10.52 5.50" stroke="#f4f4f4" stroke-width="1.10"/></svg>
<svg style="left:2887.2px;top:1857.6px;width:88px;height:88px;" viewBox="0 0 22 22"><path d="M4.92 17.08A8.6 8.6 0 1 1 17.08 17.08" fill="none" stroke="#333" stroke-width="1.2"/><path d="M19.08 8.06A8.6 8.6 0 0 1 17.08 17.08" fill="none" stroke="#f98511" stroke-width="1.2"/><circle cx="11" cy="11" r="6" fill="url(#kg)"/><path d="M12.97 10.28L16.19 9.11" stroke="#f4f4f4" stroke-width="1.10"/></svg>
<span class="t" style="top:1927.8px;font-size:30px;line-height:46px;color:#d8d8d8;left:1937.6px;width:1600px;text-align:center;transform-origin:50% 50%;transform:scaleX(0.910);">Lo Threshold</span>
<span class="t" style="top:1927.8px;font-size:30px;line-height:46px;color:#d8d8d8;left:2134px;width:1600px;text-align:center;transform-origin:50% 50%;transform:scaleX(0.932);">Hi Threshold</span>
<div style="left:3052px;top:1768.8px;width:100px;height:44.8px;background:#f98511;border-radius:8px 0 0 8px;"></div>
<div style="left:3152px;top:1768.8px;width:102px;height:44.8px;background:#6c6c6c;border-radius:0 8px 8px 0;"></div>
<span class="t" style="top:1768.6px;font-size:30px;line-height:46px;color:#2a1604;font-weight:700;left:2302px;width:1600px;text-align:center;transform-origin:50% 50%;transform:scaleX(0.828);">Peak</span>
<span class="t" style="top:1768.6px;font-size:30px;line-height:46px;color:#f0f0f0;font-weight:700;left:2402.8px;width:1600px;text-align:center;transform-origin:50% 50%;transform:scaleX(0.840);">RMS</span>
<svg style="left:3042.8px;top:1836px;width:112px;height:112px;" viewBox="0 0 28 28"><path d="M6.36 21.64A10.8 10.8 0 1 1 21.64 21.64" fill="none" stroke="#333" stroke-width="1.3"/><path d="M6.77 22.03A10.8 10.8 0 0 1 6.36 21.64" fill="none" stroke="#f98511" stroke-width="1.3"/><circle cx="14" cy="14" r="8" fill="url(#kg)"/><path d="M12.13 16.08L9.08 19.47" stroke="#f4f4f4" stroke-width="1.36"/></svg>
<svg style="left:3147.6px;top:1836px;width:112px;height:112px;" viewBox="0 0 28 28"><path d="M6.36 21.64A10.8 10.8 0 1 1 21.64 21.64" fill="none" stroke="#333" stroke-width="1.3"/><path d="M6.36 21.64A10.8 10.8 0 0 1 17.69 3.85" fill="none" stroke="#f98511" stroke-width="1.3"/><circle cx="14" cy="14" r="8" fill="url(#kg)"/><path d="M14.96 11.37L16.52 7.08" stroke="#f4f4f4" stroke-width="1.36"/></svg>
<svg style="left:3274.4px;top:1836px;width:112px;height:112px;" viewBox="0 0 28 28"><path d="M6.36 21.64A10.8 10.8 0 1 1 21.64 21.64" fill="none" stroke="#333" stroke-width="1.3"/><circle cx="14" cy="14" r="8" fill="url(#kg)"/><path d="M14.00 11.20L14.00 6.64" stroke="#f4f4f4" stroke-width="1.36"/></svg>
<svg style="left:3327.2px;top:1844px;width:8px;height:8px;" viewBox="0 0 2 2"><circle cx="1" cy="1" r="0.800" fill="#f98511"/></svg>
<span class="t" style="top:1927.8px;font-size:30px;line-height:46px;color:#d8d8d8;left:2298.8px;width:1600px;text-align:center;transform-origin:50% 50%;transform:scaleX(0.960);">Attack</span>
<span class="t" style="top:1927.8px;font-size:30px;line-height:46px;color:#d8d8d8;left:2403.6px;width:1600px;text-align:center;transform-origin:50% 50%;transform:scaleX(0.854);">Release</span>
<span class="t" style="top:1927.8px;font-size:30px;line-height:46px;color:#d8d8d8;left:2531.2px;width:1600px;text-align:center;transform-origin:50% 50%;transform:scaleX(0.977);">Output</span>
<svg style="left:2664px;top:1992px;width:32px;height:36px;" viewBox="0 0 8 9"><circle cx="4" cy="1.600" r="1.200" fill="none" stroke="#e0e0e0" stroke-width="0.800"/><path d="M4 2.800V6.500M0.500 6.500H7.500M4 4.500L1 6.500M4 4.500L7 6.500" stroke="#e0e0e0" stroke-width="0.800" fill="none"/><circle cx="4" cy="7" r="1.300" fill="#e0e0e0"/></svg>
<div style="left:2705.6px;top:1987.2px;width:313.6px;height:48px;background:#6a6a6a;border-radius:8px;"></div>
<svg style="left:2718px;top:1999.2px;width:24px;height:24px;" viewBox="0 0 6 6"><path d="M0 0L6 3L0 6L1.200 3Z" fill="#e8e8e8"/></svg>
<span class="t" style="top:1987.6px;font-size:32px;line-height:48px;color:#f0f0f0;left:2752px;transform-origin:0 50%;transform:scaleX(0.832);">Kick (POST)</span>
<svg style="left:2996px;top:2007.2px;width:12.8px;height:9.2px;" viewBox="0 0 3.2 2.3"><path d="M0 0H3.200L1.600 2.300Z" fill="#ddd"/></svg>
<div style="left:3040px;top:1988.8px;width:216px;height:46px;background:#1c1c1c;border-radius:8px;"></div>
<div style="left:3049.2px;top:1998px;width:3.2px;height:28px;background:#555;"></div>
<span class="t" style="top:1990.2px;font-size:30px;line-height:46px;color:#f98511;right:852px;transform-origin:100% 50%;transform:scaleX(0.899);">0.0 dB</span>
<div style="left:3280.8px;top:1987.2px;width:106px;height:48.8px;background:#2a2a2a;border-radius:8px;"></div>
<svg style="left:3284px;top:1989.2px;width:100px;height:14px;" viewBox="0 0 25 3.5"><path d="M0.600 3.500V1.800Q0.600 0.600 1.800 0.600H23.200Q24.400 0.600 24.400 1.800V3.500" fill="none" stroke="#3a78b8" stroke-width="1"/></svg>
<span class="t" style="top:1993.2px;font-size:28px;line-height:44px;color:#f0f0f0;font-weight:700;left:2534px;width:1600px;text-align:center;transform-origin:50% 50%;transform:scaleX(0.797);">Sc FX</span>
<div style="left:3398.4px;top:1494px;width:102.4px;height:548px;background:#3c3c3c;border-radius:0 12px 12px 0;"></div>
<span class="t" style="top:1633.8px;font-size:26px;line-height:42px;color:#c0c0c0;left:3409.2px;transform-origin:0 50%;transform:scaleX(0.927);">10</span>
<div style="left:3446px;top:1653.2px;width:12px;height:3.6px;background:#c0c0c0;"></div>
<span class="t" style="top:1751px;font-size:26px;line-height:42px;color:#c0c0c0;left:3409.2px;transform-origin:0 50%;transform:scaleX(0.927);">20</span>
<div style="left:3446px;top:1770.4px;width:12px;height:3.6px;background:#c0c0c0;"></div>
<span class="t" style="top:1868.6px;font-size:26px;line-height:42px;color:#c0c0c0;left:3409.2px;transform-origin:0 50%;transform:scaleX(0.927);">30</span>
<div style="left:3446px;top:1888px;width:12px;height:3.6px;background:#c0c0c0;"></div>
<span class="t" style="top:1983px;font-size:26px;line-height:42px;color:#c0c0c0;left:3409.2px;transform-origin:0 50%;transform:scaleX(0.927);">40</span>
<div style="left:3446px;top:2002.4px;width:12px;height:3.6px;background:#c0c0c0;"></div>
<div style="left:3448px;top:1533.2px;width:10px;height:3.6px;background:#c0c0c0;"></div>
<div style="left:3468.8px;top:1510px;width:32px;height:526px;background:#333;"></div>
<div style="left:3468.8px;top:1733.6px;width:32px;height:293.6px;background:linear-gradient(#a8d038,#5aa630 40%,#3e8a26);"></div>
<div style="left:3468.8px;top:1733.6px;width:32px;height:14px;background:#e8d838;"></div>
<div style="left:3468.8px;top:1672px;width:32px;height:6px;background:#f98511;"></div>
<div style="left:3408px;top:1724px;width:58px;height:3.6px;background:#d82848;"></div>
<div style="left:3408px;top:1885.2px;width:48px;height:3.6px;background:#d82848;"></div>
<div style="left:0px;top:2080px;width:4096px;height:100px;background:#2f2f2f;"></div>
<span class="t" style="top:2106.4px;font-size:32px;line-height:48px;color:#f98511;font-weight:700;left:-746px;width:1600px;text-align:center;transform-origin:50% 50%;transform:scaleX(1.000);font-family:'Liberation Serif',serif;">i</span>
<div style="left:99.6px;top:2104px;width:6.8px;height:52px;background:#6e6e6e;"></div>
<span class="t" style="top:2107.4px;font-size:30px;line-height:46px;color:#f98511;left:144px;transform-origin:0 50%;transform:scaleX(0.890);">ARRANGE</span>
<span class="t" style="top:2107.4px;font-size:30px;line-height:46px;color:#e0e0e0;left:315.2px;transform-origin:0 50%;transform:scaleX(0.975);">MIX</span>
<span class="t" style="top:2107.4px;font-size:30px;line-height:46px;color:#e0e0e0;left:406px;transform-origin:0 50%;transform:scaleX(0.937);">EDIT</span>
<div style="left:509.6px;top:2104px;width:6.8px;height:52px;background:#6e6e6e;"></div>
<svg style="left:548px;top:2118px;width:32px;height:28px;" viewBox="0 0 8 7"><g fill="#e0e0e0"><rect x="0" y="0" width="1.600" height="1.400"/><rect x="2.300" y="2.600" width="1.600" height="1.400"/><rect x="5" y="2.600" width="1.600" height="1.400"/><rect x="0" y="5.200" width="1.600" height="1.400"/><rect x="2.300" y="5.200" width="1.600" height="1.400"/><rect x="5" y="0.800" width="1.600" height="1.400"/></g></svg>
<svg style="left:630px;top:2118px;width:28px;height:28px;" viewBox="0 0 7 7"><circle cx="1.900" cy="5.100" r="1.500" fill="#d0d0d0"/><circle cx="5.100" cy="1.900" r="1.500" fill="#d0d0d0"/><path d="M2 5L5 2" stroke="#d0d0d0" stroke-width="1.200"/></svg>
<svg style="left:704px;top:2113.2px;width:40px;height:36px;" viewBox="0 0 10 9"><rect x="0.900" y="0.900" width="8" height="7.200" rx="1.400" fill="none" stroke="#f98511" stroke-width="1.600"/></svg>
<svg style="left:788px;top:2115.2px;width:30px;height:32px;" viewBox="0 0 7.5 8"><path d="M0 0H1.800V8H0ZM2.800 0H4.600V8H2.800ZM5.600 0H7.400V8H5.600Z" fill="#e8e8e8"/></svg>
<span class="t" style="top:2109.8px;font-size:26px;line-height:42px;color:#c0c0c0;left:890px;transform-origin:0 50%;transform:scaleX(0.966);">CLICK</span>
<span class="t" style="top:2110.8px;font-size:24px;line-height:40px;color:#7a7a7a;font-weight:500;left:980px;transform-origin:0 50%;transform:scaleX(1.034);">選択 オーディオトラック</span>
<span class="t" style="top:2109.8px;font-size:26px;line-height:42px;color:#c0c0c0;left:1316px;transform-origin:0 50%;transform:scaleX(0.932);">DRAG</span>
<span class="t" style="top:2110.8px;font-size:24px;line-height:40px;color:#7a7a7a;font-weight:500;left:1406px;transform-origin:0 50%;transform:scaleX(1.029);">ドラッグ オーディオトラック</span>
<span class="t" style="top:2109.8px;font-size:26px;line-height:42px;color:#c0c0c0;left:1790px;transform-origin:0 50%;transform:scaleX(0.939);">CTRL+CLICK</span>
<span class="t" style="top:2110.8px;font-size:24px;line-height:40px;color:#7a7a7a;font-weight:500;left:1980px;transform-origin:0 50%;transform:scaleX(0.875);">選択から解除</span>
<span class="t" style="top:2109.8px;font-size:26px;line-height:42px;color:#c0c0c0;left:2164px;transform-origin:0 50%;transform:scaleX(0.960);">ALT+CLICK</span>
<span class="t" style="top:2110.8px;font-size:24px;line-height:40px;color:#e8e8e8;font-weight:500;left:2314px;transform-origin:0 50%;transform:scaleX(1.062);">名称変更</span>
<span class="t" style="top:2109.8px;font-size:26px;line-height:42px;color:#c0c0c0;left:2470px;transform-origin:0 50%;transform:scaleX(0.977);">CTRL+ALT+DRAG</span>
<span class="t" style="top:2110.8px;font-size:24px;line-height:40px;color:#7a7a7a;font-weight:500;left:2700px;transform-origin:0 50%;transform:scaleX(1.042);">パン</span>
<span class="t" style="top:2109.8px;font-size:26px;line-height:42px;color:#c0c0c0;left:2802.4px;transform-origin:0 50%;transform:scaleX(0.978);">DOUBLE-CLICK</span>
<span class="t" style="top:2110.8px;font-size:24px;line-height:40px;color:#7a7a7a;font-weight:500;left:3012.8px;transform-origin:0 50%;transform:scaleX(1.033);">表示 - デバイス</span>
<svg style="left:3684px;top:2114px;width:32px;height:28px;" viewBox="0 0 8 7"><path d="M0 1H3L3.800 0H8V7H0Z" fill="#f98511"/></svg>
<svg style="left:3768px;top:2114px;width:26px;height:30px;" viewBox="0 0 6.5 7.5"><path d="M0 0H4L6.500 2.500V7.500H0Z" fill="#d8d8d8"/><path d="M4 0V2.500H6.500" fill="none" stroke="#3a3a3a" stroke-width="0.600"/></svg>
<svg style="left:3844px;top:2116px;width:32px;height:28px;" viewBox="0 0 8 7"><path d="M0 2H8M0 5H8" stroke="#d8d8d8" stroke-width="1"/><path d="M2 0L0 2L2 4M6 3L8 5L6 7" stroke="#d8d8d8" stroke-width="1" fill="none"/></svg>
<svg style="left:3934px;top:2113.2px;width:28px;height:32px;" viewBox="0 0 7 8"><path d="M1.500 4V0.800C1.500 0 2.800 0 2.800 0.800V3.200L6 3.800Q7 4 7 5V8H2.300L0 5.300Q0 4.300 1.500 4Z" fill="#d8d8d8"/></svg>
<div style="left:3995.6px;top:2104px;width:6.8px;height:52px;background:#6e6e6e;"></div>
<svg style="left:4028px;top:2115.2px;width:30px;height:32px;" viewBox="0 0 7.5 8"><path d="M0 0H1.800V8H0ZM2.800 0H4.600V8H2.800ZM5.600 0H7.400V8H5.600ZM0 5.500H7.400V8H0Z" fill="#e8e8e8"/></svg>
</div>
</body></html>
